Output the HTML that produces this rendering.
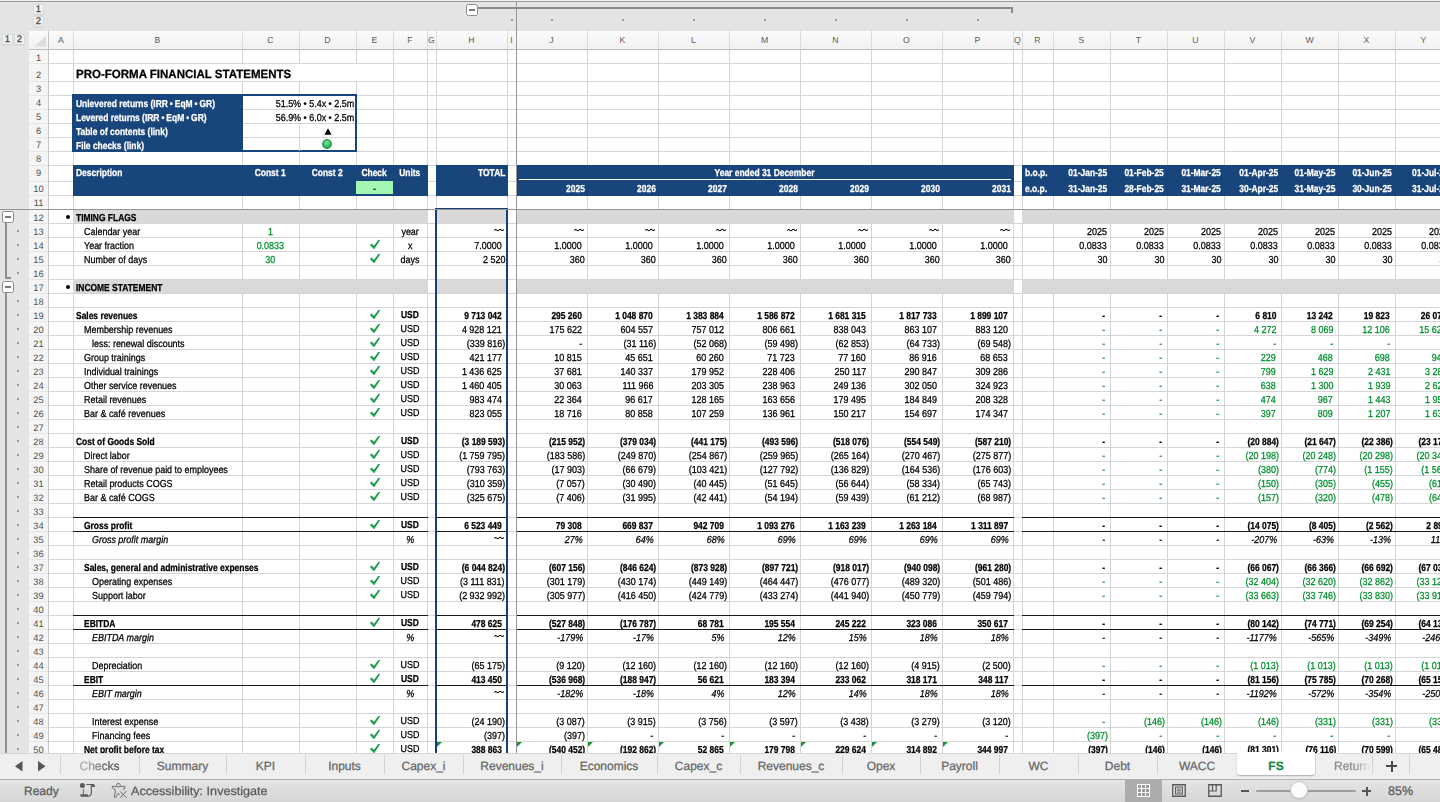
<!DOCTYPE html>
<html><head><meta charset="utf-8"><title>FS</title>
<style>
html,body{margin:0;padding:0;}
body{width:1440px;height:802px;overflow:hidden;position:relative;font-family:"Liberation Sans", sans-serif;font-size:9px;color:#000;background:#e4e4e4;text-rendering:geometricPrecision;}
body>div,body>svg{position:absolute;}
.t{overflow:visible;box-sizing:border-box;-webkit-text-stroke:0.25px currentColor;}
.h{-webkit-text-stroke:0;}
</style></head><body>
<div style="left:0px;top:0px;width:1440px;height:802px;background:#e4e4e4;"></div>
<div style="left:0px;top:0px;width:1440px;height:1px;background:#f0f0f0;"></div>
<div style="left:0px;top:1px;width:1440px;height:1px;background:#9a9a9a;"></div>
<div style="left:49px;top:50px;width:1391px;height:703px;background:#ffffff;"></div>
<div style="left:29px;top:31px;width:1411px;height:18px;background:linear-gradient(#fbfbfb,#f1f1f1)"></div>
<div style="left:29px;top:49px;width:1411px;height:1px;background:#bdbdbd;"></div>
<div style="left:29px;top:50px;width:19px;height:703px;background:#f5f5f5;"></div>
<div style="left:48px;top:31px;width:1px;height:722px;background:#c4c4c4;"></div>
<div style="left:73px;top:50px;width:1px;height:703px;background:#d5d5d5;"></div>
<div style="left:242px;top:50px;width:1px;height:703px;background:#d5d5d5;"></div>
<div style="left:299px;top:50px;width:1px;height:703px;background:#d5d5d5;"></div>
<div style="left:356px;top:50px;width:1px;height:703px;background:#d5d5d5;"></div>
<div style="left:393px;top:50px;width:1px;height:703px;background:#d5d5d5;"></div>
<div style="left:427px;top:50px;width:1px;height:703px;background:#d5d5d5;"></div>
<div style="left:436px;top:50px;width:1px;height:703px;background:#d5d5d5;"></div>
<div style="left:507px;top:50px;width:1px;height:703px;background:#d5d5d5;"></div>
<div style="left:516px;top:50px;width:1px;height:703px;background:#d5d5d5;"></div>
<div style="left:587px;top:50px;width:1px;height:703px;background:#d5d5d5;"></div>
<div style="left:658px;top:50px;width:1px;height:703px;background:#d5d5d5;"></div>
<div style="left:729px;top:50px;width:1px;height:703px;background:#d5d5d5;"></div>
<div style="left:800px;top:50px;width:1px;height:703px;background:#d5d5d5;"></div>
<div style="left:871px;top:50px;width:1px;height:703px;background:#d5d5d5;"></div>
<div style="left:942px;top:50px;width:1px;height:703px;background:#d5d5d5;"></div>
<div style="left:1013px;top:50px;width:1px;height:703px;background:#d5d5d5;"></div>
<div style="left:1022px;top:50px;width:1px;height:703px;background:#d5d5d5;"></div>
<div style="left:1053px;top:50px;width:1px;height:703px;background:#d5d5d5;"></div>
<div style="left:1110px;top:50px;width:1px;height:703px;background:#d5d5d5;"></div>
<div style="left:1167px;top:50px;width:1px;height:703px;background:#d5d5d5;"></div>
<div style="left:1224px;top:50px;width:1px;height:703px;background:#d5d5d5;"></div>
<div style="left:1281px;top:50px;width:1px;height:703px;background:#d5d5d5;"></div>
<div style="left:1338px;top:50px;width:1px;height:703px;background:#d5d5d5;"></div>
<div style="left:1395px;top:50px;width:1px;height:703px;background:#d5d5d5;"></div>
<div style="left:1452px;top:50px;width:1px;height:703px;background:#d5d5d5;"></div>
<div style="left:49px;top:63px;width:1391px;height:1px;background:#d5d5d5;"></div>
<div style="left:49px;top:81px;width:1391px;height:1px;background:#d5d5d5;"></div>
<div style="left:49px;top:95px;width:1391px;height:1px;background:#d5d5d5;"></div>
<div style="left:49px;top:109px;width:1391px;height:1px;background:#d5d5d5;"></div>
<div style="left:49px;top:123px;width:1391px;height:1px;background:#d5d5d5;"></div>
<div style="left:49px;top:137px;width:1391px;height:1px;background:#d5d5d5;"></div>
<div style="left:49px;top:151px;width:1391px;height:1px;background:#d5d5d5;"></div>
<div style="left:49px;top:165px;width:1391px;height:1px;background:#d5d5d5;"></div>
<div style="left:49px;top:181px;width:1391px;height:1px;background:#d5d5d5;"></div>
<div style="left:49px;top:195px;width:1391px;height:1px;background:#d5d5d5;"></div>
<div style="left:49px;top:209px;width:1391px;height:1px;background:#d5d5d5;"></div>
<div style="left:49px;top:223px;width:1391px;height:1px;background:#d5d5d5;"></div>
<div style="left:49px;top:237px;width:1391px;height:1px;background:#d5d5d5;"></div>
<div style="left:49px;top:251px;width:1391px;height:1px;background:#d5d5d5;"></div>
<div style="left:49px;top:265px;width:1391px;height:1px;background:#d5d5d5;"></div>
<div style="left:49px;top:279px;width:1391px;height:1px;background:#d5d5d5;"></div>
<div style="left:49px;top:293px;width:1391px;height:1px;background:#d5d5d5;"></div>
<div style="left:49px;top:307px;width:1391px;height:1px;background:#d5d5d5;"></div>
<div style="left:49px;top:321px;width:1391px;height:1px;background:#d5d5d5;"></div>
<div style="left:49px;top:335px;width:1391px;height:1px;background:#d5d5d5;"></div>
<div style="left:49px;top:349px;width:1391px;height:1px;background:#d5d5d5;"></div>
<div style="left:49px;top:363px;width:1391px;height:1px;background:#d5d5d5;"></div>
<div style="left:49px;top:377px;width:1391px;height:1px;background:#d5d5d5;"></div>
<div style="left:49px;top:391px;width:1391px;height:1px;background:#d5d5d5;"></div>
<div style="left:49px;top:405px;width:1391px;height:1px;background:#d5d5d5;"></div>
<div style="left:49px;top:419px;width:1391px;height:1px;background:#d5d5d5;"></div>
<div style="left:49px;top:433px;width:1391px;height:1px;background:#d5d5d5;"></div>
<div style="left:49px;top:447px;width:1391px;height:1px;background:#d5d5d5;"></div>
<div style="left:49px;top:461px;width:1391px;height:1px;background:#d5d5d5;"></div>
<div style="left:49px;top:475px;width:1391px;height:1px;background:#d5d5d5;"></div>
<div style="left:49px;top:489px;width:1391px;height:1px;background:#d5d5d5;"></div>
<div style="left:49px;top:503px;width:1391px;height:1px;background:#d5d5d5;"></div>
<div style="left:49px;top:517px;width:1391px;height:1px;background:#d5d5d5;"></div>
<div style="left:49px;top:531px;width:1391px;height:1px;background:#d5d5d5;"></div>
<div style="left:49px;top:545px;width:1391px;height:1px;background:#d5d5d5;"></div>
<div style="left:49px;top:559px;width:1391px;height:1px;background:#d5d5d5;"></div>
<div style="left:49px;top:573px;width:1391px;height:1px;background:#d5d5d5;"></div>
<div style="left:49px;top:587px;width:1391px;height:1px;background:#d5d5d5;"></div>
<div style="left:49px;top:601px;width:1391px;height:1px;background:#d5d5d5;"></div>
<div style="left:49px;top:615px;width:1391px;height:1px;background:#d5d5d5;"></div>
<div style="left:49px;top:629px;width:1391px;height:1px;background:#d5d5d5;"></div>
<div style="left:49px;top:643px;width:1391px;height:1px;background:#d5d5d5;"></div>
<div style="left:49px;top:657px;width:1391px;height:1px;background:#d5d5d5;"></div>
<div style="left:49px;top:671px;width:1391px;height:1px;background:#d5d5d5;"></div>
<div style="left:49px;top:685px;width:1391px;height:1px;background:#d5d5d5;"></div>
<div style="left:49px;top:699px;width:1391px;height:1px;background:#d5d5d5;"></div>
<div style="left:49px;top:713px;width:1391px;height:1px;background:#d5d5d5;"></div>
<div style="left:49px;top:727px;width:1391px;height:1px;background:#d5d5d5;"></div>
<div style="left:49px;top:741px;width:1391px;height:1px;background:#d5d5d5;"></div>
<div style="left:73px;top:31px;width:1px;height:18px;background:#dcdcdc;"></div>
<div style="left:242px;top:31px;width:1px;height:18px;background:#dcdcdc;"></div>
<div style="left:299px;top:31px;width:1px;height:18px;background:#dcdcdc;"></div>
<div style="left:356px;top:31px;width:1px;height:18px;background:#dcdcdc;"></div>
<div style="left:393px;top:31px;width:1px;height:18px;background:#dcdcdc;"></div>
<div style="left:427px;top:31px;width:1px;height:18px;background:#dcdcdc;"></div>
<div style="left:436px;top:31px;width:1px;height:18px;background:#dcdcdc;"></div>
<div style="left:507px;top:31px;width:1px;height:18px;background:#dcdcdc;"></div>
<div style="left:516px;top:31px;width:1px;height:18px;background:#dcdcdc;"></div>
<div style="left:587px;top:31px;width:1px;height:18px;background:#dcdcdc;"></div>
<div style="left:658px;top:31px;width:1px;height:18px;background:#dcdcdc;"></div>
<div style="left:729px;top:31px;width:1px;height:18px;background:#dcdcdc;"></div>
<div style="left:800px;top:31px;width:1px;height:18px;background:#dcdcdc;"></div>
<div style="left:871px;top:31px;width:1px;height:18px;background:#dcdcdc;"></div>
<div style="left:942px;top:31px;width:1px;height:18px;background:#dcdcdc;"></div>
<div style="left:1013px;top:31px;width:1px;height:18px;background:#dcdcdc;"></div>
<div style="left:1022px;top:31px;width:1px;height:18px;background:#dcdcdc;"></div>
<div style="left:1053px;top:31px;width:1px;height:18px;background:#dcdcdc;"></div>
<div style="left:1110px;top:31px;width:1px;height:18px;background:#dcdcdc;"></div>
<div style="left:1167px;top:31px;width:1px;height:18px;background:#dcdcdc;"></div>
<div style="left:1224px;top:31px;width:1px;height:18px;background:#dcdcdc;"></div>
<div style="left:1281px;top:31px;width:1px;height:18px;background:#dcdcdc;"></div>
<div style="left:1338px;top:31px;width:1px;height:18px;background:#dcdcdc;"></div>
<div style="left:1395px;top:31px;width:1px;height:18px;background:#dcdcdc;"></div>
<div style="left:1452px;top:31px;width:1px;height:18px;background:#dcdcdc;"></div>
<div style="left:29px;top:63px;width:19px;height:1px;background:#e6e6e6;"></div>
<div style="left:29px;top:81px;width:19px;height:1px;background:#e6e6e6;"></div>
<div style="left:29px;top:95px;width:19px;height:1px;background:#e6e6e6;"></div>
<div style="left:29px;top:109px;width:19px;height:1px;background:#e6e6e6;"></div>
<div style="left:29px;top:123px;width:19px;height:1px;background:#e6e6e6;"></div>
<div style="left:29px;top:137px;width:19px;height:1px;background:#e6e6e6;"></div>
<div style="left:29px;top:151px;width:19px;height:1px;background:#e6e6e6;"></div>
<div style="left:29px;top:165px;width:19px;height:1px;background:#e6e6e6;"></div>
<div style="left:29px;top:181px;width:19px;height:1px;background:#e6e6e6;"></div>
<div style="left:29px;top:195px;width:19px;height:1px;background:#e6e6e6;"></div>
<div style="left:29px;top:209px;width:19px;height:1px;background:#e6e6e6;"></div>
<div style="left:29px;top:223px;width:19px;height:1px;background:#e6e6e6;"></div>
<div style="left:29px;top:237px;width:19px;height:1px;background:#e6e6e6;"></div>
<div style="left:29px;top:251px;width:19px;height:1px;background:#e6e6e6;"></div>
<div style="left:29px;top:265px;width:19px;height:1px;background:#e6e6e6;"></div>
<div style="left:29px;top:279px;width:19px;height:1px;background:#e6e6e6;"></div>
<div style="left:29px;top:293px;width:19px;height:1px;background:#e6e6e6;"></div>
<div style="left:29px;top:307px;width:19px;height:1px;background:#e6e6e6;"></div>
<div style="left:29px;top:321px;width:19px;height:1px;background:#e6e6e6;"></div>
<div style="left:29px;top:335px;width:19px;height:1px;background:#e6e6e6;"></div>
<div style="left:29px;top:349px;width:19px;height:1px;background:#e6e6e6;"></div>
<div style="left:29px;top:363px;width:19px;height:1px;background:#e6e6e6;"></div>
<div style="left:29px;top:377px;width:19px;height:1px;background:#e6e6e6;"></div>
<div style="left:29px;top:391px;width:19px;height:1px;background:#e6e6e6;"></div>
<div style="left:29px;top:405px;width:19px;height:1px;background:#e6e6e6;"></div>
<div style="left:29px;top:419px;width:19px;height:1px;background:#e6e6e6;"></div>
<div style="left:29px;top:433px;width:19px;height:1px;background:#e6e6e6;"></div>
<div style="left:29px;top:447px;width:19px;height:1px;background:#e6e6e6;"></div>
<div style="left:29px;top:461px;width:19px;height:1px;background:#e6e6e6;"></div>
<div style="left:29px;top:475px;width:19px;height:1px;background:#e6e6e6;"></div>
<div style="left:29px;top:489px;width:19px;height:1px;background:#e6e6e6;"></div>
<div style="left:29px;top:503px;width:19px;height:1px;background:#e6e6e6;"></div>
<div style="left:29px;top:517px;width:19px;height:1px;background:#e6e6e6;"></div>
<div style="left:29px;top:531px;width:19px;height:1px;background:#e6e6e6;"></div>
<div style="left:29px;top:545px;width:19px;height:1px;background:#e6e6e6;"></div>
<div style="left:29px;top:559px;width:19px;height:1px;background:#e6e6e6;"></div>
<div style="left:29px;top:573px;width:19px;height:1px;background:#e6e6e6;"></div>
<div style="left:29px;top:587px;width:19px;height:1px;background:#e6e6e6;"></div>
<div style="left:29px;top:601px;width:19px;height:1px;background:#e6e6e6;"></div>
<div style="left:29px;top:615px;width:19px;height:1px;background:#e6e6e6;"></div>
<div style="left:29px;top:629px;width:19px;height:1px;background:#e6e6e6;"></div>
<div style="left:29px;top:643px;width:19px;height:1px;background:#e6e6e6;"></div>
<div style="left:29px;top:657px;width:19px;height:1px;background:#e6e6e6;"></div>
<div style="left:29px;top:671px;width:19px;height:1px;background:#e6e6e6;"></div>
<div style="left:29px;top:685px;width:19px;height:1px;background:#e6e6e6;"></div>
<div style="left:29px;top:699px;width:19px;height:1px;background:#e6e6e6;"></div>
<div style="left:29px;top:713px;width:19px;height:1px;background:#e6e6e6;"></div>
<div style="left:29px;top:727px;width:19px;height:1px;background:#e6e6e6;"></div>
<div style="left:29px;top:741px;width:19px;height:1px;background:#e6e6e6;"></div>
<div class="t h" style="left:49px;width:24px;top:32.99px;height:14px;line-height:14px;font-size:8.7px;color:#5c5c5c;text-align:center;">A</div>
<div class="t h" style="left:73px;width:169px;top:32.99px;height:14px;line-height:14px;font-size:8.7px;color:#5c5c5c;text-align:center;">B</div>
<div class="t h" style="left:242px;width:57px;top:32.99px;height:14px;line-height:14px;font-size:8.7px;color:#5c5c5c;text-align:center;">C</div>
<div class="t h" style="left:299px;width:57px;top:32.99px;height:14px;line-height:14px;font-size:8.7px;color:#5c5c5c;text-align:center;">D</div>
<div class="t h" style="left:356px;width:37px;top:32.99px;height:14px;line-height:14px;font-size:8.7px;color:#5c5c5c;text-align:center;">E</div>
<div class="t h" style="left:393px;width:34px;top:32.99px;height:14px;line-height:14px;font-size:8.7px;color:#5c5c5c;text-align:center;">F</div>
<div class="t h" style="left:427px;width:9px;top:32.99px;height:14px;line-height:14px;font-size:8.7px;color:#5c5c5c;text-align:center;">G</div>
<div class="t h" style="left:436px;width:71px;top:32.99px;height:14px;line-height:14px;font-size:8.7px;color:#5c5c5c;text-align:center;">H</div>
<div class="t h" style="left:507px;width:9px;top:32.99px;height:14px;line-height:14px;font-size:8.7px;color:#5c5c5c;text-align:center;">I</div>
<div class="t h" style="left:516px;width:71px;top:32.99px;height:14px;line-height:14px;font-size:8.7px;color:#5c5c5c;text-align:center;">J</div>
<div class="t h" style="left:587px;width:71px;top:32.99px;height:14px;line-height:14px;font-size:8.7px;color:#5c5c5c;text-align:center;">K</div>
<div class="t h" style="left:658px;width:71px;top:32.99px;height:14px;line-height:14px;font-size:8.7px;color:#5c5c5c;text-align:center;">L</div>
<div class="t h" style="left:729px;width:71px;top:32.99px;height:14px;line-height:14px;font-size:8.7px;color:#5c5c5c;text-align:center;">M</div>
<div class="t h" style="left:800px;width:71px;top:32.99px;height:14px;line-height:14px;font-size:8.7px;color:#5c5c5c;text-align:center;">N</div>
<div class="t h" style="left:871px;width:71px;top:32.99px;height:14px;line-height:14px;font-size:8.7px;color:#5c5c5c;text-align:center;">O</div>
<div class="t h" style="left:942px;width:71px;top:32.99px;height:14px;line-height:14px;font-size:8.7px;color:#5c5c5c;text-align:center;">P</div>
<div class="t h" style="left:1013px;width:9px;top:32.99px;height:14px;line-height:14px;font-size:8.7px;color:#5c5c5c;text-align:center;">Q</div>
<div class="t h" style="left:1022px;width:31px;top:32.99px;height:14px;line-height:14px;font-size:8.7px;color:#5c5c5c;text-align:center;">R</div>
<div class="t h" style="left:1053px;width:57px;top:32.99px;height:14px;line-height:14px;font-size:8.7px;color:#5c5c5c;text-align:center;">S</div>
<div class="t h" style="left:1110px;width:57px;top:32.99px;height:14px;line-height:14px;font-size:8.7px;color:#5c5c5c;text-align:center;">T</div>
<div class="t h" style="left:1167px;width:57px;top:32.99px;height:14px;line-height:14px;font-size:8.7px;color:#5c5c5c;text-align:center;">U</div>
<div class="t h" style="left:1224px;width:57px;top:32.99px;height:14px;line-height:14px;font-size:8.7px;color:#5c5c5c;text-align:center;">V</div>
<div class="t h" style="left:1281px;width:57px;top:32.99px;height:14px;line-height:14px;font-size:8.7px;color:#5c5c5c;text-align:center;">W</div>
<div class="t h" style="left:1338px;width:57px;top:32.99px;height:14px;line-height:14px;font-size:8.7px;color:#5c5c5c;text-align:center;">X</div>
<div class="t h" style="left:1395px;width:57px;top:32.99px;height:14px;line-height:14px;font-size:8.7px;color:#5c5c5c;text-align:center;">Y</div>
<div class="t h" style="left:29px;width:19px;top:50.78px;height:14px;line-height:14px;font-size:9.3px;color:#505050;text-align:center;">1</div>
<div class="t h" style="left:29px;width:19px;top:67.78px;height:14px;line-height:14px;font-size:9.3px;color:#505050;text-align:center;">2</div>
<div class="t h" style="left:29px;width:19px;top:81.78px;height:14px;line-height:14px;font-size:9.3px;color:#505050;text-align:center;">3</div>
<div class="t h" style="left:29px;width:19px;top:95.78px;height:14px;line-height:14px;font-size:9.3px;color:#505050;text-align:center;">4</div>
<div class="t h" style="left:29px;width:19px;top:109.78px;height:14px;line-height:14px;font-size:9.3px;color:#505050;text-align:center;">5</div>
<div class="t h" style="left:29px;width:19px;top:123.78px;height:14px;line-height:14px;font-size:9.3px;color:#505050;text-align:center;">6</div>
<div class="t h" style="left:29px;width:19px;top:137.78px;height:14px;line-height:14px;font-size:9.3px;color:#505050;text-align:center;">7</div>
<div class="t h" style="left:29px;width:19px;top:151.78px;height:14px;line-height:14px;font-size:9.3px;color:#505050;text-align:center;">8</div>
<div class="t h" style="left:29px;width:19px;top:165.78px;height:14px;line-height:14px;font-size:9.3px;color:#505050;text-align:center;">9</div>
<div class="t h" style="left:29px;width:19px;top:181.78px;height:14px;line-height:14px;font-size:9.3px;color:#505050;text-align:center;">10</div>
<div class="t h" style="left:29px;width:19px;top:195.78px;height:14px;line-height:14px;font-size:9.3px;color:#505050;text-align:center;">11</div>
<div class="t h" style="left:29px;width:19px;top:210.78px;height:14px;line-height:14px;font-size:9.3px;color:#505050;text-align:center;">12</div>
<div class="t h" style="left:29px;width:19px;top:224.78px;height:14px;line-height:14px;font-size:9.3px;color:#505050;text-align:center;">13</div>
<div class="t h" style="left:29px;width:19px;top:238.78px;height:14px;line-height:14px;font-size:9.3px;color:#505050;text-align:center;">14</div>
<div class="t h" style="left:29px;width:19px;top:252.78px;height:14px;line-height:14px;font-size:9.3px;color:#505050;text-align:center;">15</div>
<div class="t h" style="left:29px;width:19px;top:266.78px;height:14px;line-height:14px;font-size:9.3px;color:#505050;text-align:center;">16</div>
<div class="t h" style="left:29px;width:19px;top:280.78px;height:14px;line-height:14px;font-size:9.3px;color:#505050;text-align:center;">17</div>
<div class="t h" style="left:29px;width:19px;top:294.78px;height:14px;line-height:14px;font-size:9.3px;color:#505050;text-align:center;">18</div>
<div class="t h" style="left:29px;width:19px;top:308.78px;height:14px;line-height:14px;font-size:9.3px;color:#505050;text-align:center;">19</div>
<div class="t h" style="left:29px;width:19px;top:322.78px;height:14px;line-height:14px;font-size:9.3px;color:#505050;text-align:center;">20</div>
<div class="t h" style="left:29px;width:19px;top:336.78px;height:14px;line-height:14px;font-size:9.3px;color:#505050;text-align:center;">21</div>
<div class="t h" style="left:29px;width:19px;top:350.78px;height:14px;line-height:14px;font-size:9.3px;color:#505050;text-align:center;">22</div>
<div class="t h" style="left:29px;width:19px;top:364.78px;height:14px;line-height:14px;font-size:9.3px;color:#505050;text-align:center;">23</div>
<div class="t h" style="left:29px;width:19px;top:378.78px;height:14px;line-height:14px;font-size:9.3px;color:#505050;text-align:center;">24</div>
<div class="t h" style="left:29px;width:19px;top:392.78px;height:14px;line-height:14px;font-size:9.3px;color:#505050;text-align:center;">25</div>
<div class="t h" style="left:29px;width:19px;top:406.78px;height:14px;line-height:14px;font-size:9.3px;color:#505050;text-align:center;">26</div>
<div class="t h" style="left:29px;width:19px;top:420.78px;height:14px;line-height:14px;font-size:9.3px;color:#505050;text-align:center;">27</div>
<div class="t h" style="left:29px;width:19px;top:434.78px;height:14px;line-height:14px;font-size:9.3px;color:#505050;text-align:center;">28</div>
<div class="t h" style="left:29px;width:19px;top:448.78px;height:14px;line-height:14px;font-size:9.3px;color:#505050;text-align:center;">29</div>
<div class="t h" style="left:29px;width:19px;top:462.78px;height:14px;line-height:14px;font-size:9.3px;color:#505050;text-align:center;">30</div>
<div class="t h" style="left:29px;width:19px;top:476.78px;height:14px;line-height:14px;font-size:9.3px;color:#505050;text-align:center;">31</div>
<div class="t h" style="left:29px;width:19px;top:490.78px;height:14px;line-height:14px;font-size:9.3px;color:#505050;text-align:center;">32</div>
<div class="t h" style="left:29px;width:19px;top:504.78px;height:14px;line-height:14px;font-size:9.3px;color:#505050;text-align:center;">33</div>
<div class="t h" style="left:29px;width:19px;top:518.78px;height:14px;line-height:14px;font-size:9.3px;color:#505050;text-align:center;">34</div>
<div class="t h" style="left:29px;width:19px;top:532.78px;height:14px;line-height:14px;font-size:9.3px;color:#505050;text-align:center;">35</div>
<div class="t h" style="left:29px;width:19px;top:546.78px;height:14px;line-height:14px;font-size:9.3px;color:#505050;text-align:center;">36</div>
<div class="t h" style="left:29px;width:19px;top:560.78px;height:14px;line-height:14px;font-size:9.3px;color:#505050;text-align:center;">37</div>
<div class="t h" style="left:29px;width:19px;top:574.78px;height:14px;line-height:14px;font-size:9.3px;color:#505050;text-align:center;">38</div>
<div class="t h" style="left:29px;width:19px;top:588.78px;height:14px;line-height:14px;font-size:9.3px;color:#505050;text-align:center;">39</div>
<div class="t h" style="left:29px;width:19px;top:602.78px;height:14px;line-height:14px;font-size:9.3px;color:#505050;text-align:center;">40</div>
<div class="t h" style="left:29px;width:19px;top:616.78px;height:14px;line-height:14px;font-size:9.3px;color:#505050;text-align:center;">41</div>
<div class="t h" style="left:29px;width:19px;top:630.78px;height:14px;line-height:14px;font-size:9.3px;color:#505050;text-align:center;">42</div>
<div class="t h" style="left:29px;width:19px;top:644.78px;height:14px;line-height:14px;font-size:9.3px;color:#505050;text-align:center;">43</div>
<div class="t h" style="left:29px;width:19px;top:658.78px;height:14px;line-height:14px;font-size:9.3px;color:#505050;text-align:center;">44</div>
<div class="t h" style="left:29px;width:19px;top:672.78px;height:14px;line-height:14px;font-size:9.3px;color:#505050;text-align:center;">45</div>
<div class="t h" style="left:29px;width:19px;top:686.78px;height:14px;line-height:14px;font-size:9.3px;color:#505050;text-align:center;">46</div>
<div class="t h" style="left:29px;width:19px;top:700.78px;height:14px;line-height:14px;font-size:9.3px;color:#505050;text-align:center;">47</div>
<div class="t h" style="left:29px;width:19px;top:714.78px;height:14px;line-height:14px;font-size:9.3px;color:#505050;text-align:center;">48</div>
<div class="t h" style="left:29px;width:19px;top:728.78px;height:14px;line-height:14px;font-size:9.3px;color:#505050;text-align:center;">49</div>
<div class="t h" style="left:29px;width:19px;top:742.78px;height:14px;line-height:14px;font-size:9.3px;color:#505050;text-align:center;">50</div>
<div style="left:74px;top:64px;width:286px;height:17px;background:#fff;"></div>
<div style="left:72px;top:94px;width:171px;height:58px;background:#19457d;"></div>
<div style="left:242px;top:94px;width:115px;height:58px;background:#19457d;"></div>
<div style="left:243px;top:96px;width:112px;height:54px;background:#fff;"></div>
<div style="left:243px;top:109px;width:112px;height:1px;background:#d5d5d5;"></div>
<div style="left:243px;top:123px;width:112px;height:1px;background:#d5d5d5;"></div>
<div style="left:243px;top:137px;width:112px;height:1px;background:#d5d5d5;"></div>
<div style="left:299px;top:123px;width:1px;height:28px;background:#d5d5d5;"></div>
<div style="left:73px;top:165px;width:355px;height:31px;background:#19457d;"></div>
<div style="left:436px;top:165px;width:72px;height:31px;background:#19457d;"></div>
<div style="left:516px;top:165px;width:498px;height:31px;background:#19457d;"></div>
<div style="left:1022px;top:165px;width:419px;height:31px;background:#19457d;"></div>
<div style="left:356px;top:181px;width:37px;height:13px;background:#a3f7b5;"></div>
<div style="left:519px;top:179px;width:492px;height:1px;background:#ffffff;"></div>
<div style="left:73px;top:210px;width:355px;height:13px;background:#d9d9d9;"></div>
<div style="left:436px;top:210px;width:72px;height:13px;background:#d9d9d9;"></div>
<div style="left:516px;top:210px;width:498px;height:13px;background:#d9d9d9;"></div>
<div style="left:1022px;top:210px;width:419px;height:13px;background:#d9d9d9;"></div>
<div style="left:73px;top:280px;width:355px;height:13px;background:#d9d9d9;"></div>
<div style="left:436px;top:280px;width:72px;height:13px;background:#d9d9d9;"></div>
<div style="left:516px;top:280px;width:498px;height:13px;background:#d9d9d9;"></div>
<div style="left:1022px;top:280px;width:419px;height:13px;background:#d9d9d9;"></div>
<div style="left:74px;top:560px;width:225px;height:13px;background:#fff;"></div>
<div style="left:73px;top:517px;width:355px;height:1px;background:#1a1a1a;"></div>
<div style="left:436px;top:517px;width:72px;height:1px;background:#1a1a1a;"></div>
<div style="left:516px;top:517px;width:498px;height:1px;background:#1a1a1a;"></div>
<div style="left:1022px;top:517px;width:419px;height:1px;background:#1a1a1a;"></div>
<div style="left:73px;top:531px;width:355px;height:1px;background:#1a1a1a;"></div>
<div style="left:436px;top:531px;width:72px;height:1px;background:#1a1a1a;"></div>
<div style="left:516px;top:531px;width:498px;height:1px;background:#1a1a1a;"></div>
<div style="left:1022px;top:531px;width:419px;height:1px;background:#1a1a1a;"></div>
<div style="left:73px;top:615px;width:355px;height:1px;background:#1a1a1a;"></div>
<div style="left:436px;top:615px;width:72px;height:1px;background:#1a1a1a;"></div>
<div style="left:516px;top:615px;width:498px;height:1px;background:#1a1a1a;"></div>
<div style="left:1022px;top:615px;width:419px;height:1px;background:#1a1a1a;"></div>
<div style="left:73px;top:629px;width:355px;height:1px;background:#1a1a1a;"></div>
<div style="left:436px;top:629px;width:72px;height:1px;background:#1a1a1a;"></div>
<div style="left:516px;top:629px;width:498px;height:1px;background:#1a1a1a;"></div>
<div style="left:1022px;top:629px;width:419px;height:1px;background:#1a1a1a;"></div>
<div style="left:73px;top:685px;width:355px;height:1px;background:#1a1a1a;"></div>
<div style="left:436px;top:685px;width:72px;height:1px;background:#1a1a1a;"></div>
<div style="left:516px;top:685px;width:498px;height:1px;background:#1a1a1a;"></div>
<div style="left:1022px;top:685px;width:419px;height:1px;background:#1a1a1a;"></div>
<div class="t" style="left:76px;width:324px;top:66.84px;height:14px;line-height:14px;font-size:12px;font-weight:700;"><span style="display:inline-block;transform:scaleX(0.96);transform-origin:left 11.16px">PRO-FORMA FINANCIAL STATEMENTS</span></div>
<div class="t" style="left:76px;width:164px;top:96.74px;height:14px;line-height:14px;font-size:9.4px;font-weight:700;color:#fff;"><span style="display:inline-block;transform:scale(0.9,1.08);transform-origin:left 10.26px">Unlevered returns (IRR<span style="margin:0 2.2px">•</span>EqM<span style="margin:0 2.2px">•</span>GR)</span></div>
<div class="t" style="left:76px;width:164px;top:110.74px;height:14px;line-height:14px;font-size:9.4px;font-weight:700;color:#fff;"><span style="display:inline-block;transform:scale(0.9,1.08);transform-origin:left 10.26px">Levered returns (IRR<span style="margin:0 2.2px">•</span>EqM<span style="margin:0 2.2px">•</span>GR)</span></div>
<div class="t" style="left:76px;width:164px;top:124.74px;height:14px;line-height:14px;font-size:9.4px;font-weight:700;color:#fff;"><span style="display:inline-block;transform:scale(0.9,1.08);transform-origin:left 10.26px">Table of contents (link)</span></div>
<div class="t" style="left:76px;width:164px;top:138.74px;height:14px;line-height:14px;font-size:9.4px;font-weight:700;color:#fff;"><span style="display:inline-block;transform:scale(0.9,1.08);transform-origin:left 10.26px">File checks (link)</span></div>
<div class="t" style="left:200px;width:154px;top:96.74px;height:14px;line-height:14px;font-size:9.4px;text-align:right;"><span style="display:inline-block;transform:scale(0.955,1.08);transform-origin:right 10.26px">51.5% • 5.4x • 2.5m</span></div>
<div class="t" style="left:200px;width:154px;top:110.74px;height:14px;line-height:14px;font-size:9.4px;text-align:right;"><span style="display:inline-block;transform:scale(0.955,1.08);transform-origin:right 10.26px">56.9% • 6.0x • 2.5m</span></div>
<svg style="left:324px;top:128px" width="8" height="7" viewBox="0 0 8 7"><path d="M4 0.3 L7.6 6.8 L0.4 6.8 Z" fill="#000"/></svg>
<div style="left:322px;top:139px;width:10px;height:10px;border-radius:50%;box-sizing:border-box;border:1px solid #178a3c;background:radial-gradient(circle at 45% 35%,#7fe0a0,#22b455 70%)"></div>
<div class="t" style="left:76px;width:164px;top:165.74px;height:14px;line-height:14px;font-size:9.4px;font-weight:700;color:#ffffff;"><span style="display:inline-block;transform:scale(0.9,1.08);transform-origin:left 10.26px">Description</span></div>
<div class="t" style="left:242px;width:57px;top:165.74px;height:14px;line-height:14px;font-size:9.4px;font-weight:700;color:#ffffff;text-align:center;"><span style="display:inline-block;transform:scale(0.9,1.08);transform-origin:center 10.26px">Const 1</span></div>
<div class="t" style="left:299px;width:57px;top:165.74px;height:14px;line-height:14px;font-size:9.4px;font-weight:700;color:#ffffff;text-align:center;"><span style="display:inline-block;transform:scale(0.9,1.08);transform-origin:center 10.26px">Const 2</span></div>
<div class="t" style="left:356px;width:37px;top:165.74px;height:14px;line-height:14px;font-size:9.4px;font-weight:700;color:#ffffff;text-align:center;"><span style="display:inline-block;transform:scale(0.9,1.08);transform-origin:center 10.26px">Check</span></div>
<div class="t" style="left:393px;width:34px;top:165.74px;height:14px;line-height:14px;font-size:9.4px;font-weight:700;color:#ffffff;text-align:center;"><span style="display:inline-block;transform:scale(0.9,1.08);transform-origin:center 10.26px">Units</span></div>
<div class="t" style="left:440px;width:67px;top:165.74px;height:14px;line-height:14px;font-size:9.4px;font-weight:700;color:#ffffff;text-align:right;padding-right:2px;"><span style="display:inline-block;transform:scale(0.9,1.08);transform-origin:right 10.26px">TOTAL</span></div>
<div class="t" style="left:516px;width:497px;top:165.74px;height:14px;line-height:14px;font-size:9.4px;font-weight:700;color:#ffffff;text-align:center;"><span style="display:inline-block;transform:scale(0.9,1.08);transform-origin:center 10.26px">Year ended 31 December</span></div>
<div class="t" style="left:516px;width:71px;top:181.74px;height:14px;line-height:14px;font-size:9.4px;font-weight:700;color:#ffffff;text-align:right;padding-right:2px;"><span style="display:inline-block;transform:scale(0.9,1.08);transform-origin:right 10.26px">2025</span></div>
<div class="t" style="left:587px;width:71px;top:181.74px;height:14px;line-height:14px;font-size:9.4px;font-weight:700;color:#ffffff;text-align:right;padding-right:2px;"><span style="display:inline-block;transform:scale(0.9,1.08);transform-origin:right 10.26px">2026</span></div>
<div class="t" style="left:658px;width:71px;top:181.74px;height:14px;line-height:14px;font-size:9.4px;font-weight:700;color:#ffffff;text-align:right;padding-right:2px;"><span style="display:inline-block;transform:scale(0.9,1.08);transform-origin:right 10.26px">2027</span></div>
<div class="t" style="left:729px;width:71px;top:181.74px;height:14px;line-height:14px;font-size:9.4px;font-weight:700;color:#ffffff;text-align:right;padding-right:2px;"><span style="display:inline-block;transform:scale(0.9,1.08);transform-origin:right 10.26px">2028</span></div>
<div class="t" style="left:800px;width:71px;top:181.74px;height:14px;line-height:14px;font-size:9.4px;font-weight:700;color:#ffffff;text-align:right;padding-right:2px;"><span style="display:inline-block;transform:scale(0.9,1.08);transform-origin:right 10.26px">2029</span></div>
<div class="t" style="left:871px;width:71px;top:181.74px;height:14px;line-height:14px;font-size:9.4px;font-weight:700;color:#ffffff;text-align:right;padding-right:2px;"><span style="display:inline-block;transform:scale(0.9,1.08);transform-origin:right 10.26px">2030</span></div>
<div class="t" style="left:942px;width:71px;top:181.74px;height:14px;line-height:14px;font-size:9.4px;font-weight:700;color:#ffffff;text-align:right;padding-right:2px;"><span style="display:inline-block;transform:scale(0.9,1.08);transform-origin:right 10.26px">2031</span></div>
<div class="t" style="left:356px;width:37px;top:181.74px;height:14px;line-height:14px;font-size:9.4px;text-align:center;"><span style="display:inline-block;transform:scale(0.955,1.08);transform-origin:center 10.26px">-</span></div>
<div class="t" style="left:1025px;width:75px;top:165.74px;height:14px;line-height:14px;font-size:9.4px;font-weight:700;color:#ffffff;"><span style="display:inline-block;transform:scale(0.9,1.08);transform-origin:left 10.26px">b.o.p.</span></div>
<div class="t" style="left:1025px;width:75px;top:181.74px;height:14px;line-height:14px;font-size:9.4px;font-weight:700;color:#ffffff;"><span style="display:inline-block;transform:scale(0.9,1.08);transform-origin:left 10.26px">e.o.p.</span></div>
<div class="t" style="left:1033px;width:77px;top:165.74px;height:14px;line-height:14px;font-size:9.4px;font-weight:700;color:#ffffff;text-align:right;padding-right:3px;"><span style="display:inline-block;transform:scale(0.9,1.08);transform-origin:right 10.26px">01-Jan-25</span></div>
<div class="t" style="left:1033px;width:77px;top:181.74px;height:14px;line-height:14px;font-size:9.4px;font-weight:700;color:#ffffff;text-align:right;padding-right:3px;"><span style="display:inline-block;transform:scale(0.9,1.08);transform-origin:right 10.26px">31-Jan-25</span></div>
<div class="t" style="left:1090px;width:77px;top:165.74px;height:14px;line-height:14px;font-size:9.4px;font-weight:700;color:#ffffff;text-align:right;padding-right:3px;"><span style="display:inline-block;transform:scale(0.9,1.08);transform-origin:right 10.26px">01-Feb-25</span></div>
<div class="t" style="left:1090px;width:77px;top:181.74px;height:14px;line-height:14px;font-size:9.4px;font-weight:700;color:#ffffff;text-align:right;padding-right:3px;"><span style="display:inline-block;transform:scale(0.9,1.08);transform-origin:right 10.26px">28-Feb-25</span></div>
<div class="t" style="left:1147px;width:77px;top:165.74px;height:14px;line-height:14px;font-size:9.4px;font-weight:700;color:#ffffff;text-align:right;padding-right:3px;"><span style="display:inline-block;transform:scale(0.9,1.08);transform-origin:right 10.26px">01-Mar-25</span></div>
<div class="t" style="left:1147px;width:77px;top:181.74px;height:14px;line-height:14px;font-size:9.4px;font-weight:700;color:#ffffff;text-align:right;padding-right:3px;"><span style="display:inline-block;transform:scale(0.9,1.08);transform-origin:right 10.26px">31-Mar-25</span></div>
<div class="t" style="left:1204px;width:77px;top:165.74px;height:14px;line-height:14px;font-size:9.4px;font-weight:700;color:#ffffff;text-align:right;padding-right:3px;"><span style="display:inline-block;transform:scale(0.9,1.08);transform-origin:right 10.26px">01-Apr-25</span></div>
<div class="t" style="left:1204px;width:77px;top:181.74px;height:14px;line-height:14px;font-size:9.4px;font-weight:700;color:#ffffff;text-align:right;padding-right:3px;"><span style="display:inline-block;transform:scale(0.9,1.08);transform-origin:right 10.26px">30-Apr-25</span></div>
<div class="t" style="left:1261px;width:77px;top:165.74px;height:14px;line-height:14px;font-size:9.4px;font-weight:700;color:#ffffff;text-align:right;padding-right:3px;"><span style="display:inline-block;transform:scale(0.9,1.08);transform-origin:right 10.26px">01-May-25</span></div>
<div class="t" style="left:1261px;width:77px;top:181.74px;height:14px;line-height:14px;font-size:9.4px;font-weight:700;color:#ffffff;text-align:right;padding-right:3px;"><span style="display:inline-block;transform:scale(0.9,1.08);transform-origin:right 10.26px">31-May-25</span></div>
<div class="t" style="left:1318px;width:77px;top:165.74px;height:14px;line-height:14px;font-size:9.4px;font-weight:700;color:#ffffff;text-align:right;padding-right:3px;"><span style="display:inline-block;transform:scale(0.9,1.08);transform-origin:right 10.26px">01-Jun-25</span></div>
<div class="t" style="left:1318px;width:77px;top:181.74px;height:14px;line-height:14px;font-size:9.4px;font-weight:700;color:#ffffff;text-align:right;padding-right:3px;"><span style="display:inline-block;transform:scale(0.9,1.08);transform-origin:right 10.26px">30-Jun-25</span></div>
<div class="t" style="left:1375px;width:77px;top:165.74px;height:14px;line-height:14px;font-size:9.4px;font-weight:700;color:#ffffff;text-align:right;padding-right:3px;"><span style="display:inline-block;transform:scale(0.9,1.08);transform-origin:right 10.26px">01-Jul-25</span></div>
<div class="t" style="left:1375px;width:77px;top:181.74px;height:14px;line-height:14px;font-size:9.4px;font-weight:700;color:#ffffff;text-align:right;padding-right:3px;"><span style="display:inline-block;transform:scale(0.9,1.08);transform-origin:right 10.26px">31-Jul-25</span></div>
<div class="t" style="left:76px;width:344px;top:210.74px;height:14px;line-height:14px;font-size:9.4px;font-weight:700;"><span style="display:inline-block;transform:scale(0.9,1.08);transform-origin:left 10.26px">TIMING FLAGS</span></div>
<div style="left:66px;top:215px;width:4px;height:4px;border-radius:50%;background:#000"></div>
<div class="t" style="left:76px;width:344px;top:280.74px;height:14px;line-height:14px;font-size:9.4px;font-weight:700;"><span style="display:inline-block;transform:scale(0.9,1.08);transform-origin:left 10.26px">INCOME STATEMENT</span></div>
<div style="left:66px;top:285px;width:4px;height:4px;border-radius:50%;background:#000"></div>
<div class="t" style="left:84px;width:336px;top:224.74px;height:14px;line-height:14px;font-size:9.4px;"><span style="display:inline-block;transform:scale(0.955,1.08);transform-origin:left 10.26px">Calendar year</span></div>
<div class="t" style="left:242px;width:57px;top:224.74px;height:14px;line-height:14px;font-size:9.4px;color:#00902e;text-align:center;"><span style="display:inline-block;transform:scale(0.955,1.08);transform-origin:center 10.26px">1</span></div>
<div class="t" style="left:393px;width:34px;top:224.74px;height:14px;line-height:14px;font-size:9.4px;text-align:center;"><span style="display:inline-block;transform:scale(0.955,1.08);transform-origin:center 10.26px">year</span></div>
<svg style="left:494px;top:228px" width="10" height="4" viewBox="0 0 10 4"><path d="M0.3 2.6 Q1.5 0.6 2.6 2 T5 2 T7.4 2 T9.7 1.4" stroke="#000" stroke-width="1.05" fill="none"/></svg>
<svg style="left:574px;top:228px" width="10" height="4" viewBox="0 0 10 4"><path d="M0.3 2.6 Q1.5 0.6 2.6 2 T5 2 T7.4 2 T9.7 1.4" stroke="#000" stroke-width="1.05" fill="none"/></svg>
<svg style="left:645px;top:228px" width="10" height="4" viewBox="0 0 10 4"><path d="M0.3 2.6 Q1.5 0.6 2.6 2 T5 2 T7.4 2 T9.7 1.4" stroke="#000" stroke-width="1.05" fill="none"/></svg>
<svg style="left:716px;top:228px" width="10" height="4" viewBox="0 0 10 4"><path d="M0.3 2.6 Q1.5 0.6 2.6 2 T5 2 T7.4 2 T9.7 1.4" stroke="#000" stroke-width="1.05" fill="none"/></svg>
<svg style="left:787px;top:228px" width="10" height="4" viewBox="0 0 10 4"><path d="M0.3 2.6 Q1.5 0.6 2.6 2 T5 2 T7.4 2 T9.7 1.4" stroke="#000" stroke-width="1.05" fill="none"/></svg>
<svg style="left:858px;top:228px" width="10" height="4" viewBox="0 0 10 4"><path d="M0.3 2.6 Q1.5 0.6 2.6 2 T5 2 T7.4 2 T9.7 1.4" stroke="#000" stroke-width="1.05" fill="none"/></svg>
<svg style="left:929px;top:228px" width="10" height="4" viewBox="0 0 10 4"><path d="M0.3 2.6 Q1.5 0.6 2.6 2 T5 2 T7.4 2 T9.7 1.4" stroke="#000" stroke-width="1.05" fill="none"/></svg>
<svg style="left:1000px;top:228px" width="10" height="4" viewBox="0 0 10 4"><path d="M0.3 2.6 Q1.5 0.6 2.6 2 T5 2 T7.4 2 T9.7 1.4" stroke="#000" stroke-width="1.05" fill="none"/></svg>
<div class="t" style="left:993px;width:117px;top:224.74px;height:14px;line-height:14px;font-size:9.4px;text-align:right;padding-right:3px;"><span style="display:inline-block;transform:scale(0.955,1.08);transform-origin:right 10.26px">2025</span></div>
<div class="t" style="left:1050px;width:117px;top:224.74px;height:14px;line-height:14px;font-size:9.4px;text-align:right;padding-right:3px;"><span style="display:inline-block;transform:scale(0.955,1.08);transform-origin:right 10.26px">2025</span></div>
<div class="t" style="left:1107px;width:117px;top:224.74px;height:14px;line-height:14px;font-size:9.4px;text-align:right;padding-right:3px;"><span style="display:inline-block;transform:scale(0.955,1.08);transform-origin:right 10.26px">2025</span></div>
<div class="t" style="left:1164px;width:117px;top:224.74px;height:14px;line-height:14px;font-size:9.4px;text-align:right;padding-right:3px;"><span style="display:inline-block;transform:scale(0.955,1.08);transform-origin:right 10.26px">2025</span></div>
<div class="t" style="left:1221px;width:117px;top:224.74px;height:14px;line-height:14px;font-size:9.4px;text-align:right;padding-right:3px;"><span style="display:inline-block;transform:scale(0.955,1.08);transform-origin:right 10.26px">2025</span></div>
<div class="t" style="left:1278px;width:117px;top:224.74px;height:14px;line-height:14px;font-size:9.4px;text-align:right;padding-right:3px;"><span style="display:inline-block;transform:scale(0.955,1.08);transform-origin:right 10.26px">2025</span></div>
<div class="t" style="left:1335px;width:117px;top:224.74px;height:14px;line-height:14px;font-size:9.4px;text-align:right;padding-right:3px;"><span style="display:inline-block;transform:scale(0.955,1.08);transform-origin:right 10.26px">2025</span></div>
<div class="t" style="left:84px;width:336px;top:238.74px;height:14px;line-height:14px;font-size:9.4px;"><span style="display:inline-block;transform:scale(0.955,1.08);transform-origin:left 10.26px">Year fraction</span></div>
<div class="t" style="left:242px;width:57px;top:238.74px;height:14px;line-height:14px;font-size:9.4px;color:#00902e;text-align:center;"><span style="display:inline-block;transform:scale(0.955,1.08);transform-origin:center 10.26px">0.0833</span></div>
<svg style="left:369px;top:239px" width="12" height="11" viewBox="0 0 12 11"><path d="M0.9 6.1 L2.3 4.6 L5.0 6.8 L9.3 1.0 Q10.2 0.3 11.0 1.5 L5.5 9.7 Q5.0 10.2 4.5 9.7 Z" fill="#1f9d4e"/></svg>
<div class="t" style="left:393px;width:34px;top:238.74px;height:14px;line-height:14px;font-size:9.4px;text-align:center;"><span style="display:inline-block;transform:scale(0.955,1.08);transform-origin:center 10.26px">x</span></div>
<div class="t" style="left:376px;width:131px;top:238.74px;height:14px;line-height:14px;font-size:9.4px;text-align:right;padding-right:5px;"><span style="display:inline-block;transform:scale(0.955,1.08);transform-origin:right 10.26px">7.0000</span></div>
<div class="t" style="left:456px;width:131px;top:238.74px;height:14px;line-height:14px;font-size:9.4px;text-align:right;padding-right:5px;"><span style="display:inline-block;transform:scale(0.955,1.08);transform-origin:right 10.26px">1.0000</span></div>
<div class="t" style="left:527px;width:131px;top:238.74px;height:14px;line-height:14px;font-size:9.4px;text-align:right;padding-right:5px;"><span style="display:inline-block;transform:scale(0.955,1.08);transform-origin:right 10.26px">1.0000</span></div>
<div class="t" style="left:598px;width:131px;top:238.74px;height:14px;line-height:14px;font-size:9.4px;text-align:right;padding-right:5px;"><span style="display:inline-block;transform:scale(0.955,1.08);transform-origin:right 10.26px">1.0000</span></div>
<div class="t" style="left:669px;width:131px;top:238.74px;height:14px;line-height:14px;font-size:9.4px;text-align:right;padding-right:5px;"><span style="display:inline-block;transform:scale(0.955,1.08);transform-origin:right 10.26px">1.0000</span></div>
<div class="t" style="left:740px;width:131px;top:238.74px;height:14px;line-height:14px;font-size:9.4px;text-align:right;padding-right:5px;"><span style="display:inline-block;transform:scale(0.955,1.08);transform-origin:right 10.26px">1.0000</span></div>
<div class="t" style="left:811px;width:131px;top:238.74px;height:14px;line-height:14px;font-size:9.4px;text-align:right;padding-right:5px;"><span style="display:inline-block;transform:scale(0.955,1.08);transform-origin:right 10.26px">1.0000</span></div>
<div class="t" style="left:882px;width:131px;top:238.74px;height:14px;line-height:14px;font-size:9.4px;text-align:right;padding-right:5px;"><span style="display:inline-block;transform:scale(0.955,1.08);transform-origin:right 10.26px">1.0000</span></div>
<div class="t" style="left:993px;width:117px;top:238.74px;height:14px;line-height:14px;font-size:9.4px;text-align:right;padding-right:3px;"><span style="display:inline-block;transform:scale(0.955,1.08);transform-origin:right 10.26px">0.0833</span></div>
<div class="t" style="left:1050px;width:117px;top:238.74px;height:14px;line-height:14px;font-size:9.4px;text-align:right;padding-right:3px;"><span style="display:inline-block;transform:scale(0.955,1.08);transform-origin:right 10.26px">0.0833</span></div>
<div class="t" style="left:1107px;width:117px;top:238.74px;height:14px;line-height:14px;font-size:9.4px;text-align:right;padding-right:3px;"><span style="display:inline-block;transform:scale(0.955,1.08);transform-origin:right 10.26px">0.0833</span></div>
<div class="t" style="left:1164px;width:117px;top:238.74px;height:14px;line-height:14px;font-size:9.4px;text-align:right;padding-right:3px;"><span style="display:inline-block;transform:scale(0.955,1.08);transform-origin:right 10.26px">0.0833</span></div>
<div class="t" style="left:1221px;width:117px;top:238.74px;height:14px;line-height:14px;font-size:9.4px;text-align:right;padding-right:3px;"><span style="display:inline-block;transform:scale(0.955,1.08);transform-origin:right 10.26px">0.0833</span></div>
<div class="t" style="left:1278px;width:117px;top:238.74px;height:14px;line-height:14px;font-size:9.4px;text-align:right;padding-right:3px;"><span style="display:inline-block;transform:scale(0.955,1.08);transform-origin:right 10.26px">0.0833</span></div>
<div class="t" style="left:1335px;width:117px;top:238.74px;height:14px;line-height:14px;font-size:9.4px;text-align:right;padding-right:3px;"><span style="display:inline-block;transform:scale(0.955,1.08);transform-origin:right 10.26px">0.0833</span></div>
<div class="t" style="left:84px;width:336px;top:252.74px;height:14px;line-height:14px;font-size:9.4px;"><span style="display:inline-block;transform:scale(0.955,1.08);transform-origin:left 10.26px">Number of days</span></div>
<div class="t" style="left:242px;width:57px;top:252.74px;height:14px;line-height:14px;font-size:9.4px;color:#00902e;text-align:center;"><span style="display:inline-block;transform:scale(0.955,1.08);transform-origin:center 10.26px">30</span></div>
<svg style="left:369px;top:253px" width="12" height="11" viewBox="0 0 12 11"><path d="M0.9 6.1 L2.3 4.6 L5.0 6.8 L9.3 1.0 Q10.2 0.3 11.0 1.5 L5.5 9.7 Q5.0 10.2 4.5 9.7 Z" fill="#1f9d4e"/></svg>
<div class="t" style="left:393px;width:34px;top:252.74px;height:14px;line-height:14px;font-size:9.4px;text-align:center;"><span style="display:inline-block;transform:scale(0.955,1.08);transform-origin:center 10.26px">days</span></div>
<div class="t" style="left:376px;width:131px;top:252.74px;height:14px;line-height:14px;font-size:9.4px;text-align:right;padding-right:2px;"><span style="display:inline-block;transform:scale(0.955,1.08);transform-origin:right 10.26px">2 520</span></div>
<div class="t" style="left:456px;width:131px;top:252.74px;height:14px;line-height:14px;font-size:9.4px;text-align:right;padding-right:2px;"><span style="display:inline-block;transform:scale(0.955,1.08);transform-origin:right 10.26px">360</span></div>
<div class="t" style="left:527px;width:131px;top:252.74px;height:14px;line-height:14px;font-size:9.4px;text-align:right;padding-right:2px;"><span style="display:inline-block;transform:scale(0.955,1.08);transform-origin:right 10.26px">360</span></div>
<div class="t" style="left:598px;width:131px;top:252.74px;height:14px;line-height:14px;font-size:9.4px;text-align:right;padding-right:2px;"><span style="display:inline-block;transform:scale(0.955,1.08);transform-origin:right 10.26px">360</span></div>
<div class="t" style="left:669px;width:131px;top:252.74px;height:14px;line-height:14px;font-size:9.4px;text-align:right;padding-right:2px;"><span style="display:inline-block;transform:scale(0.955,1.08);transform-origin:right 10.26px">360</span></div>
<div class="t" style="left:740px;width:131px;top:252.74px;height:14px;line-height:14px;font-size:9.4px;text-align:right;padding-right:2px;"><span style="display:inline-block;transform:scale(0.955,1.08);transform-origin:right 10.26px">360</span></div>
<div class="t" style="left:811px;width:131px;top:252.74px;height:14px;line-height:14px;font-size:9.4px;text-align:right;padding-right:2px;"><span style="display:inline-block;transform:scale(0.955,1.08);transform-origin:right 10.26px">360</span></div>
<div class="t" style="left:882px;width:131px;top:252.74px;height:14px;line-height:14px;font-size:9.4px;text-align:right;padding-right:2px;"><span style="display:inline-block;transform:scale(0.955,1.08);transform-origin:right 10.26px">360</span></div>
<div class="t" style="left:993px;width:117px;top:252.74px;height:14px;line-height:14px;font-size:9.4px;text-align:right;padding-right:3px;"><span style="display:inline-block;transform:scale(0.955,1.08);transform-origin:right 10.26px">30</span></div>
<div class="t" style="left:1050px;width:117px;top:252.74px;height:14px;line-height:14px;font-size:9.4px;text-align:right;padding-right:3px;"><span style="display:inline-block;transform:scale(0.955,1.08);transform-origin:right 10.26px">30</span></div>
<div class="t" style="left:1107px;width:117px;top:252.74px;height:14px;line-height:14px;font-size:9.4px;text-align:right;padding-right:3px;"><span style="display:inline-block;transform:scale(0.955,1.08);transform-origin:right 10.26px">30</span></div>
<div class="t" style="left:1164px;width:117px;top:252.74px;height:14px;line-height:14px;font-size:9.4px;text-align:right;padding-right:3px;"><span style="display:inline-block;transform:scale(0.955,1.08);transform-origin:right 10.26px">30</span></div>
<div class="t" style="left:1221px;width:117px;top:252.74px;height:14px;line-height:14px;font-size:9.4px;text-align:right;padding-right:3px;"><span style="display:inline-block;transform:scale(0.955,1.08);transform-origin:right 10.26px">30</span></div>
<div class="t" style="left:1278px;width:117px;top:252.74px;height:14px;line-height:14px;font-size:9.4px;text-align:right;padding-right:3px;"><span style="display:inline-block;transform:scale(0.955,1.08);transform-origin:right 10.26px">30</span></div>
<div class="t" style="left:1335px;width:117px;top:252.74px;height:14px;line-height:14px;font-size:9.4px;text-align:right;padding-right:3px;"><span style="display:inline-block;transform:scale(0.955,1.08);transform-origin:right 10.26px">30</span></div>
<div class="t" style="left:76px;width:344px;top:308.74px;height:14px;line-height:14px;font-size:9.4px;font-weight:700;"><span style="display:inline-block;transform:scale(0.9,1.08);transform-origin:left 10.26px">Sales revenues</span></div>
<svg style="left:369px;top:309px" width="12" height="11" viewBox="0 0 12 11"><path d="M0.9 6.1 L2.3 4.6 L5.0 6.8 L9.3 1.0 Q10.2 0.3 11.0 1.5 L5.5 9.7 Q5.0 10.2 4.5 9.7 Z" fill="#1f9d4e"/></svg>
<div class="t" style="left:393px;width:34px;top:307.94px;height:14px;line-height:14px;font-size:9.4px;font-weight:700;text-align:center;"><span style="display:inline-block;transform:scale(0.9,1.08);transform-origin:center 10.26px">USD</span></div>
<div class="t" style="left:376px;width:131px;top:308.74px;height:14px;line-height:14px;font-size:9.4px;font-weight:700;text-align:right;padding-right:5px;"><span style="display:inline-block;transform:scale(0.9,1.08);transform-origin:right 10.26px">9 713 042</span></div>
<div class="t" style="left:456px;width:131px;top:308.74px;height:14px;line-height:14px;font-size:9.4px;font-weight:700;text-align:right;padding-right:5px;"><span style="display:inline-block;transform:scale(0.9,1.08);transform-origin:right 10.26px">295 260</span></div>
<div class="t" style="left:527px;width:131px;top:308.74px;height:14px;line-height:14px;font-size:9.4px;font-weight:700;text-align:right;padding-right:5px;"><span style="display:inline-block;transform:scale(0.9,1.08);transform-origin:right 10.26px">1 048 870</span></div>
<div class="t" style="left:598px;width:131px;top:308.74px;height:14px;line-height:14px;font-size:9.4px;font-weight:700;text-align:right;padding-right:5px;"><span style="display:inline-block;transform:scale(0.9,1.08);transform-origin:right 10.26px">1 383 884</span></div>
<div class="t" style="left:669px;width:131px;top:308.74px;height:14px;line-height:14px;font-size:9.4px;font-weight:700;text-align:right;padding-right:5px;"><span style="display:inline-block;transform:scale(0.9,1.08);transform-origin:right 10.26px">1 586 872</span></div>
<div class="t" style="left:740px;width:131px;top:308.74px;height:14px;line-height:14px;font-size:9.4px;font-weight:700;text-align:right;padding-right:5px;"><span style="display:inline-block;transform:scale(0.9,1.08);transform-origin:right 10.26px">1 681 315</span></div>
<div class="t" style="left:811px;width:131px;top:308.74px;height:14px;line-height:14px;font-size:9.4px;font-weight:700;text-align:right;padding-right:5px;"><span style="display:inline-block;transform:scale(0.9,1.08);transform-origin:right 10.26px">1 817 733</span></div>
<div class="t" style="left:882px;width:131px;top:308.74px;height:14px;line-height:14px;font-size:9.4px;font-weight:700;text-align:right;padding-right:5px;"><span style="display:inline-block;transform:scale(0.9,1.08);transform-origin:right 10.26px">1 899 107</span></div>
<div class="t" style="left:993px;width:117px;top:308.74px;height:14px;line-height:14px;font-size:9.4px;font-weight:700;text-align:right;padding-right:5px;"><span style="display:inline-block;transform:scale(0.9,1.08);transform-origin:right 10.26px">-</span></div>
<div class="t" style="left:1050px;width:117px;top:308.74px;height:14px;line-height:14px;font-size:9.4px;font-weight:700;text-align:right;padding-right:5px;"><span style="display:inline-block;transform:scale(0.9,1.08);transform-origin:right 10.26px">-</span></div>
<div class="t" style="left:1107px;width:117px;top:308.74px;height:14px;line-height:14px;font-size:9.4px;font-weight:700;text-align:right;padding-right:5px;"><span style="display:inline-block;transform:scale(0.9,1.08);transform-origin:right 10.26px">-</span></div>
<div class="t" style="left:1164px;width:117px;top:308.74px;height:14px;line-height:14px;font-size:9.4px;font-weight:700;text-align:right;padding-right:5px;"><span style="display:inline-block;transform:scale(0.9,1.08);transform-origin:right 10.26px">6 810</span></div>
<div class="t" style="left:1221px;width:117px;top:308.74px;height:14px;line-height:14px;font-size:9.4px;font-weight:700;text-align:right;padding-right:5px;"><span style="display:inline-block;transform:scale(0.9,1.08);transform-origin:right 10.26px">13 242</span></div>
<div class="t" style="left:1278px;width:117px;top:308.74px;height:14px;line-height:14px;font-size:9.4px;font-weight:700;text-align:right;padding-right:5px;"><span style="display:inline-block;transform:scale(0.9,1.08);transform-origin:right 10.26px">19 823</span></div>
<div class="t" style="left:1335px;width:117px;top:308.74px;height:14px;line-height:14px;font-size:9.4px;font-weight:700;text-align:right;padding-right:5px;"><span style="display:inline-block;transform:scale(0.9,1.08);transform-origin:right 10.26px">26 073</span></div>
<div class="t" style="left:84px;width:336px;top:322.74px;height:14px;line-height:14px;font-size:9.4px;"><span style="display:inline-block;transform:scale(0.955,1.08);transform-origin:left 10.26px">Membership revenues</span></div>
<svg style="left:369px;top:323px" width="12" height="11" viewBox="0 0 12 11"><path d="M0.9 6.1 L2.3 4.6 L5.0 6.8 L9.3 1.0 Q10.2 0.3 11.0 1.5 L5.5 9.7 Q5.0 10.2 4.5 9.7 Z" fill="#1f9d4e"/></svg>
<div class="t" style="left:393px;width:34px;top:321.94px;height:14px;line-height:14px;font-size:9.4px;text-align:center;"><span style="display:inline-block;transform:scale(0.955,1.08);transform-origin:center 10.26px">USD</span></div>
<div class="t" style="left:376px;width:131px;top:322.74px;height:14px;line-height:14px;font-size:9.4px;text-align:right;padding-right:5px;"><span style="display:inline-block;transform:scale(0.955,1.08);transform-origin:right 10.26px">4 928 121</span></div>
<div class="t" style="left:456px;width:131px;top:322.74px;height:14px;line-height:14px;font-size:9.4px;text-align:right;padding-right:5px;"><span style="display:inline-block;transform:scale(0.955,1.08);transform-origin:right 10.26px">175 622</span></div>
<div class="t" style="left:527px;width:131px;top:322.74px;height:14px;line-height:14px;font-size:9.4px;text-align:right;padding-right:5px;"><span style="display:inline-block;transform:scale(0.955,1.08);transform-origin:right 10.26px">604 557</span></div>
<div class="t" style="left:598px;width:131px;top:322.74px;height:14px;line-height:14px;font-size:9.4px;text-align:right;padding-right:5px;"><span style="display:inline-block;transform:scale(0.955,1.08);transform-origin:right 10.26px">757 012</span></div>
<div class="t" style="left:669px;width:131px;top:322.74px;height:14px;line-height:14px;font-size:9.4px;text-align:right;padding-right:5px;"><span style="display:inline-block;transform:scale(0.955,1.08);transform-origin:right 10.26px">806 661</span></div>
<div class="t" style="left:740px;width:131px;top:322.74px;height:14px;line-height:14px;font-size:9.4px;text-align:right;padding-right:5px;"><span style="display:inline-block;transform:scale(0.955,1.08);transform-origin:right 10.26px">838 043</span></div>
<div class="t" style="left:811px;width:131px;top:322.74px;height:14px;line-height:14px;font-size:9.4px;text-align:right;padding-right:5px;"><span style="display:inline-block;transform:scale(0.955,1.08);transform-origin:right 10.26px">863 107</span></div>
<div class="t" style="left:882px;width:131px;top:322.74px;height:14px;line-height:14px;font-size:9.4px;text-align:right;padding-right:5px;"><span style="display:inline-block;transform:scale(0.955,1.08);transform-origin:right 10.26px">883 120</span></div>
<div class="t" style="left:993px;width:117px;top:322.74px;height:14px;line-height:14px;font-size:9.4px;color:#00902e;text-align:right;padding-right:5px;"><span style="display:inline-block;transform:scale(0.955,1.08);transform-origin:right 10.26px">-</span></div>
<div class="t" style="left:1050px;width:117px;top:322.74px;height:14px;line-height:14px;font-size:9.4px;color:#00902e;text-align:right;padding-right:5px;"><span style="display:inline-block;transform:scale(0.955,1.08);transform-origin:right 10.26px">-</span></div>
<div class="t" style="left:1107px;width:117px;top:322.74px;height:14px;line-height:14px;font-size:9.4px;color:#00902e;text-align:right;padding-right:5px;"><span style="display:inline-block;transform:scale(0.955,1.08);transform-origin:right 10.26px">-</span></div>
<div class="t" style="left:1164px;width:117px;top:322.74px;height:14px;line-height:14px;font-size:9.4px;color:#00902e;text-align:right;padding-right:5px;"><span style="display:inline-block;transform:scale(0.955,1.08);transform-origin:right 10.26px">4 272</span></div>
<div class="t" style="left:1221px;width:117px;top:322.74px;height:14px;line-height:14px;font-size:9.4px;color:#00902e;text-align:right;padding-right:5px;"><span style="display:inline-block;transform:scale(0.955,1.08);transform-origin:right 10.26px">8 069</span></div>
<div class="t" style="left:1278px;width:117px;top:322.74px;height:14px;line-height:14px;font-size:9.4px;color:#00902e;text-align:right;padding-right:5px;"><span style="display:inline-block;transform:scale(0.955,1.08);transform-origin:right 10.26px">12 106</span></div>
<div class="t" style="left:1335px;width:117px;top:322.74px;height:14px;line-height:14px;font-size:9.4px;color:#00902e;text-align:right;padding-right:5px;"><span style="display:inline-block;transform:scale(0.955,1.08);transform-origin:right 10.26px">15 620</span></div>
<div class="t" style="left:92px;width:328px;top:336.74px;height:14px;line-height:14px;font-size:9.4px;"><span style="display:inline-block;transform:scale(0.955,1.08);transform-origin:left 10.26px">less: renewal discounts</span></div>
<svg style="left:369px;top:337px" width="12" height="11" viewBox="0 0 12 11"><path d="M0.9 6.1 L2.3 4.6 L5.0 6.8 L9.3 1.0 Q10.2 0.3 11.0 1.5 L5.5 9.7 Q5.0 10.2 4.5 9.7 Z" fill="#1f9d4e"/></svg>
<div class="t" style="left:393px;width:34px;top:335.94px;height:14px;line-height:14px;font-size:9.4px;text-align:center;"><span style="display:inline-block;transform:scale(0.955,1.08);transform-origin:center 10.26px">USD</span></div>
<div class="t" style="left:376px;width:131px;top:336.74px;height:14px;line-height:14px;font-size:9.4px;text-align:right;padding-right:2px;"><span style="display:inline-block;transform:scale(0.955,1.08);transform-origin:right 10.26px">(339 816)</span></div>
<div class="t" style="left:456px;width:131px;top:336.74px;height:14px;line-height:14px;font-size:9.4px;text-align:right;padding-right:5px;"><span style="display:inline-block;transform:scale(0.955,1.08);transform-origin:right 10.26px">-</span></div>
<div class="t" style="left:527px;width:131px;top:336.74px;height:14px;line-height:14px;font-size:9.4px;text-align:right;padding-right:2px;"><span style="display:inline-block;transform:scale(0.955,1.08);transform-origin:right 10.26px">(31 116)</span></div>
<div class="t" style="left:598px;width:131px;top:336.74px;height:14px;line-height:14px;font-size:9.4px;text-align:right;padding-right:2px;"><span style="display:inline-block;transform:scale(0.955,1.08);transform-origin:right 10.26px">(52 068)</span></div>
<div class="t" style="left:669px;width:131px;top:336.74px;height:14px;line-height:14px;font-size:9.4px;text-align:right;padding-right:2px;"><span style="display:inline-block;transform:scale(0.955,1.08);transform-origin:right 10.26px">(59 498)</span></div>
<div class="t" style="left:740px;width:131px;top:336.74px;height:14px;line-height:14px;font-size:9.4px;text-align:right;padding-right:2px;"><span style="display:inline-block;transform:scale(0.955,1.08);transform-origin:right 10.26px">(62 853)</span></div>
<div class="t" style="left:811px;width:131px;top:336.74px;height:14px;line-height:14px;font-size:9.4px;text-align:right;padding-right:2px;"><span style="display:inline-block;transform:scale(0.955,1.08);transform-origin:right 10.26px">(64 733)</span></div>
<div class="t" style="left:882px;width:131px;top:336.74px;height:14px;line-height:14px;font-size:9.4px;text-align:right;padding-right:2px;"><span style="display:inline-block;transform:scale(0.955,1.08);transform-origin:right 10.26px">(69 548)</span></div>
<div class="t" style="left:993px;width:117px;top:336.74px;height:14px;line-height:14px;font-size:9.4px;color:#00902e;text-align:right;padding-right:5px;"><span style="display:inline-block;transform:scale(0.955,1.08);transform-origin:right 10.26px">-</span></div>
<div class="t" style="left:1050px;width:117px;top:336.74px;height:14px;line-height:14px;font-size:9.4px;color:#00902e;text-align:right;padding-right:5px;"><span style="display:inline-block;transform:scale(0.955,1.08);transform-origin:right 10.26px">-</span></div>
<div class="t" style="left:1107px;width:117px;top:336.74px;height:14px;line-height:14px;font-size:9.4px;color:#00902e;text-align:right;padding-right:5px;"><span style="display:inline-block;transform:scale(0.955,1.08);transform-origin:right 10.26px">-</span></div>
<div class="t" style="left:1164px;width:117px;top:336.74px;height:14px;line-height:14px;font-size:9.4px;color:#00902e;text-align:right;padding-right:5px;"><span style="display:inline-block;transform:scale(0.955,1.08);transform-origin:right 10.26px">-</span></div>
<div class="t" style="left:1221px;width:117px;top:336.74px;height:14px;line-height:14px;font-size:9.4px;color:#00902e;text-align:right;padding-right:5px;"><span style="display:inline-block;transform:scale(0.955,1.08);transform-origin:right 10.26px">-</span></div>
<div class="t" style="left:1278px;width:117px;top:336.74px;height:14px;line-height:14px;font-size:9.4px;color:#00902e;text-align:right;padding-right:5px;"><span style="display:inline-block;transform:scale(0.955,1.08);transform-origin:right 10.26px">-</span></div>
<div class="t" style="left:1335px;width:117px;top:336.74px;height:14px;line-height:14px;font-size:9.4px;color:#00902e;text-align:right;padding-right:5px;"><span style="display:inline-block;transform:scale(0.955,1.08);transform-origin:right 10.26px">-</span></div>
<div class="t" style="left:84px;width:336px;top:350.74px;height:14px;line-height:14px;font-size:9.4px;"><span style="display:inline-block;transform:scale(0.955,1.08);transform-origin:left 10.26px">Group trainings</span></div>
<svg style="left:369px;top:351px" width="12" height="11" viewBox="0 0 12 11"><path d="M0.9 6.1 L2.3 4.6 L5.0 6.8 L9.3 1.0 Q10.2 0.3 11.0 1.5 L5.5 9.7 Q5.0 10.2 4.5 9.7 Z" fill="#1f9d4e"/></svg>
<div class="t" style="left:393px;width:34px;top:349.94px;height:14px;line-height:14px;font-size:9.4px;text-align:center;"><span style="display:inline-block;transform:scale(0.955,1.08);transform-origin:center 10.26px">USD</span></div>
<div class="t" style="left:376px;width:131px;top:350.74px;height:14px;line-height:14px;font-size:9.4px;text-align:right;padding-right:5px;"><span style="display:inline-block;transform:scale(0.955,1.08);transform-origin:right 10.26px">421 177</span></div>
<div class="t" style="left:456px;width:131px;top:350.74px;height:14px;line-height:14px;font-size:9.4px;text-align:right;padding-right:5px;"><span style="display:inline-block;transform:scale(0.955,1.08);transform-origin:right 10.26px">10 815</span></div>
<div class="t" style="left:527px;width:131px;top:350.74px;height:14px;line-height:14px;font-size:9.4px;text-align:right;padding-right:5px;"><span style="display:inline-block;transform:scale(0.955,1.08);transform-origin:right 10.26px">45 651</span></div>
<div class="t" style="left:598px;width:131px;top:350.74px;height:14px;line-height:14px;font-size:9.4px;text-align:right;padding-right:5px;"><span style="display:inline-block;transform:scale(0.955,1.08);transform-origin:right 10.26px">60 260</span></div>
<div class="t" style="left:669px;width:131px;top:350.74px;height:14px;line-height:14px;font-size:9.4px;text-align:right;padding-right:5px;"><span style="display:inline-block;transform:scale(0.955,1.08);transform-origin:right 10.26px">71 723</span></div>
<div class="t" style="left:740px;width:131px;top:350.74px;height:14px;line-height:14px;font-size:9.4px;text-align:right;padding-right:5px;"><span style="display:inline-block;transform:scale(0.955,1.08);transform-origin:right 10.26px">77 160</span></div>
<div class="t" style="left:811px;width:131px;top:350.74px;height:14px;line-height:14px;font-size:9.4px;text-align:right;padding-right:5px;"><span style="display:inline-block;transform:scale(0.955,1.08);transform-origin:right 10.26px">86 916</span></div>
<div class="t" style="left:882px;width:131px;top:350.74px;height:14px;line-height:14px;font-size:9.4px;text-align:right;padding-right:5px;"><span style="display:inline-block;transform:scale(0.955,1.08);transform-origin:right 10.26px">68 653</span></div>
<div class="t" style="left:993px;width:117px;top:350.74px;height:14px;line-height:14px;font-size:9.4px;color:#00902e;text-align:right;padding-right:5px;"><span style="display:inline-block;transform:scale(0.955,1.08);transform-origin:right 10.26px">-</span></div>
<div class="t" style="left:1050px;width:117px;top:350.74px;height:14px;line-height:14px;font-size:9.4px;color:#00902e;text-align:right;padding-right:5px;"><span style="display:inline-block;transform:scale(0.955,1.08);transform-origin:right 10.26px">-</span></div>
<div class="t" style="left:1107px;width:117px;top:350.74px;height:14px;line-height:14px;font-size:9.4px;color:#00902e;text-align:right;padding-right:5px;"><span style="display:inline-block;transform:scale(0.955,1.08);transform-origin:right 10.26px">-</span></div>
<div class="t" style="left:1164px;width:117px;top:350.74px;height:14px;line-height:14px;font-size:9.4px;color:#00902e;text-align:right;padding-right:5px;"><span style="display:inline-block;transform:scale(0.955,1.08);transform-origin:right 10.26px">229</span></div>
<div class="t" style="left:1221px;width:117px;top:350.74px;height:14px;line-height:14px;font-size:9.4px;color:#00902e;text-align:right;padding-right:5px;"><span style="display:inline-block;transform:scale(0.955,1.08);transform-origin:right 10.26px">468</span></div>
<div class="t" style="left:1278px;width:117px;top:350.74px;height:14px;line-height:14px;font-size:9.4px;color:#00902e;text-align:right;padding-right:5px;"><span style="display:inline-block;transform:scale(0.955,1.08);transform-origin:right 10.26px">698</span></div>
<div class="t" style="left:1335px;width:117px;top:350.74px;height:14px;line-height:14px;font-size:9.4px;color:#00902e;text-align:right;padding-right:5px;"><span style="display:inline-block;transform:scale(0.955,1.08);transform-origin:right 10.26px">940</span></div>
<div class="t" style="left:84px;width:336px;top:364.74px;height:14px;line-height:14px;font-size:9.4px;"><span style="display:inline-block;transform:scale(0.955,1.08);transform-origin:left 10.26px">Individual trainings</span></div>
<svg style="left:369px;top:365px" width="12" height="11" viewBox="0 0 12 11"><path d="M0.9 6.1 L2.3 4.6 L5.0 6.8 L9.3 1.0 Q10.2 0.3 11.0 1.5 L5.5 9.7 Q5.0 10.2 4.5 9.7 Z" fill="#1f9d4e"/></svg>
<div class="t" style="left:393px;width:34px;top:363.94px;height:14px;line-height:14px;font-size:9.4px;text-align:center;"><span style="display:inline-block;transform:scale(0.955,1.08);transform-origin:center 10.26px">USD</span></div>
<div class="t" style="left:376px;width:131px;top:364.74px;height:14px;line-height:14px;font-size:9.4px;text-align:right;padding-right:5px;"><span style="display:inline-block;transform:scale(0.955,1.08);transform-origin:right 10.26px">1 436 625</span></div>
<div class="t" style="left:456px;width:131px;top:364.74px;height:14px;line-height:14px;font-size:9.4px;text-align:right;padding-right:5px;"><span style="display:inline-block;transform:scale(0.955,1.08);transform-origin:right 10.26px">37 681</span></div>
<div class="t" style="left:527px;width:131px;top:364.74px;height:14px;line-height:14px;font-size:9.4px;text-align:right;padding-right:5px;"><span style="display:inline-block;transform:scale(0.955,1.08);transform-origin:right 10.26px">140 337</span></div>
<div class="t" style="left:598px;width:131px;top:364.74px;height:14px;line-height:14px;font-size:9.4px;text-align:right;padding-right:5px;"><span style="display:inline-block;transform:scale(0.955,1.08);transform-origin:right 10.26px">179 952</span></div>
<div class="t" style="left:669px;width:131px;top:364.74px;height:14px;line-height:14px;font-size:9.4px;text-align:right;padding-right:5px;"><span style="display:inline-block;transform:scale(0.955,1.08);transform-origin:right 10.26px">228 406</span></div>
<div class="t" style="left:740px;width:131px;top:364.74px;height:14px;line-height:14px;font-size:9.4px;text-align:right;padding-right:5px;"><span style="display:inline-block;transform:scale(0.955,1.08);transform-origin:right 10.26px">250 117</span></div>
<div class="t" style="left:811px;width:131px;top:364.74px;height:14px;line-height:14px;font-size:9.4px;text-align:right;padding-right:5px;"><span style="display:inline-block;transform:scale(0.955,1.08);transform-origin:right 10.26px">290 847</span></div>
<div class="t" style="left:882px;width:131px;top:364.74px;height:14px;line-height:14px;font-size:9.4px;text-align:right;padding-right:5px;"><span style="display:inline-block;transform:scale(0.955,1.08);transform-origin:right 10.26px">309 286</span></div>
<div class="t" style="left:993px;width:117px;top:364.74px;height:14px;line-height:14px;font-size:9.4px;color:#00902e;text-align:right;padding-right:5px;"><span style="display:inline-block;transform:scale(0.955,1.08);transform-origin:right 10.26px">-</span></div>
<div class="t" style="left:1050px;width:117px;top:364.74px;height:14px;line-height:14px;font-size:9.4px;color:#00902e;text-align:right;padding-right:5px;"><span style="display:inline-block;transform:scale(0.955,1.08);transform-origin:right 10.26px">-</span></div>
<div class="t" style="left:1107px;width:117px;top:364.74px;height:14px;line-height:14px;font-size:9.4px;color:#00902e;text-align:right;padding-right:5px;"><span style="display:inline-block;transform:scale(0.955,1.08);transform-origin:right 10.26px">-</span></div>
<div class="t" style="left:1164px;width:117px;top:364.74px;height:14px;line-height:14px;font-size:9.4px;color:#00902e;text-align:right;padding-right:5px;"><span style="display:inline-block;transform:scale(0.955,1.08);transform-origin:right 10.26px">799</span></div>
<div class="t" style="left:1221px;width:117px;top:364.74px;height:14px;line-height:14px;font-size:9.4px;color:#00902e;text-align:right;padding-right:5px;"><span style="display:inline-block;transform:scale(0.955,1.08);transform-origin:right 10.26px">1 629</span></div>
<div class="t" style="left:1278px;width:117px;top:364.74px;height:14px;line-height:14px;font-size:9.4px;color:#00902e;text-align:right;padding-right:5px;"><span style="display:inline-block;transform:scale(0.955,1.08);transform-origin:right 10.26px">2 431</span></div>
<div class="t" style="left:1335px;width:117px;top:364.74px;height:14px;line-height:14px;font-size:9.4px;color:#00902e;text-align:right;padding-right:5px;"><span style="display:inline-block;transform:scale(0.955,1.08);transform-origin:right 10.26px">3 280</span></div>
<div class="t" style="left:84px;width:336px;top:378.74px;height:14px;line-height:14px;font-size:9.4px;"><span style="display:inline-block;transform:scale(0.955,1.08);transform-origin:left 10.26px">Other service revenues</span></div>
<svg style="left:369px;top:379px" width="12" height="11" viewBox="0 0 12 11"><path d="M0.9 6.1 L2.3 4.6 L5.0 6.8 L9.3 1.0 Q10.2 0.3 11.0 1.5 L5.5 9.7 Q5.0 10.2 4.5 9.7 Z" fill="#1f9d4e"/></svg>
<div class="t" style="left:393px;width:34px;top:377.94px;height:14px;line-height:14px;font-size:9.4px;text-align:center;"><span style="display:inline-block;transform:scale(0.955,1.08);transform-origin:center 10.26px">USD</span></div>
<div class="t" style="left:376px;width:131px;top:378.74px;height:14px;line-height:14px;font-size:9.4px;text-align:right;padding-right:5px;"><span style="display:inline-block;transform:scale(0.955,1.08);transform-origin:right 10.26px">1 460 405</span></div>
<div class="t" style="left:456px;width:131px;top:378.74px;height:14px;line-height:14px;font-size:9.4px;text-align:right;padding-right:5px;"><span style="display:inline-block;transform:scale(0.955,1.08);transform-origin:right 10.26px">30 063</span></div>
<div class="t" style="left:527px;width:131px;top:378.74px;height:14px;line-height:14px;font-size:9.4px;text-align:right;padding-right:5px;"><span style="display:inline-block;transform:scale(0.955,1.08);transform-origin:right 10.26px">111 966</span></div>
<div class="t" style="left:598px;width:131px;top:378.74px;height:14px;line-height:14px;font-size:9.4px;text-align:right;padding-right:5px;"><span style="display:inline-block;transform:scale(0.955,1.08);transform-origin:right 10.26px">203 305</span></div>
<div class="t" style="left:669px;width:131px;top:378.74px;height:14px;line-height:14px;font-size:9.4px;text-align:right;padding-right:5px;"><span style="display:inline-block;transform:scale(0.955,1.08);transform-origin:right 10.26px">238 963</span></div>
<div class="t" style="left:740px;width:131px;top:378.74px;height:14px;line-height:14px;font-size:9.4px;text-align:right;padding-right:5px;"><span style="display:inline-block;transform:scale(0.955,1.08);transform-origin:right 10.26px">249 136</span></div>
<div class="t" style="left:811px;width:131px;top:378.74px;height:14px;line-height:14px;font-size:9.4px;text-align:right;padding-right:5px;"><span style="display:inline-block;transform:scale(0.955,1.08);transform-origin:right 10.26px">302 050</span></div>
<div class="t" style="left:882px;width:131px;top:378.74px;height:14px;line-height:14px;font-size:9.4px;text-align:right;padding-right:5px;"><span style="display:inline-block;transform:scale(0.955,1.08);transform-origin:right 10.26px">324 923</span></div>
<div class="t" style="left:993px;width:117px;top:378.74px;height:14px;line-height:14px;font-size:9.4px;color:#00902e;text-align:right;padding-right:5px;"><span style="display:inline-block;transform:scale(0.955,1.08);transform-origin:right 10.26px">-</span></div>
<div class="t" style="left:1050px;width:117px;top:378.74px;height:14px;line-height:14px;font-size:9.4px;color:#00902e;text-align:right;padding-right:5px;"><span style="display:inline-block;transform:scale(0.955,1.08);transform-origin:right 10.26px">-</span></div>
<div class="t" style="left:1107px;width:117px;top:378.74px;height:14px;line-height:14px;font-size:9.4px;color:#00902e;text-align:right;padding-right:5px;"><span style="display:inline-block;transform:scale(0.955,1.08);transform-origin:right 10.26px">-</span></div>
<div class="t" style="left:1164px;width:117px;top:378.74px;height:14px;line-height:14px;font-size:9.4px;color:#00902e;text-align:right;padding-right:5px;"><span style="display:inline-block;transform:scale(0.955,1.08);transform-origin:right 10.26px">638</span></div>
<div class="t" style="left:1221px;width:117px;top:378.74px;height:14px;line-height:14px;font-size:9.4px;color:#00902e;text-align:right;padding-right:5px;"><span style="display:inline-block;transform:scale(0.955,1.08);transform-origin:right 10.26px">1 300</span></div>
<div class="t" style="left:1278px;width:117px;top:378.74px;height:14px;line-height:14px;font-size:9.4px;color:#00902e;text-align:right;padding-right:5px;"><span style="display:inline-block;transform:scale(0.955,1.08);transform-origin:right 10.26px">1 939</span></div>
<div class="t" style="left:1335px;width:117px;top:378.74px;height:14px;line-height:14px;font-size:9.4px;color:#00902e;text-align:right;padding-right:5px;"><span style="display:inline-block;transform:scale(0.955,1.08);transform-origin:right 10.26px">2 620</span></div>
<div class="t" style="left:84px;width:336px;top:392.74px;height:14px;line-height:14px;font-size:9.4px;"><span style="display:inline-block;transform:scale(0.955,1.08);transform-origin:left 10.26px">Retail revenues</span></div>
<svg style="left:369px;top:393px" width="12" height="11" viewBox="0 0 12 11"><path d="M0.9 6.1 L2.3 4.6 L5.0 6.8 L9.3 1.0 Q10.2 0.3 11.0 1.5 L5.5 9.7 Q5.0 10.2 4.5 9.7 Z" fill="#1f9d4e"/></svg>
<div class="t" style="left:393px;width:34px;top:391.94px;height:14px;line-height:14px;font-size:9.4px;text-align:center;"><span style="display:inline-block;transform:scale(0.955,1.08);transform-origin:center 10.26px">USD</span></div>
<div class="t" style="left:376px;width:131px;top:392.74px;height:14px;line-height:14px;font-size:9.4px;text-align:right;padding-right:5px;"><span style="display:inline-block;transform:scale(0.955,1.08);transform-origin:right 10.26px">983 474</span></div>
<div class="t" style="left:456px;width:131px;top:392.74px;height:14px;line-height:14px;font-size:9.4px;text-align:right;padding-right:5px;"><span style="display:inline-block;transform:scale(0.955,1.08);transform-origin:right 10.26px">22 364</span></div>
<div class="t" style="left:527px;width:131px;top:392.74px;height:14px;line-height:14px;font-size:9.4px;text-align:right;padding-right:5px;"><span style="display:inline-block;transform:scale(0.955,1.08);transform-origin:right 10.26px">96 617</span></div>
<div class="t" style="left:598px;width:131px;top:392.74px;height:14px;line-height:14px;font-size:9.4px;text-align:right;padding-right:5px;"><span style="display:inline-block;transform:scale(0.955,1.08);transform-origin:right 10.26px">128 165</span></div>
<div class="t" style="left:669px;width:131px;top:392.74px;height:14px;line-height:14px;font-size:9.4px;text-align:right;padding-right:5px;"><span style="display:inline-block;transform:scale(0.955,1.08);transform-origin:right 10.26px">163 656</span></div>
<div class="t" style="left:740px;width:131px;top:392.74px;height:14px;line-height:14px;font-size:9.4px;text-align:right;padding-right:5px;"><span style="display:inline-block;transform:scale(0.955,1.08);transform-origin:right 10.26px">179 495</span></div>
<div class="t" style="left:811px;width:131px;top:392.74px;height:14px;line-height:14px;font-size:9.4px;text-align:right;padding-right:5px;"><span style="display:inline-block;transform:scale(0.955,1.08);transform-origin:right 10.26px">184 849</span></div>
<div class="t" style="left:882px;width:131px;top:392.74px;height:14px;line-height:14px;font-size:9.4px;text-align:right;padding-right:5px;"><span style="display:inline-block;transform:scale(0.955,1.08);transform-origin:right 10.26px">208 328</span></div>
<div class="t" style="left:993px;width:117px;top:392.74px;height:14px;line-height:14px;font-size:9.4px;color:#00902e;text-align:right;padding-right:5px;"><span style="display:inline-block;transform:scale(0.955,1.08);transform-origin:right 10.26px">-</span></div>
<div class="t" style="left:1050px;width:117px;top:392.74px;height:14px;line-height:14px;font-size:9.4px;color:#00902e;text-align:right;padding-right:5px;"><span style="display:inline-block;transform:scale(0.955,1.08);transform-origin:right 10.26px">-</span></div>
<div class="t" style="left:1107px;width:117px;top:392.74px;height:14px;line-height:14px;font-size:9.4px;color:#00902e;text-align:right;padding-right:5px;"><span style="display:inline-block;transform:scale(0.955,1.08);transform-origin:right 10.26px">-</span></div>
<div class="t" style="left:1164px;width:117px;top:392.74px;height:14px;line-height:14px;font-size:9.4px;color:#00902e;text-align:right;padding-right:5px;"><span style="display:inline-block;transform:scale(0.955,1.08);transform-origin:right 10.26px">474</span></div>
<div class="t" style="left:1221px;width:117px;top:392.74px;height:14px;line-height:14px;font-size:9.4px;color:#00902e;text-align:right;padding-right:5px;"><span style="display:inline-block;transform:scale(0.955,1.08);transform-origin:right 10.26px">967</span></div>
<div class="t" style="left:1278px;width:117px;top:392.74px;height:14px;line-height:14px;font-size:9.4px;color:#00902e;text-align:right;padding-right:5px;"><span style="display:inline-block;transform:scale(0.955,1.08);transform-origin:right 10.26px">1 443</span></div>
<div class="t" style="left:1335px;width:117px;top:392.74px;height:14px;line-height:14px;font-size:9.4px;color:#00902e;text-align:right;padding-right:5px;"><span style="display:inline-block;transform:scale(0.955,1.08);transform-origin:right 10.26px">1 950</span></div>
<div class="t" style="left:84px;width:336px;top:406.74px;height:14px;line-height:14px;font-size:9.4px;"><span style="display:inline-block;transform:scale(0.955,1.08);transform-origin:left 10.26px">Bar &amp; café revenues</span></div>
<svg style="left:369px;top:407px" width="12" height="11" viewBox="0 0 12 11"><path d="M0.9 6.1 L2.3 4.6 L5.0 6.8 L9.3 1.0 Q10.2 0.3 11.0 1.5 L5.5 9.7 Q5.0 10.2 4.5 9.7 Z" fill="#1f9d4e"/></svg>
<div class="t" style="left:393px;width:34px;top:405.94px;height:14px;line-height:14px;font-size:9.4px;text-align:center;"><span style="display:inline-block;transform:scale(0.955,1.08);transform-origin:center 10.26px">USD</span></div>
<div class="t" style="left:376px;width:131px;top:406.74px;height:14px;line-height:14px;font-size:9.4px;text-align:right;padding-right:5px;"><span style="display:inline-block;transform:scale(0.955,1.08);transform-origin:right 10.26px">823 055</span></div>
<div class="t" style="left:456px;width:131px;top:406.74px;height:14px;line-height:14px;font-size:9.4px;text-align:right;padding-right:5px;"><span style="display:inline-block;transform:scale(0.955,1.08);transform-origin:right 10.26px">18 716</span></div>
<div class="t" style="left:527px;width:131px;top:406.74px;height:14px;line-height:14px;font-size:9.4px;text-align:right;padding-right:5px;"><span style="display:inline-block;transform:scale(0.955,1.08);transform-origin:right 10.26px">80 858</span></div>
<div class="t" style="left:598px;width:131px;top:406.74px;height:14px;line-height:14px;font-size:9.4px;text-align:right;padding-right:5px;"><span style="display:inline-block;transform:scale(0.955,1.08);transform-origin:right 10.26px">107 259</span></div>
<div class="t" style="left:669px;width:131px;top:406.74px;height:14px;line-height:14px;font-size:9.4px;text-align:right;padding-right:5px;"><span style="display:inline-block;transform:scale(0.955,1.08);transform-origin:right 10.26px">136 961</span></div>
<div class="t" style="left:740px;width:131px;top:406.74px;height:14px;line-height:14px;font-size:9.4px;text-align:right;padding-right:5px;"><span style="display:inline-block;transform:scale(0.955,1.08);transform-origin:right 10.26px">150 217</span></div>
<div class="t" style="left:811px;width:131px;top:406.74px;height:14px;line-height:14px;font-size:9.4px;text-align:right;padding-right:5px;"><span style="display:inline-block;transform:scale(0.955,1.08);transform-origin:right 10.26px">154 697</span></div>
<div class="t" style="left:882px;width:131px;top:406.74px;height:14px;line-height:14px;font-size:9.4px;text-align:right;padding-right:5px;"><span style="display:inline-block;transform:scale(0.955,1.08);transform-origin:right 10.26px">174 347</span></div>
<div class="t" style="left:993px;width:117px;top:406.74px;height:14px;line-height:14px;font-size:9.4px;color:#00902e;text-align:right;padding-right:5px;"><span style="display:inline-block;transform:scale(0.955,1.08);transform-origin:right 10.26px">-</span></div>
<div class="t" style="left:1050px;width:117px;top:406.74px;height:14px;line-height:14px;font-size:9.4px;color:#00902e;text-align:right;padding-right:5px;"><span style="display:inline-block;transform:scale(0.955,1.08);transform-origin:right 10.26px">-</span></div>
<div class="t" style="left:1107px;width:117px;top:406.74px;height:14px;line-height:14px;font-size:9.4px;color:#00902e;text-align:right;padding-right:5px;"><span style="display:inline-block;transform:scale(0.955,1.08);transform-origin:right 10.26px">-</span></div>
<div class="t" style="left:1164px;width:117px;top:406.74px;height:14px;line-height:14px;font-size:9.4px;color:#00902e;text-align:right;padding-right:5px;"><span style="display:inline-block;transform:scale(0.955,1.08);transform-origin:right 10.26px">397</span></div>
<div class="t" style="left:1221px;width:117px;top:406.74px;height:14px;line-height:14px;font-size:9.4px;color:#00902e;text-align:right;padding-right:5px;"><span style="display:inline-block;transform:scale(0.955,1.08);transform-origin:right 10.26px">809</span></div>
<div class="t" style="left:1278px;width:117px;top:406.74px;height:14px;line-height:14px;font-size:9.4px;color:#00902e;text-align:right;padding-right:5px;"><span style="display:inline-block;transform:scale(0.955,1.08);transform-origin:right 10.26px">1 207</span></div>
<div class="t" style="left:1335px;width:117px;top:406.74px;height:14px;line-height:14px;font-size:9.4px;color:#00902e;text-align:right;padding-right:5px;"><span style="display:inline-block;transform:scale(0.955,1.08);transform-origin:right 10.26px">1 630</span></div>
<div class="t" style="left:76px;width:344px;top:434.74px;height:14px;line-height:14px;font-size:9.4px;font-weight:700;"><span style="display:inline-block;transform:scale(0.9,1.08);transform-origin:left 10.26px">Cost of Goods Sold</span></div>
<svg style="left:369px;top:435px" width="12" height="11" viewBox="0 0 12 11"><path d="M0.9 6.1 L2.3 4.6 L5.0 6.8 L9.3 1.0 Q10.2 0.3 11.0 1.5 L5.5 9.7 Q5.0 10.2 4.5 9.7 Z" fill="#1f9d4e"/></svg>
<div class="t" style="left:393px;width:34px;top:433.94px;height:14px;line-height:14px;font-size:9.4px;font-weight:700;text-align:center;"><span style="display:inline-block;transform:scale(0.9,1.08);transform-origin:center 10.26px">USD</span></div>
<div class="t" style="left:376px;width:131px;top:434.74px;height:14px;line-height:14px;font-size:9.4px;font-weight:700;text-align:right;padding-right:2px;"><span style="display:inline-block;transform:scale(0.9,1.08);transform-origin:right 10.26px">(3 189 593)</span></div>
<div class="t" style="left:456px;width:131px;top:434.74px;height:14px;line-height:14px;font-size:9.4px;font-weight:700;text-align:right;padding-right:2px;"><span style="display:inline-block;transform:scale(0.9,1.08);transform-origin:right 10.26px">(215 952)</span></div>
<div class="t" style="left:527px;width:131px;top:434.74px;height:14px;line-height:14px;font-size:9.4px;font-weight:700;text-align:right;padding-right:2px;"><span style="display:inline-block;transform:scale(0.9,1.08);transform-origin:right 10.26px">(379 034)</span></div>
<div class="t" style="left:598px;width:131px;top:434.74px;height:14px;line-height:14px;font-size:9.4px;font-weight:700;text-align:right;padding-right:2px;"><span style="display:inline-block;transform:scale(0.9,1.08);transform-origin:right 10.26px">(441 175)</span></div>
<div class="t" style="left:669px;width:131px;top:434.74px;height:14px;line-height:14px;font-size:9.4px;font-weight:700;text-align:right;padding-right:2px;"><span style="display:inline-block;transform:scale(0.9,1.08);transform-origin:right 10.26px">(493 596)</span></div>
<div class="t" style="left:740px;width:131px;top:434.74px;height:14px;line-height:14px;font-size:9.4px;font-weight:700;text-align:right;padding-right:2px;"><span style="display:inline-block;transform:scale(0.9,1.08);transform-origin:right 10.26px">(518 076)</span></div>
<div class="t" style="left:811px;width:131px;top:434.74px;height:14px;line-height:14px;font-size:9.4px;font-weight:700;text-align:right;padding-right:2px;"><span style="display:inline-block;transform:scale(0.9,1.08);transform-origin:right 10.26px">(554 549)</span></div>
<div class="t" style="left:882px;width:131px;top:434.74px;height:14px;line-height:14px;font-size:9.4px;font-weight:700;text-align:right;padding-right:2px;"><span style="display:inline-block;transform:scale(0.9,1.08);transform-origin:right 10.26px">(587 210)</span></div>
<div class="t" style="left:993px;width:117px;top:434.74px;height:14px;line-height:14px;font-size:9.4px;font-weight:700;text-align:right;padding-right:5px;"><span style="display:inline-block;transform:scale(0.9,1.08);transform-origin:right 10.26px">-</span></div>
<div class="t" style="left:1050px;width:117px;top:434.74px;height:14px;line-height:14px;font-size:9.4px;font-weight:700;text-align:right;padding-right:5px;"><span style="display:inline-block;transform:scale(0.9,1.08);transform-origin:right 10.26px">-</span></div>
<div class="t" style="left:1107px;width:117px;top:434.74px;height:14px;line-height:14px;font-size:9.4px;font-weight:700;text-align:right;padding-right:5px;"><span style="display:inline-block;transform:scale(0.9,1.08);transform-origin:right 10.26px">-</span></div>
<div class="t" style="left:1164px;width:117px;top:434.74px;height:14px;line-height:14px;font-size:9.4px;font-weight:700;text-align:right;padding-right:2px;"><span style="display:inline-block;transform:scale(0.9,1.08);transform-origin:right 10.26px">(20 884)</span></div>
<div class="t" style="left:1221px;width:117px;top:434.74px;height:14px;line-height:14px;font-size:9.4px;font-weight:700;text-align:right;padding-right:2px;"><span style="display:inline-block;transform:scale(0.9,1.08);transform-origin:right 10.26px">(21 647)</span></div>
<div class="t" style="left:1278px;width:117px;top:434.74px;height:14px;line-height:14px;font-size:9.4px;font-weight:700;text-align:right;padding-right:2px;"><span style="display:inline-block;transform:scale(0.9,1.08);transform-origin:right 10.26px">(22 386)</span></div>
<div class="t" style="left:1335px;width:117px;top:434.74px;height:14px;line-height:14px;font-size:9.4px;font-weight:700;text-align:right;padding-right:2px;"><span style="display:inline-block;transform:scale(0.9,1.08);transform-origin:right 10.26px">(23 170)</span></div>
<div class="t" style="left:84px;width:336px;top:448.74px;height:14px;line-height:14px;font-size:9.4px;"><span style="display:inline-block;transform:scale(0.955,1.08);transform-origin:left 10.26px">Direct labor</span></div>
<svg style="left:369px;top:449px" width="12" height="11" viewBox="0 0 12 11"><path d="M0.9 6.1 L2.3 4.6 L5.0 6.8 L9.3 1.0 Q10.2 0.3 11.0 1.5 L5.5 9.7 Q5.0 10.2 4.5 9.7 Z" fill="#1f9d4e"/></svg>
<div class="t" style="left:393px;width:34px;top:447.94px;height:14px;line-height:14px;font-size:9.4px;text-align:center;"><span style="display:inline-block;transform:scale(0.955,1.08);transform-origin:center 10.26px">USD</span></div>
<div class="t" style="left:376px;width:131px;top:448.74px;height:14px;line-height:14px;font-size:9.4px;text-align:right;padding-right:2px;"><span style="display:inline-block;transform:scale(0.955,1.08);transform-origin:right 10.26px">(1 759 795)</span></div>
<div class="t" style="left:456px;width:131px;top:448.74px;height:14px;line-height:14px;font-size:9.4px;text-align:right;padding-right:2px;"><span style="display:inline-block;transform:scale(0.955,1.08);transform-origin:right 10.26px">(183 586)</span></div>
<div class="t" style="left:527px;width:131px;top:448.74px;height:14px;line-height:14px;font-size:9.4px;text-align:right;padding-right:2px;"><span style="display:inline-block;transform:scale(0.955,1.08);transform-origin:right 10.26px">(249 870)</span></div>
<div class="t" style="left:598px;width:131px;top:448.74px;height:14px;line-height:14px;font-size:9.4px;text-align:right;padding-right:2px;"><span style="display:inline-block;transform:scale(0.955,1.08);transform-origin:right 10.26px">(254 867)</span></div>
<div class="t" style="left:669px;width:131px;top:448.74px;height:14px;line-height:14px;font-size:9.4px;text-align:right;padding-right:2px;"><span style="display:inline-block;transform:scale(0.955,1.08);transform-origin:right 10.26px">(259 965)</span></div>
<div class="t" style="left:740px;width:131px;top:448.74px;height:14px;line-height:14px;font-size:9.4px;text-align:right;padding-right:2px;"><span style="display:inline-block;transform:scale(0.955,1.08);transform-origin:right 10.26px">(265 164)</span></div>
<div class="t" style="left:811px;width:131px;top:448.74px;height:14px;line-height:14px;font-size:9.4px;text-align:right;padding-right:2px;"><span style="display:inline-block;transform:scale(0.955,1.08);transform-origin:right 10.26px">(270 467)</span></div>
<div class="t" style="left:882px;width:131px;top:448.74px;height:14px;line-height:14px;font-size:9.4px;text-align:right;padding-right:2px;"><span style="display:inline-block;transform:scale(0.955,1.08);transform-origin:right 10.26px">(275 877)</span></div>
<div class="t" style="left:993px;width:117px;top:448.74px;height:14px;line-height:14px;font-size:9.4px;color:#00902e;text-align:right;padding-right:5px;"><span style="display:inline-block;transform:scale(0.955,1.08);transform-origin:right 10.26px">-</span></div>
<div class="t" style="left:1050px;width:117px;top:448.74px;height:14px;line-height:14px;font-size:9.4px;color:#00902e;text-align:right;padding-right:5px;"><span style="display:inline-block;transform:scale(0.955,1.08);transform-origin:right 10.26px">-</span></div>
<div class="t" style="left:1107px;width:117px;top:448.74px;height:14px;line-height:14px;font-size:9.4px;color:#00902e;text-align:right;padding-right:5px;"><span style="display:inline-block;transform:scale(0.955,1.08);transform-origin:right 10.26px">-</span></div>
<div class="t" style="left:1164px;width:117px;top:448.74px;height:14px;line-height:14px;font-size:9.4px;color:#00902e;text-align:right;padding-right:2px;"><span style="display:inline-block;transform:scale(0.955,1.08);transform-origin:right 10.26px">(20 198)</span></div>
<div class="t" style="left:1221px;width:117px;top:448.74px;height:14px;line-height:14px;font-size:9.4px;color:#00902e;text-align:right;padding-right:2px;"><span style="display:inline-block;transform:scale(0.955,1.08);transform-origin:right 10.26px">(20 248)</span></div>
<div class="t" style="left:1278px;width:117px;top:448.74px;height:14px;line-height:14px;font-size:9.4px;color:#00902e;text-align:right;padding-right:2px;"><span style="display:inline-block;transform:scale(0.955,1.08);transform-origin:right 10.26px">(20 298)</span></div>
<div class="t" style="left:1335px;width:117px;top:448.74px;height:14px;line-height:14px;font-size:9.4px;color:#00902e;text-align:right;padding-right:2px;"><span style="display:inline-block;transform:scale(0.955,1.08);transform-origin:right 10.26px">(20 348)</span></div>
<div class="t" style="left:84px;width:336px;top:462.74px;height:14px;line-height:14px;font-size:9.4px;"><span style="display:inline-block;transform:scale(0.955,1.08);transform-origin:left 10.26px">Share of revenue paid to employees</span></div>
<svg style="left:369px;top:463px" width="12" height="11" viewBox="0 0 12 11"><path d="M0.9 6.1 L2.3 4.6 L5.0 6.8 L9.3 1.0 Q10.2 0.3 11.0 1.5 L5.5 9.7 Q5.0 10.2 4.5 9.7 Z" fill="#1f9d4e"/></svg>
<div class="t" style="left:393px;width:34px;top:461.94px;height:14px;line-height:14px;font-size:9.4px;text-align:center;"><span style="display:inline-block;transform:scale(0.955,1.08);transform-origin:center 10.26px">USD</span></div>
<div class="t" style="left:376px;width:131px;top:462.74px;height:14px;line-height:14px;font-size:9.4px;text-align:right;padding-right:2px;"><span style="display:inline-block;transform:scale(0.955,1.08);transform-origin:right 10.26px">(793 763)</span></div>
<div class="t" style="left:456px;width:131px;top:462.74px;height:14px;line-height:14px;font-size:9.4px;text-align:right;padding-right:2px;"><span style="display:inline-block;transform:scale(0.955,1.08);transform-origin:right 10.26px">(17 903)</span></div>
<div class="t" style="left:527px;width:131px;top:462.74px;height:14px;line-height:14px;font-size:9.4px;text-align:right;padding-right:2px;"><span style="display:inline-block;transform:scale(0.955,1.08);transform-origin:right 10.26px">(66 679)</span></div>
<div class="t" style="left:598px;width:131px;top:462.74px;height:14px;line-height:14px;font-size:9.4px;text-align:right;padding-right:2px;"><span style="display:inline-block;transform:scale(0.955,1.08);transform-origin:right 10.26px">(103 421)</span></div>
<div class="t" style="left:669px;width:131px;top:462.74px;height:14px;line-height:14px;font-size:9.4px;text-align:right;padding-right:2px;"><span style="display:inline-block;transform:scale(0.955,1.08);transform-origin:right 10.26px">(127 792)</span></div>
<div class="t" style="left:740px;width:131px;top:462.74px;height:14px;line-height:14px;font-size:9.4px;text-align:right;padding-right:2px;"><span style="display:inline-block;transform:scale(0.955,1.08);transform-origin:right 10.26px">(136 829)</span></div>
<div class="t" style="left:811px;width:131px;top:462.74px;height:14px;line-height:14px;font-size:9.4px;text-align:right;padding-right:2px;"><span style="display:inline-block;transform:scale(0.955,1.08);transform-origin:right 10.26px">(164 536)</span></div>
<div class="t" style="left:882px;width:131px;top:462.74px;height:14px;line-height:14px;font-size:9.4px;text-align:right;padding-right:2px;"><span style="display:inline-block;transform:scale(0.955,1.08);transform-origin:right 10.26px">(176 603)</span></div>
<div class="t" style="left:993px;width:117px;top:462.74px;height:14px;line-height:14px;font-size:9.4px;color:#00902e;text-align:right;padding-right:5px;"><span style="display:inline-block;transform:scale(0.955,1.08);transform-origin:right 10.26px">-</span></div>
<div class="t" style="left:1050px;width:117px;top:462.74px;height:14px;line-height:14px;font-size:9.4px;color:#00902e;text-align:right;padding-right:5px;"><span style="display:inline-block;transform:scale(0.955,1.08);transform-origin:right 10.26px">-</span></div>
<div class="t" style="left:1107px;width:117px;top:462.74px;height:14px;line-height:14px;font-size:9.4px;color:#00902e;text-align:right;padding-right:5px;"><span style="display:inline-block;transform:scale(0.955,1.08);transform-origin:right 10.26px">-</span></div>
<div class="t" style="left:1164px;width:117px;top:462.74px;height:14px;line-height:14px;font-size:9.4px;color:#00902e;text-align:right;padding-right:2px;"><span style="display:inline-block;transform:scale(0.955,1.08);transform-origin:right 10.26px">(380)</span></div>
<div class="t" style="left:1221px;width:117px;top:462.74px;height:14px;line-height:14px;font-size:9.4px;color:#00902e;text-align:right;padding-right:2px;"><span style="display:inline-block;transform:scale(0.955,1.08);transform-origin:right 10.26px">(774)</span></div>
<div class="t" style="left:1278px;width:117px;top:462.74px;height:14px;line-height:14px;font-size:9.4px;color:#00902e;text-align:right;padding-right:2px;"><span style="display:inline-block;transform:scale(0.955,1.08);transform-origin:right 10.26px">(1 155)</span></div>
<div class="t" style="left:1335px;width:117px;top:462.74px;height:14px;line-height:14px;font-size:9.4px;color:#00902e;text-align:right;padding-right:2px;"><span style="display:inline-block;transform:scale(0.955,1.08);transform-origin:right 10.26px">(1 560)</span></div>
<div class="t" style="left:84px;width:336px;top:476.74px;height:14px;line-height:14px;font-size:9.4px;"><span style="display:inline-block;transform:scale(0.955,1.08);transform-origin:left 10.26px">Retail products COGS</span></div>
<svg style="left:369px;top:477px" width="12" height="11" viewBox="0 0 12 11"><path d="M0.9 6.1 L2.3 4.6 L5.0 6.8 L9.3 1.0 Q10.2 0.3 11.0 1.5 L5.5 9.7 Q5.0 10.2 4.5 9.7 Z" fill="#1f9d4e"/></svg>
<div class="t" style="left:393px;width:34px;top:475.94px;height:14px;line-height:14px;font-size:9.4px;text-align:center;"><span style="display:inline-block;transform:scale(0.955,1.08);transform-origin:center 10.26px">USD</span></div>
<div class="t" style="left:376px;width:131px;top:476.74px;height:14px;line-height:14px;font-size:9.4px;text-align:right;padding-right:2px;"><span style="display:inline-block;transform:scale(0.955,1.08);transform-origin:right 10.26px">(310 359)</span></div>
<div class="t" style="left:456px;width:131px;top:476.74px;height:14px;line-height:14px;font-size:9.4px;text-align:right;padding-right:2px;"><span style="display:inline-block;transform:scale(0.955,1.08);transform-origin:right 10.26px">(7 057)</span></div>
<div class="t" style="left:527px;width:131px;top:476.74px;height:14px;line-height:14px;font-size:9.4px;text-align:right;padding-right:2px;"><span style="display:inline-block;transform:scale(0.955,1.08);transform-origin:right 10.26px">(30 490)</span></div>
<div class="t" style="left:598px;width:131px;top:476.74px;height:14px;line-height:14px;font-size:9.4px;text-align:right;padding-right:2px;"><span style="display:inline-block;transform:scale(0.955,1.08);transform-origin:right 10.26px">(40 445)</span></div>
<div class="t" style="left:669px;width:131px;top:476.74px;height:14px;line-height:14px;font-size:9.4px;text-align:right;padding-right:2px;"><span style="display:inline-block;transform:scale(0.955,1.08);transform-origin:right 10.26px">(51 645)</span></div>
<div class="t" style="left:740px;width:131px;top:476.74px;height:14px;line-height:14px;font-size:9.4px;text-align:right;padding-right:2px;"><span style="display:inline-block;transform:scale(0.955,1.08);transform-origin:right 10.26px">(56 644)</span></div>
<div class="t" style="left:811px;width:131px;top:476.74px;height:14px;line-height:14px;font-size:9.4px;text-align:right;padding-right:2px;"><span style="display:inline-block;transform:scale(0.955,1.08);transform-origin:right 10.26px">(58 334)</span></div>
<div class="t" style="left:882px;width:131px;top:476.74px;height:14px;line-height:14px;font-size:9.4px;text-align:right;padding-right:2px;"><span style="display:inline-block;transform:scale(0.955,1.08);transform-origin:right 10.26px">(65 743)</span></div>
<div class="t" style="left:993px;width:117px;top:476.74px;height:14px;line-height:14px;font-size:9.4px;color:#00902e;text-align:right;padding-right:5px;"><span style="display:inline-block;transform:scale(0.955,1.08);transform-origin:right 10.26px">-</span></div>
<div class="t" style="left:1050px;width:117px;top:476.74px;height:14px;line-height:14px;font-size:9.4px;color:#00902e;text-align:right;padding-right:5px;"><span style="display:inline-block;transform:scale(0.955,1.08);transform-origin:right 10.26px">-</span></div>
<div class="t" style="left:1107px;width:117px;top:476.74px;height:14px;line-height:14px;font-size:9.4px;color:#00902e;text-align:right;padding-right:5px;"><span style="display:inline-block;transform:scale(0.955,1.08);transform-origin:right 10.26px">-</span></div>
<div class="t" style="left:1164px;width:117px;top:476.74px;height:14px;line-height:14px;font-size:9.4px;color:#00902e;text-align:right;padding-right:2px;"><span style="display:inline-block;transform:scale(0.955,1.08);transform-origin:right 10.26px">(150)</span></div>
<div class="t" style="left:1221px;width:117px;top:476.74px;height:14px;line-height:14px;font-size:9.4px;color:#00902e;text-align:right;padding-right:2px;"><span style="display:inline-block;transform:scale(0.955,1.08);transform-origin:right 10.26px">(305)</span></div>
<div class="t" style="left:1278px;width:117px;top:476.74px;height:14px;line-height:14px;font-size:9.4px;color:#00902e;text-align:right;padding-right:2px;"><span style="display:inline-block;transform:scale(0.955,1.08);transform-origin:right 10.26px">(455)</span></div>
<div class="t" style="left:1335px;width:117px;top:476.74px;height:14px;line-height:14px;font-size:9.4px;color:#00902e;text-align:right;padding-right:2px;"><span style="display:inline-block;transform:scale(0.955,1.08);transform-origin:right 10.26px">(610)</span></div>
<div class="t" style="left:84px;width:336px;top:490.74px;height:14px;line-height:14px;font-size:9.4px;"><span style="display:inline-block;transform:scale(0.955,1.08);transform-origin:left 10.26px">Bar &amp; café COGS</span></div>
<svg style="left:369px;top:491px" width="12" height="11" viewBox="0 0 12 11"><path d="M0.9 6.1 L2.3 4.6 L5.0 6.8 L9.3 1.0 Q10.2 0.3 11.0 1.5 L5.5 9.7 Q5.0 10.2 4.5 9.7 Z" fill="#1f9d4e"/></svg>
<div class="t" style="left:393px;width:34px;top:489.94px;height:14px;line-height:14px;font-size:9.4px;text-align:center;"><span style="display:inline-block;transform:scale(0.955,1.08);transform-origin:center 10.26px">USD</span></div>
<div class="t" style="left:376px;width:131px;top:490.74px;height:14px;line-height:14px;font-size:9.4px;text-align:right;padding-right:2px;"><span style="display:inline-block;transform:scale(0.955,1.08);transform-origin:right 10.26px">(325 675)</span></div>
<div class="t" style="left:456px;width:131px;top:490.74px;height:14px;line-height:14px;font-size:9.4px;text-align:right;padding-right:2px;"><span style="display:inline-block;transform:scale(0.955,1.08);transform-origin:right 10.26px">(7 406)</span></div>
<div class="t" style="left:527px;width:131px;top:490.74px;height:14px;line-height:14px;font-size:9.4px;text-align:right;padding-right:2px;"><span style="display:inline-block;transform:scale(0.955,1.08);transform-origin:right 10.26px">(31 995)</span></div>
<div class="t" style="left:598px;width:131px;top:490.74px;height:14px;line-height:14px;font-size:9.4px;text-align:right;padding-right:2px;"><span style="display:inline-block;transform:scale(0.955,1.08);transform-origin:right 10.26px">(42 441)</span></div>
<div class="t" style="left:669px;width:131px;top:490.74px;height:14px;line-height:14px;font-size:9.4px;text-align:right;padding-right:2px;"><span style="display:inline-block;transform:scale(0.955,1.08);transform-origin:right 10.26px">(54 194)</span></div>
<div class="t" style="left:740px;width:131px;top:490.74px;height:14px;line-height:14px;font-size:9.4px;text-align:right;padding-right:2px;"><span style="display:inline-block;transform:scale(0.955,1.08);transform-origin:right 10.26px">(59 439)</span></div>
<div class="t" style="left:811px;width:131px;top:490.74px;height:14px;line-height:14px;font-size:9.4px;text-align:right;padding-right:2px;"><span style="display:inline-block;transform:scale(0.955,1.08);transform-origin:right 10.26px">(61 212)</span></div>
<div class="t" style="left:882px;width:131px;top:490.74px;height:14px;line-height:14px;font-size:9.4px;text-align:right;padding-right:2px;"><span style="display:inline-block;transform:scale(0.955,1.08);transform-origin:right 10.26px">(68 987)</span></div>
<div class="t" style="left:993px;width:117px;top:490.74px;height:14px;line-height:14px;font-size:9.4px;color:#00902e;text-align:right;padding-right:5px;"><span style="display:inline-block;transform:scale(0.955,1.08);transform-origin:right 10.26px">-</span></div>
<div class="t" style="left:1050px;width:117px;top:490.74px;height:14px;line-height:14px;font-size:9.4px;color:#00902e;text-align:right;padding-right:5px;"><span style="display:inline-block;transform:scale(0.955,1.08);transform-origin:right 10.26px">-</span></div>
<div class="t" style="left:1107px;width:117px;top:490.74px;height:14px;line-height:14px;font-size:9.4px;color:#00902e;text-align:right;padding-right:5px;"><span style="display:inline-block;transform:scale(0.955,1.08);transform-origin:right 10.26px">-</span></div>
<div class="t" style="left:1164px;width:117px;top:490.74px;height:14px;line-height:14px;font-size:9.4px;color:#00902e;text-align:right;padding-right:2px;"><span style="display:inline-block;transform:scale(0.955,1.08);transform-origin:right 10.26px">(157)</span></div>
<div class="t" style="left:1221px;width:117px;top:490.74px;height:14px;line-height:14px;font-size:9.4px;color:#00902e;text-align:right;padding-right:2px;"><span style="display:inline-block;transform:scale(0.955,1.08);transform-origin:right 10.26px">(320)</span></div>
<div class="t" style="left:1278px;width:117px;top:490.74px;height:14px;line-height:14px;font-size:9.4px;color:#00902e;text-align:right;padding-right:2px;"><span style="display:inline-block;transform:scale(0.955,1.08);transform-origin:right 10.26px">(478)</span></div>
<div class="t" style="left:1335px;width:117px;top:490.74px;height:14px;line-height:14px;font-size:9.4px;color:#00902e;text-align:right;padding-right:2px;"><span style="display:inline-block;transform:scale(0.955,1.08);transform-origin:right 10.26px">(640)</span></div>
<div class="t" style="left:84px;width:336px;top:518.74px;height:14px;line-height:14px;font-size:9.4px;font-weight:700;"><span style="display:inline-block;transform:scale(0.9,1.08);transform-origin:left 10.26px">Gross profit</span></div>
<svg style="left:369px;top:519px" width="12" height="11" viewBox="0 0 12 11"><path d="M0.9 6.1 L2.3 4.6 L5.0 6.8 L9.3 1.0 Q10.2 0.3 11.0 1.5 L5.5 9.7 Q5.0 10.2 4.5 9.7 Z" fill="#1f9d4e"/></svg>
<div class="t" style="left:393px;width:34px;top:517.94px;height:14px;line-height:14px;font-size:9.4px;font-weight:700;text-align:center;"><span style="display:inline-block;transform:scale(0.9,1.08);transform-origin:center 10.26px">USD</span></div>
<div class="t" style="left:376px;width:131px;top:518.74px;height:14px;line-height:14px;font-size:9.4px;font-weight:700;text-align:right;padding-right:5px;"><span style="display:inline-block;transform:scale(0.9,1.08);transform-origin:right 10.26px">6 523 449</span></div>
<div class="t" style="left:456px;width:131px;top:518.74px;height:14px;line-height:14px;font-size:9.4px;font-weight:700;text-align:right;padding-right:5px;"><span style="display:inline-block;transform:scale(0.9,1.08);transform-origin:right 10.26px">79 308</span></div>
<div class="t" style="left:527px;width:131px;top:518.74px;height:14px;line-height:14px;font-size:9.4px;font-weight:700;text-align:right;padding-right:5px;"><span style="display:inline-block;transform:scale(0.9,1.08);transform-origin:right 10.26px">669 837</span></div>
<div class="t" style="left:598px;width:131px;top:518.74px;height:14px;line-height:14px;font-size:9.4px;font-weight:700;text-align:right;padding-right:5px;"><span style="display:inline-block;transform:scale(0.9,1.08);transform-origin:right 10.26px">942 709</span></div>
<div class="t" style="left:669px;width:131px;top:518.74px;height:14px;line-height:14px;font-size:9.4px;font-weight:700;text-align:right;padding-right:5px;"><span style="display:inline-block;transform:scale(0.9,1.08);transform-origin:right 10.26px">1 093 276</span></div>
<div class="t" style="left:740px;width:131px;top:518.74px;height:14px;line-height:14px;font-size:9.4px;font-weight:700;text-align:right;padding-right:5px;"><span style="display:inline-block;transform:scale(0.9,1.08);transform-origin:right 10.26px">1 163 239</span></div>
<div class="t" style="left:811px;width:131px;top:518.74px;height:14px;line-height:14px;font-size:9.4px;font-weight:700;text-align:right;padding-right:5px;"><span style="display:inline-block;transform:scale(0.9,1.08);transform-origin:right 10.26px">1 263 184</span></div>
<div class="t" style="left:882px;width:131px;top:518.74px;height:14px;line-height:14px;font-size:9.4px;font-weight:700;text-align:right;padding-right:5px;"><span style="display:inline-block;transform:scale(0.9,1.08);transform-origin:right 10.26px">1 311 897</span></div>
<div class="t" style="left:993px;width:117px;top:518.74px;height:14px;line-height:14px;font-size:9.4px;font-weight:700;text-align:right;padding-right:5px;"><span style="display:inline-block;transform:scale(0.9,1.08);transform-origin:right 10.26px">-</span></div>
<div class="t" style="left:1050px;width:117px;top:518.74px;height:14px;line-height:14px;font-size:9.4px;font-weight:700;text-align:right;padding-right:5px;"><span style="display:inline-block;transform:scale(0.9,1.08);transform-origin:right 10.26px">-</span></div>
<div class="t" style="left:1107px;width:117px;top:518.74px;height:14px;line-height:14px;font-size:9.4px;font-weight:700;text-align:right;padding-right:5px;"><span style="display:inline-block;transform:scale(0.9,1.08);transform-origin:right 10.26px">-</span></div>
<div class="t" style="left:1164px;width:117px;top:518.74px;height:14px;line-height:14px;font-size:9.4px;font-weight:700;text-align:right;padding-right:2px;"><span style="display:inline-block;transform:scale(0.9,1.08);transform-origin:right 10.26px">(14 075)</span></div>
<div class="t" style="left:1221px;width:117px;top:518.74px;height:14px;line-height:14px;font-size:9.4px;font-weight:700;text-align:right;padding-right:2px;"><span style="display:inline-block;transform:scale(0.9,1.08);transform-origin:right 10.26px">(8 405)</span></div>
<div class="t" style="left:1278px;width:117px;top:518.74px;height:14px;line-height:14px;font-size:9.4px;font-weight:700;text-align:right;padding-right:2px;"><span style="display:inline-block;transform:scale(0.9,1.08);transform-origin:right 10.26px">(2 562)</span></div>
<div class="t" style="left:1335px;width:117px;top:518.74px;height:14px;line-height:14px;font-size:9.4px;font-weight:700;text-align:right;padding-right:5px;"><span style="display:inline-block;transform:scale(0.9,1.08);transform-origin:right 10.26px">2 890</span></div>
<div class="t" style="left:92px;width:328px;top:532.74px;height:14px;line-height:14px;font-size:9.4px;font-style:italic;"><span style="display:inline-block;transform:scale(0.955,1.08);transform-origin:left 10.26px">Gross profit margin</span></div>
<div class="t" style="left:393px;width:34px;top:532.74px;height:14px;line-height:14px;font-size:9.4px;text-align:center;font-style:italic;"><span style="display:inline-block;transform:scale(0.955,1.08);transform-origin:center 10.26px">%</span></div>
<svg style="left:494px;top:536px" width="10" height="4" viewBox="0 0 10 4"><path d="M0.3 2.6 Q1.5 0.6 2.6 2 T5 2 T7.4 2 T9.7 1.4" stroke="#000" stroke-width="1.05" fill="none"/></svg>
<div class="t" style="left:456px;width:131px;top:532.74px;height:14px;line-height:14px;font-size:9.4px;text-align:right;font-style:italic;padding-right:4px;"><span style="display:inline-block;transform:scale(0.955,1.08);transform-origin:right 10.26px">27%</span></div>
<div class="t" style="left:527px;width:131px;top:532.74px;height:14px;line-height:14px;font-size:9.4px;text-align:right;font-style:italic;padding-right:4px;"><span style="display:inline-block;transform:scale(0.955,1.08);transform-origin:right 10.26px">64%</span></div>
<div class="t" style="left:598px;width:131px;top:532.74px;height:14px;line-height:14px;font-size:9.4px;text-align:right;font-style:italic;padding-right:4px;"><span style="display:inline-block;transform:scale(0.955,1.08);transform-origin:right 10.26px">68%</span></div>
<div class="t" style="left:669px;width:131px;top:532.74px;height:14px;line-height:14px;font-size:9.4px;text-align:right;font-style:italic;padding-right:4px;"><span style="display:inline-block;transform:scale(0.955,1.08);transform-origin:right 10.26px">69%</span></div>
<div class="t" style="left:740px;width:131px;top:532.74px;height:14px;line-height:14px;font-size:9.4px;text-align:right;font-style:italic;padding-right:4px;"><span style="display:inline-block;transform:scale(0.955,1.08);transform-origin:right 10.26px">69%</span></div>
<div class="t" style="left:811px;width:131px;top:532.74px;height:14px;line-height:14px;font-size:9.4px;text-align:right;font-style:italic;padding-right:4px;"><span style="display:inline-block;transform:scale(0.955,1.08);transform-origin:right 10.26px">69%</span></div>
<div class="t" style="left:882px;width:131px;top:532.74px;height:14px;line-height:14px;font-size:9.4px;text-align:right;font-style:italic;padding-right:4px;"><span style="display:inline-block;transform:scale(0.955,1.08);transform-origin:right 10.26px">69%</span></div>
<div class="t" style="left:993px;width:117px;top:532.74px;height:14px;line-height:14px;font-size:9.4px;text-align:right;padding-right:5px;"><span style="display:inline-block;transform:scale(0.955,1.08);transform-origin:right 10.26px">-</span></div>
<div class="t" style="left:1050px;width:117px;top:532.74px;height:14px;line-height:14px;font-size:9.4px;text-align:right;padding-right:5px;"><span style="display:inline-block;transform:scale(0.955,1.08);transform-origin:right 10.26px">-</span></div>
<div class="t" style="left:1107px;width:117px;top:532.74px;height:14px;line-height:14px;font-size:9.4px;text-align:right;padding-right:5px;"><span style="display:inline-block;transform:scale(0.955,1.08);transform-origin:right 10.26px">-</span></div>
<div class="t" style="left:1164px;width:117px;top:532.74px;height:14px;line-height:14px;font-size:9.4px;text-align:right;font-style:italic;padding-right:4px;"><span style="display:inline-block;transform:scale(0.955,1.08);transform-origin:right 10.26px">-207%</span></div>
<div class="t" style="left:1221px;width:117px;top:532.74px;height:14px;line-height:14px;font-size:9.4px;text-align:right;font-style:italic;padding-right:4px;"><span style="display:inline-block;transform:scale(0.955,1.08);transform-origin:right 10.26px">-63%</span></div>
<div class="t" style="left:1278px;width:117px;top:532.74px;height:14px;line-height:14px;font-size:9.4px;text-align:right;font-style:italic;padding-right:4px;"><span style="display:inline-block;transform:scale(0.955,1.08);transform-origin:right 10.26px">-13%</span></div>
<div class="t" style="left:1335px;width:117px;top:532.74px;height:14px;line-height:14px;font-size:9.4px;text-align:right;font-style:italic;padding-right:4px;"><span style="display:inline-block;transform:scale(0.955,1.08);transform-origin:right 10.26px">11%</span></div>
<div class="t" style="left:84px;width:336px;top:560.74px;height:14px;line-height:14px;font-size:9.4px;font-weight:700;"><span style="display:inline-block;transform:scale(0.9,1.08);transform-origin:left 10.26px">Sales, general and administrative expenses</span></div>
<svg style="left:369px;top:561px" width="12" height="11" viewBox="0 0 12 11"><path d="M0.9 6.1 L2.3 4.6 L5.0 6.8 L9.3 1.0 Q10.2 0.3 11.0 1.5 L5.5 9.7 Q5.0 10.2 4.5 9.7 Z" fill="#1f9d4e"/></svg>
<div class="t" style="left:393px;width:34px;top:559.94px;height:14px;line-height:14px;font-size:9.4px;font-weight:700;text-align:center;"><span style="display:inline-block;transform:scale(0.9,1.08);transform-origin:center 10.26px">USD</span></div>
<div class="t" style="left:376px;width:131px;top:560.74px;height:14px;line-height:14px;font-size:9.4px;font-weight:700;text-align:right;padding-right:2px;"><span style="display:inline-block;transform:scale(0.9,1.08);transform-origin:right 10.26px">(6 044 824)</span></div>
<div class="t" style="left:456px;width:131px;top:560.74px;height:14px;line-height:14px;font-size:9.4px;font-weight:700;text-align:right;padding-right:2px;"><span style="display:inline-block;transform:scale(0.9,1.08);transform-origin:right 10.26px">(607 156)</span></div>
<div class="t" style="left:527px;width:131px;top:560.74px;height:14px;line-height:14px;font-size:9.4px;font-weight:700;text-align:right;padding-right:2px;"><span style="display:inline-block;transform:scale(0.9,1.08);transform-origin:right 10.26px">(846 624)</span></div>
<div class="t" style="left:598px;width:131px;top:560.74px;height:14px;line-height:14px;font-size:9.4px;font-weight:700;text-align:right;padding-right:2px;"><span style="display:inline-block;transform:scale(0.9,1.08);transform-origin:right 10.26px">(873 928)</span></div>
<div class="t" style="left:669px;width:131px;top:560.74px;height:14px;line-height:14px;font-size:9.4px;font-weight:700;text-align:right;padding-right:2px;"><span style="display:inline-block;transform:scale(0.9,1.08);transform-origin:right 10.26px">(897 721)</span></div>
<div class="t" style="left:740px;width:131px;top:560.74px;height:14px;line-height:14px;font-size:9.4px;font-weight:700;text-align:right;padding-right:2px;"><span style="display:inline-block;transform:scale(0.9,1.08);transform-origin:right 10.26px">(918 017)</span></div>
<div class="t" style="left:811px;width:131px;top:560.74px;height:14px;line-height:14px;font-size:9.4px;font-weight:700;text-align:right;padding-right:2px;"><span style="display:inline-block;transform:scale(0.9,1.08);transform-origin:right 10.26px">(940 098)</span></div>
<div class="t" style="left:882px;width:131px;top:560.74px;height:14px;line-height:14px;font-size:9.4px;font-weight:700;text-align:right;padding-right:2px;"><span style="display:inline-block;transform:scale(0.9,1.08);transform-origin:right 10.26px">(961 280)</span></div>
<div class="t" style="left:993px;width:117px;top:560.74px;height:14px;line-height:14px;font-size:9.4px;font-weight:700;text-align:right;padding-right:5px;"><span style="display:inline-block;transform:scale(0.9,1.08);transform-origin:right 10.26px">-</span></div>
<div class="t" style="left:1050px;width:117px;top:560.74px;height:14px;line-height:14px;font-size:9.4px;font-weight:700;text-align:right;padding-right:5px;"><span style="display:inline-block;transform:scale(0.9,1.08);transform-origin:right 10.26px">-</span></div>
<div class="t" style="left:1107px;width:117px;top:560.74px;height:14px;line-height:14px;font-size:9.4px;font-weight:700;text-align:right;padding-right:5px;"><span style="display:inline-block;transform:scale(0.9,1.08);transform-origin:right 10.26px">-</span></div>
<div class="t" style="left:1164px;width:117px;top:560.74px;height:14px;line-height:14px;font-size:9.4px;font-weight:700;text-align:right;padding-right:2px;"><span style="display:inline-block;transform:scale(0.9,1.08);transform-origin:right 10.26px">(66 067)</span></div>
<div class="t" style="left:1221px;width:117px;top:560.74px;height:14px;line-height:14px;font-size:9.4px;font-weight:700;text-align:right;padding-right:2px;"><span style="display:inline-block;transform:scale(0.9,1.08);transform-origin:right 10.26px">(66 366)</span></div>
<div class="t" style="left:1278px;width:117px;top:560.74px;height:14px;line-height:14px;font-size:9.4px;font-weight:700;text-align:right;padding-right:2px;"><span style="display:inline-block;transform:scale(0.9,1.08);transform-origin:right 10.26px">(66 692)</span></div>
<div class="t" style="left:1335px;width:117px;top:560.74px;height:14px;line-height:14px;font-size:9.4px;font-weight:700;text-align:right;padding-right:2px;"><span style="display:inline-block;transform:scale(0.9,1.08);transform-origin:right 10.26px">(67 030)</span></div>
<div class="t" style="left:92px;width:328px;top:574.74px;height:14px;line-height:14px;font-size:9.4px;"><span style="display:inline-block;transform:scale(0.955,1.08);transform-origin:left 10.26px">Operating expenses</span></div>
<svg style="left:369px;top:575px" width="12" height="11" viewBox="0 0 12 11"><path d="M0.9 6.1 L2.3 4.6 L5.0 6.8 L9.3 1.0 Q10.2 0.3 11.0 1.5 L5.5 9.7 Q5.0 10.2 4.5 9.7 Z" fill="#1f9d4e"/></svg>
<div class="t" style="left:393px;width:34px;top:573.94px;height:14px;line-height:14px;font-size:9.4px;text-align:center;"><span style="display:inline-block;transform:scale(0.955,1.08);transform-origin:center 10.26px">USD</span></div>
<div class="t" style="left:376px;width:131px;top:574.74px;height:14px;line-height:14px;font-size:9.4px;text-align:right;padding-right:2px;"><span style="display:inline-block;transform:scale(0.955,1.08);transform-origin:right 10.26px">(3 111 831)</span></div>
<div class="t" style="left:456px;width:131px;top:574.74px;height:14px;line-height:14px;font-size:9.4px;text-align:right;padding-right:2px;"><span style="display:inline-block;transform:scale(0.955,1.08);transform-origin:right 10.26px">(301 179)</span></div>
<div class="t" style="left:527px;width:131px;top:574.74px;height:14px;line-height:14px;font-size:9.4px;text-align:right;padding-right:2px;"><span style="display:inline-block;transform:scale(0.955,1.08);transform-origin:right 10.26px">(430 174)</span></div>
<div class="t" style="left:598px;width:131px;top:574.74px;height:14px;line-height:14px;font-size:9.4px;text-align:right;padding-right:2px;"><span style="display:inline-block;transform:scale(0.955,1.08);transform-origin:right 10.26px">(449 149)</span></div>
<div class="t" style="left:669px;width:131px;top:574.74px;height:14px;line-height:14px;font-size:9.4px;text-align:right;padding-right:2px;"><span style="display:inline-block;transform:scale(0.955,1.08);transform-origin:right 10.26px">(464 447)</span></div>
<div class="t" style="left:740px;width:131px;top:574.74px;height:14px;line-height:14px;font-size:9.4px;text-align:right;padding-right:2px;"><span style="display:inline-block;transform:scale(0.955,1.08);transform-origin:right 10.26px">(476 077)</span></div>
<div class="t" style="left:811px;width:131px;top:574.74px;height:14px;line-height:14px;font-size:9.4px;text-align:right;padding-right:2px;"><span style="display:inline-block;transform:scale(0.955,1.08);transform-origin:right 10.26px">(489 320)</span></div>
<div class="t" style="left:882px;width:131px;top:574.74px;height:14px;line-height:14px;font-size:9.4px;text-align:right;padding-right:2px;"><span style="display:inline-block;transform:scale(0.955,1.08);transform-origin:right 10.26px">(501 486)</span></div>
<div class="t" style="left:993px;width:117px;top:574.74px;height:14px;line-height:14px;font-size:9.4px;color:#00902e;text-align:right;padding-right:5px;"><span style="display:inline-block;transform:scale(0.955,1.08);transform-origin:right 10.26px">-</span></div>
<div class="t" style="left:1050px;width:117px;top:574.74px;height:14px;line-height:14px;font-size:9.4px;color:#00902e;text-align:right;padding-right:5px;"><span style="display:inline-block;transform:scale(0.955,1.08);transform-origin:right 10.26px">-</span></div>
<div class="t" style="left:1107px;width:117px;top:574.74px;height:14px;line-height:14px;font-size:9.4px;color:#00902e;text-align:right;padding-right:5px;"><span style="display:inline-block;transform:scale(0.955,1.08);transform-origin:right 10.26px">-</span></div>
<div class="t" style="left:1164px;width:117px;top:574.74px;height:14px;line-height:14px;font-size:9.4px;color:#00902e;text-align:right;padding-right:2px;"><span style="display:inline-block;transform:scale(0.955,1.08);transform-origin:right 10.26px">(32 404)</span></div>
<div class="t" style="left:1221px;width:117px;top:574.74px;height:14px;line-height:14px;font-size:9.4px;color:#00902e;text-align:right;padding-right:2px;"><span style="display:inline-block;transform:scale(0.955,1.08);transform-origin:right 10.26px">(32 620)</span></div>
<div class="t" style="left:1278px;width:117px;top:574.74px;height:14px;line-height:14px;font-size:9.4px;color:#00902e;text-align:right;padding-right:2px;"><span style="display:inline-block;transform:scale(0.955,1.08);transform-origin:right 10.26px">(32 862)</span></div>
<div class="t" style="left:1335px;width:117px;top:574.74px;height:14px;line-height:14px;font-size:9.4px;color:#00902e;text-align:right;padding-right:2px;"><span style="display:inline-block;transform:scale(0.955,1.08);transform-origin:right 10.26px">(33 120)</span></div>
<div class="t" style="left:92px;width:328px;top:588.74px;height:14px;line-height:14px;font-size:9.4px;"><span style="display:inline-block;transform:scale(0.955,1.08);transform-origin:left 10.26px">Support labor</span></div>
<svg style="left:369px;top:589px" width="12" height="11" viewBox="0 0 12 11"><path d="M0.9 6.1 L2.3 4.6 L5.0 6.8 L9.3 1.0 Q10.2 0.3 11.0 1.5 L5.5 9.7 Q5.0 10.2 4.5 9.7 Z" fill="#1f9d4e"/></svg>
<div class="t" style="left:393px;width:34px;top:587.94px;height:14px;line-height:14px;font-size:9.4px;text-align:center;"><span style="display:inline-block;transform:scale(0.955,1.08);transform-origin:center 10.26px">USD</span></div>
<div class="t" style="left:376px;width:131px;top:588.74px;height:14px;line-height:14px;font-size:9.4px;text-align:right;padding-right:2px;"><span style="display:inline-block;transform:scale(0.955,1.08);transform-origin:right 10.26px">(2 932 992)</span></div>
<div class="t" style="left:456px;width:131px;top:588.74px;height:14px;line-height:14px;font-size:9.4px;text-align:right;padding-right:2px;"><span style="display:inline-block;transform:scale(0.955,1.08);transform-origin:right 10.26px">(305 977)</span></div>
<div class="t" style="left:527px;width:131px;top:588.74px;height:14px;line-height:14px;font-size:9.4px;text-align:right;padding-right:2px;"><span style="display:inline-block;transform:scale(0.955,1.08);transform-origin:right 10.26px">(416 450)</span></div>
<div class="t" style="left:598px;width:131px;top:588.74px;height:14px;line-height:14px;font-size:9.4px;text-align:right;padding-right:2px;"><span style="display:inline-block;transform:scale(0.955,1.08);transform-origin:right 10.26px">(424 779)</span></div>
<div class="t" style="left:669px;width:131px;top:588.74px;height:14px;line-height:14px;font-size:9.4px;text-align:right;padding-right:2px;"><span style="display:inline-block;transform:scale(0.955,1.08);transform-origin:right 10.26px">(433 274)</span></div>
<div class="t" style="left:740px;width:131px;top:588.74px;height:14px;line-height:14px;font-size:9.4px;text-align:right;padding-right:2px;"><span style="display:inline-block;transform:scale(0.955,1.08);transform-origin:right 10.26px">(441 940)</span></div>
<div class="t" style="left:811px;width:131px;top:588.74px;height:14px;line-height:14px;font-size:9.4px;text-align:right;padding-right:2px;"><span style="display:inline-block;transform:scale(0.955,1.08);transform-origin:right 10.26px">(450 779)</span></div>
<div class="t" style="left:882px;width:131px;top:588.74px;height:14px;line-height:14px;font-size:9.4px;text-align:right;padding-right:2px;"><span style="display:inline-block;transform:scale(0.955,1.08);transform-origin:right 10.26px">(459 794)</span></div>
<div class="t" style="left:993px;width:117px;top:588.74px;height:14px;line-height:14px;font-size:9.4px;color:#00902e;text-align:right;padding-right:5px;"><span style="display:inline-block;transform:scale(0.955,1.08);transform-origin:right 10.26px">-</span></div>
<div class="t" style="left:1050px;width:117px;top:588.74px;height:14px;line-height:14px;font-size:9.4px;color:#00902e;text-align:right;padding-right:5px;"><span style="display:inline-block;transform:scale(0.955,1.08);transform-origin:right 10.26px">-</span></div>
<div class="t" style="left:1107px;width:117px;top:588.74px;height:14px;line-height:14px;font-size:9.4px;color:#00902e;text-align:right;padding-right:5px;"><span style="display:inline-block;transform:scale(0.955,1.08);transform-origin:right 10.26px">-</span></div>
<div class="t" style="left:1164px;width:117px;top:588.74px;height:14px;line-height:14px;font-size:9.4px;color:#00902e;text-align:right;padding-right:2px;"><span style="display:inline-block;transform:scale(0.955,1.08);transform-origin:right 10.26px">(33 663)</span></div>
<div class="t" style="left:1221px;width:117px;top:588.74px;height:14px;line-height:14px;font-size:9.4px;color:#00902e;text-align:right;padding-right:2px;"><span style="display:inline-block;transform:scale(0.955,1.08);transform-origin:right 10.26px">(33 746)</span></div>
<div class="t" style="left:1278px;width:117px;top:588.74px;height:14px;line-height:14px;font-size:9.4px;color:#00902e;text-align:right;padding-right:2px;"><span style="display:inline-block;transform:scale(0.955,1.08);transform-origin:right 10.26px">(33 830)</span></div>
<div class="t" style="left:1335px;width:117px;top:588.74px;height:14px;line-height:14px;font-size:9.4px;color:#00902e;text-align:right;padding-right:2px;"><span style="display:inline-block;transform:scale(0.955,1.08);transform-origin:right 10.26px">(33 910)</span></div>
<div class="t" style="left:84px;width:336px;top:616.74px;height:14px;line-height:14px;font-size:9.4px;font-weight:700;"><span style="display:inline-block;transform:scale(0.9,1.08);transform-origin:left 10.26px">EBITDA</span></div>
<svg style="left:369px;top:617px" width="12" height="11" viewBox="0 0 12 11"><path d="M0.9 6.1 L2.3 4.6 L5.0 6.8 L9.3 1.0 Q10.2 0.3 11.0 1.5 L5.5 9.7 Q5.0 10.2 4.5 9.7 Z" fill="#1f9d4e"/></svg>
<div class="t" style="left:393px;width:34px;top:615.94px;height:14px;line-height:14px;font-size:9.4px;font-weight:700;text-align:center;"><span style="display:inline-block;transform:scale(0.9,1.08);transform-origin:center 10.26px">USD</span></div>
<div class="t" style="left:376px;width:131px;top:616.74px;height:14px;line-height:14px;font-size:9.4px;font-weight:700;text-align:right;padding-right:5px;"><span style="display:inline-block;transform:scale(0.9,1.08);transform-origin:right 10.26px">478 625</span></div>
<div class="t" style="left:456px;width:131px;top:616.74px;height:14px;line-height:14px;font-size:9.4px;font-weight:700;text-align:right;padding-right:2px;"><span style="display:inline-block;transform:scale(0.9,1.08);transform-origin:right 10.26px">(527 848)</span></div>
<div class="t" style="left:527px;width:131px;top:616.74px;height:14px;line-height:14px;font-size:9.4px;font-weight:700;text-align:right;padding-right:2px;"><span style="display:inline-block;transform:scale(0.9,1.08);transform-origin:right 10.26px">(176 787)</span></div>
<div class="t" style="left:598px;width:131px;top:616.74px;height:14px;line-height:14px;font-size:9.4px;font-weight:700;text-align:right;padding-right:5px;"><span style="display:inline-block;transform:scale(0.9,1.08);transform-origin:right 10.26px">68 781</span></div>
<div class="t" style="left:669px;width:131px;top:616.74px;height:14px;line-height:14px;font-size:9.4px;font-weight:700;text-align:right;padding-right:5px;"><span style="display:inline-block;transform:scale(0.9,1.08);transform-origin:right 10.26px">195 554</span></div>
<div class="t" style="left:740px;width:131px;top:616.74px;height:14px;line-height:14px;font-size:9.4px;font-weight:700;text-align:right;padding-right:5px;"><span style="display:inline-block;transform:scale(0.9,1.08);transform-origin:right 10.26px">245 222</span></div>
<div class="t" style="left:811px;width:131px;top:616.74px;height:14px;line-height:14px;font-size:9.4px;font-weight:700;text-align:right;padding-right:5px;"><span style="display:inline-block;transform:scale(0.9,1.08);transform-origin:right 10.26px">323 086</span></div>
<div class="t" style="left:882px;width:131px;top:616.74px;height:14px;line-height:14px;font-size:9.4px;font-weight:700;text-align:right;padding-right:5px;"><span style="display:inline-block;transform:scale(0.9,1.08);transform-origin:right 10.26px">350 617</span></div>
<div class="t" style="left:993px;width:117px;top:616.74px;height:14px;line-height:14px;font-size:9.4px;font-weight:700;text-align:right;padding-right:5px;"><span style="display:inline-block;transform:scale(0.9,1.08);transform-origin:right 10.26px">-</span></div>
<div class="t" style="left:1050px;width:117px;top:616.74px;height:14px;line-height:14px;font-size:9.4px;font-weight:700;text-align:right;padding-right:5px;"><span style="display:inline-block;transform:scale(0.9,1.08);transform-origin:right 10.26px">-</span></div>
<div class="t" style="left:1107px;width:117px;top:616.74px;height:14px;line-height:14px;font-size:9.4px;font-weight:700;text-align:right;padding-right:5px;"><span style="display:inline-block;transform:scale(0.9,1.08);transform-origin:right 10.26px">-</span></div>
<div class="t" style="left:1164px;width:117px;top:616.74px;height:14px;line-height:14px;font-size:9.4px;font-weight:700;text-align:right;padding-right:2px;"><span style="display:inline-block;transform:scale(0.9,1.08);transform-origin:right 10.26px">(80 142)</span></div>
<div class="t" style="left:1221px;width:117px;top:616.74px;height:14px;line-height:14px;font-size:9.4px;font-weight:700;text-align:right;padding-right:2px;"><span style="display:inline-block;transform:scale(0.9,1.08);transform-origin:right 10.26px">(74 771)</span></div>
<div class="t" style="left:1278px;width:117px;top:616.74px;height:14px;line-height:14px;font-size:9.4px;font-weight:700;text-align:right;padding-right:2px;"><span style="display:inline-block;transform:scale(0.9,1.08);transform-origin:right 10.26px">(69 254)</span></div>
<div class="t" style="left:1335px;width:117px;top:616.74px;height:14px;line-height:14px;font-size:9.4px;font-weight:700;text-align:right;padding-right:2px;"><span style="display:inline-block;transform:scale(0.9,1.08);transform-origin:right 10.26px">(64 130)</span></div>
<div class="t" style="left:92px;width:328px;top:630.74px;height:14px;line-height:14px;font-size:9.4px;font-style:italic;"><span style="display:inline-block;transform:scale(0.955,1.08);transform-origin:left 10.26px">EBITDA margin</span></div>
<div class="t" style="left:393px;width:34px;top:630.74px;height:14px;line-height:14px;font-size:9.4px;text-align:center;font-style:italic;"><span style="display:inline-block;transform:scale(0.955,1.08);transform-origin:center 10.26px">%</span></div>
<svg style="left:494px;top:634px" width="10" height="4" viewBox="0 0 10 4"><path d="M0.3 2.6 Q1.5 0.6 2.6 2 T5 2 T7.4 2 T9.7 1.4" stroke="#000" stroke-width="1.05" fill="none"/></svg>
<div class="t" style="left:456px;width:131px;top:630.74px;height:14px;line-height:14px;font-size:9.4px;text-align:right;font-style:italic;padding-right:4px;"><span style="display:inline-block;transform:scale(0.955,1.08);transform-origin:right 10.26px">-179%</span></div>
<div class="t" style="left:527px;width:131px;top:630.74px;height:14px;line-height:14px;font-size:9.4px;text-align:right;font-style:italic;padding-right:4px;"><span style="display:inline-block;transform:scale(0.955,1.08);transform-origin:right 10.26px">-17%</span></div>
<div class="t" style="left:598px;width:131px;top:630.74px;height:14px;line-height:14px;font-size:9.4px;text-align:right;font-style:italic;padding-right:4px;"><span style="display:inline-block;transform:scale(0.955,1.08);transform-origin:right 10.26px">5%</span></div>
<div class="t" style="left:669px;width:131px;top:630.74px;height:14px;line-height:14px;font-size:9.4px;text-align:right;font-style:italic;padding-right:4px;"><span style="display:inline-block;transform:scale(0.955,1.08);transform-origin:right 10.26px">12%</span></div>
<div class="t" style="left:740px;width:131px;top:630.74px;height:14px;line-height:14px;font-size:9.4px;text-align:right;font-style:italic;padding-right:4px;"><span style="display:inline-block;transform:scale(0.955,1.08);transform-origin:right 10.26px">15%</span></div>
<div class="t" style="left:811px;width:131px;top:630.74px;height:14px;line-height:14px;font-size:9.4px;text-align:right;font-style:italic;padding-right:4px;"><span style="display:inline-block;transform:scale(0.955,1.08);transform-origin:right 10.26px">18%</span></div>
<div class="t" style="left:882px;width:131px;top:630.74px;height:14px;line-height:14px;font-size:9.4px;text-align:right;font-style:italic;padding-right:4px;"><span style="display:inline-block;transform:scale(0.955,1.08);transform-origin:right 10.26px">18%</span></div>
<div class="t" style="left:993px;width:117px;top:630.74px;height:14px;line-height:14px;font-size:9.4px;text-align:right;padding-right:5px;"><span style="display:inline-block;transform:scale(0.955,1.08);transform-origin:right 10.26px">-</span></div>
<div class="t" style="left:1050px;width:117px;top:630.74px;height:14px;line-height:14px;font-size:9.4px;text-align:right;padding-right:5px;"><span style="display:inline-block;transform:scale(0.955,1.08);transform-origin:right 10.26px">-</span></div>
<div class="t" style="left:1107px;width:117px;top:630.74px;height:14px;line-height:14px;font-size:9.4px;text-align:right;padding-right:5px;"><span style="display:inline-block;transform:scale(0.955,1.08);transform-origin:right 10.26px">-</span></div>
<div class="t" style="left:1164px;width:117px;top:630.74px;height:14px;line-height:14px;font-size:9.4px;text-align:right;font-style:italic;padding-right:4px;"><span style="display:inline-block;transform:scale(0.955,1.08);transform-origin:right 10.26px">-1177%</span></div>
<div class="t" style="left:1221px;width:117px;top:630.74px;height:14px;line-height:14px;font-size:9.4px;text-align:right;font-style:italic;padding-right:4px;"><span style="display:inline-block;transform:scale(0.955,1.08);transform-origin:right 10.26px">-565%</span></div>
<div class="t" style="left:1278px;width:117px;top:630.74px;height:14px;line-height:14px;font-size:9.4px;text-align:right;font-style:italic;padding-right:4px;"><span style="display:inline-block;transform:scale(0.955,1.08);transform-origin:right 10.26px">-349%</span></div>
<div class="t" style="left:1335px;width:117px;top:630.74px;height:14px;line-height:14px;font-size:9.4px;text-align:right;font-style:italic;padding-right:4px;"><span style="display:inline-block;transform:scale(0.955,1.08);transform-origin:right 10.26px">-246%</span></div>
<div class="t" style="left:92px;width:328px;top:658.74px;height:14px;line-height:14px;font-size:9.4px;"><span style="display:inline-block;transform:scale(0.955,1.08);transform-origin:left 10.26px">Depreciation</span></div>
<svg style="left:369px;top:659px" width="12" height="11" viewBox="0 0 12 11"><path d="M0.9 6.1 L2.3 4.6 L5.0 6.8 L9.3 1.0 Q10.2 0.3 11.0 1.5 L5.5 9.7 Q5.0 10.2 4.5 9.7 Z" fill="#1f9d4e"/></svg>
<div class="t" style="left:393px;width:34px;top:657.94px;height:14px;line-height:14px;font-size:9.4px;text-align:center;"><span style="display:inline-block;transform:scale(0.955,1.08);transform-origin:center 10.26px">USD</span></div>
<div class="t" style="left:376px;width:131px;top:658.74px;height:14px;line-height:14px;font-size:9.4px;text-align:right;padding-right:2px;"><span style="display:inline-block;transform:scale(0.955,1.08);transform-origin:right 10.26px">(65 175)</span></div>
<div class="t" style="left:456px;width:131px;top:658.74px;height:14px;line-height:14px;font-size:9.4px;text-align:right;padding-right:2px;"><span style="display:inline-block;transform:scale(0.955,1.08);transform-origin:right 10.26px">(9 120)</span></div>
<div class="t" style="left:527px;width:131px;top:658.74px;height:14px;line-height:14px;font-size:9.4px;text-align:right;padding-right:2px;"><span style="display:inline-block;transform:scale(0.955,1.08);transform-origin:right 10.26px">(12 160)</span></div>
<div class="t" style="left:598px;width:131px;top:658.74px;height:14px;line-height:14px;font-size:9.4px;text-align:right;padding-right:2px;"><span style="display:inline-block;transform:scale(0.955,1.08);transform-origin:right 10.26px">(12 160)</span></div>
<div class="t" style="left:669px;width:131px;top:658.74px;height:14px;line-height:14px;font-size:9.4px;text-align:right;padding-right:2px;"><span style="display:inline-block;transform:scale(0.955,1.08);transform-origin:right 10.26px">(12 160)</span></div>
<div class="t" style="left:740px;width:131px;top:658.74px;height:14px;line-height:14px;font-size:9.4px;text-align:right;padding-right:2px;"><span style="display:inline-block;transform:scale(0.955,1.08);transform-origin:right 10.26px">(12 160)</span></div>
<div class="t" style="left:811px;width:131px;top:658.74px;height:14px;line-height:14px;font-size:9.4px;text-align:right;padding-right:2px;"><span style="display:inline-block;transform:scale(0.955,1.08);transform-origin:right 10.26px">(4 915)</span></div>
<div class="t" style="left:882px;width:131px;top:658.74px;height:14px;line-height:14px;font-size:9.4px;text-align:right;padding-right:2px;"><span style="display:inline-block;transform:scale(0.955,1.08);transform-origin:right 10.26px">(2 500)</span></div>
<div class="t" style="left:993px;width:117px;top:658.74px;height:14px;line-height:14px;font-size:9.4px;color:#00902e;text-align:right;padding-right:5px;"><span style="display:inline-block;transform:scale(0.955,1.08);transform-origin:right 10.26px">-</span></div>
<div class="t" style="left:1050px;width:117px;top:658.74px;height:14px;line-height:14px;font-size:9.4px;color:#00902e;text-align:right;padding-right:5px;"><span style="display:inline-block;transform:scale(0.955,1.08);transform-origin:right 10.26px">-</span></div>
<div class="t" style="left:1107px;width:117px;top:658.74px;height:14px;line-height:14px;font-size:9.4px;color:#00902e;text-align:right;padding-right:5px;"><span style="display:inline-block;transform:scale(0.955,1.08);transform-origin:right 10.26px">-</span></div>
<div class="t" style="left:1164px;width:117px;top:658.74px;height:14px;line-height:14px;font-size:9.4px;color:#00902e;text-align:right;padding-right:2px;"><span style="display:inline-block;transform:scale(0.955,1.08);transform-origin:right 10.26px">(1 013)</span></div>
<div class="t" style="left:1221px;width:117px;top:658.74px;height:14px;line-height:14px;font-size:9.4px;color:#00902e;text-align:right;padding-right:2px;"><span style="display:inline-block;transform:scale(0.955,1.08);transform-origin:right 10.26px">(1 013)</span></div>
<div class="t" style="left:1278px;width:117px;top:658.74px;height:14px;line-height:14px;font-size:9.4px;color:#00902e;text-align:right;padding-right:2px;"><span style="display:inline-block;transform:scale(0.955,1.08);transform-origin:right 10.26px">(1 013)</span></div>
<div class="t" style="left:1335px;width:117px;top:658.74px;height:14px;line-height:14px;font-size:9.4px;color:#00902e;text-align:right;padding-right:2px;"><span style="display:inline-block;transform:scale(0.955,1.08);transform-origin:right 10.26px">(1 013)</span></div>
<div class="t" style="left:84px;width:336px;top:672.74px;height:14px;line-height:14px;font-size:9.4px;font-weight:700;"><span style="display:inline-block;transform:scale(0.9,1.08);transform-origin:left 10.26px">EBIT</span></div>
<svg style="left:369px;top:673px" width="12" height="11" viewBox="0 0 12 11"><path d="M0.9 6.1 L2.3 4.6 L5.0 6.8 L9.3 1.0 Q10.2 0.3 11.0 1.5 L5.5 9.7 Q5.0 10.2 4.5 9.7 Z" fill="#1f9d4e"/></svg>
<div class="t" style="left:393px;width:34px;top:671.94px;height:14px;line-height:14px;font-size:9.4px;font-weight:700;text-align:center;"><span style="display:inline-block;transform:scale(0.9,1.08);transform-origin:center 10.26px">USD</span></div>
<div class="t" style="left:376px;width:131px;top:672.74px;height:14px;line-height:14px;font-size:9.4px;font-weight:700;text-align:right;padding-right:5px;"><span style="display:inline-block;transform:scale(0.9,1.08);transform-origin:right 10.26px">413 450</span></div>
<div class="t" style="left:456px;width:131px;top:672.74px;height:14px;line-height:14px;font-size:9.4px;font-weight:700;text-align:right;padding-right:2px;"><span style="display:inline-block;transform:scale(0.9,1.08);transform-origin:right 10.26px">(536 968)</span></div>
<div class="t" style="left:527px;width:131px;top:672.74px;height:14px;line-height:14px;font-size:9.4px;font-weight:700;text-align:right;padding-right:2px;"><span style="display:inline-block;transform:scale(0.9,1.08);transform-origin:right 10.26px">(188 947)</span></div>
<div class="t" style="left:598px;width:131px;top:672.74px;height:14px;line-height:14px;font-size:9.4px;font-weight:700;text-align:right;padding-right:5px;"><span style="display:inline-block;transform:scale(0.9,1.08);transform-origin:right 10.26px">56 621</span></div>
<div class="t" style="left:669px;width:131px;top:672.74px;height:14px;line-height:14px;font-size:9.4px;font-weight:700;text-align:right;padding-right:5px;"><span style="display:inline-block;transform:scale(0.9,1.08);transform-origin:right 10.26px">183 394</span></div>
<div class="t" style="left:740px;width:131px;top:672.74px;height:14px;line-height:14px;font-size:9.4px;font-weight:700;text-align:right;padding-right:5px;"><span style="display:inline-block;transform:scale(0.9,1.08);transform-origin:right 10.26px">233 062</span></div>
<div class="t" style="left:811px;width:131px;top:672.74px;height:14px;line-height:14px;font-size:9.4px;font-weight:700;text-align:right;padding-right:5px;"><span style="display:inline-block;transform:scale(0.9,1.08);transform-origin:right 10.26px">318 171</span></div>
<div class="t" style="left:882px;width:131px;top:672.74px;height:14px;line-height:14px;font-size:9.4px;font-weight:700;text-align:right;padding-right:5px;"><span style="display:inline-block;transform:scale(0.9,1.08);transform-origin:right 10.26px">348 117</span></div>
<div class="t" style="left:993px;width:117px;top:672.74px;height:14px;line-height:14px;font-size:9.4px;font-weight:700;text-align:right;padding-right:5px;"><span style="display:inline-block;transform:scale(0.9,1.08);transform-origin:right 10.26px">-</span></div>
<div class="t" style="left:1050px;width:117px;top:672.74px;height:14px;line-height:14px;font-size:9.4px;font-weight:700;text-align:right;padding-right:5px;"><span style="display:inline-block;transform:scale(0.9,1.08);transform-origin:right 10.26px">-</span></div>
<div class="t" style="left:1107px;width:117px;top:672.74px;height:14px;line-height:14px;font-size:9.4px;font-weight:700;text-align:right;padding-right:5px;"><span style="display:inline-block;transform:scale(0.9,1.08);transform-origin:right 10.26px">-</span></div>
<div class="t" style="left:1164px;width:117px;top:672.74px;height:14px;line-height:14px;font-size:9.4px;font-weight:700;text-align:right;padding-right:2px;"><span style="display:inline-block;transform:scale(0.9,1.08);transform-origin:right 10.26px">(81 156)</span></div>
<div class="t" style="left:1221px;width:117px;top:672.74px;height:14px;line-height:14px;font-size:9.4px;font-weight:700;text-align:right;padding-right:2px;"><span style="display:inline-block;transform:scale(0.9,1.08);transform-origin:right 10.26px">(75 785)</span></div>
<div class="t" style="left:1278px;width:117px;top:672.74px;height:14px;line-height:14px;font-size:9.4px;font-weight:700;text-align:right;padding-right:2px;"><span style="display:inline-block;transform:scale(0.9,1.08);transform-origin:right 10.26px">(70 268)</span></div>
<div class="t" style="left:1335px;width:117px;top:672.74px;height:14px;line-height:14px;font-size:9.4px;font-weight:700;text-align:right;padding-right:2px;"><span style="display:inline-block;transform:scale(0.9,1.08);transform-origin:right 10.26px">(65 150)</span></div>
<div class="t" style="left:92px;width:328px;top:686.74px;height:14px;line-height:14px;font-size:9.4px;font-style:italic;"><span style="display:inline-block;transform:scale(0.955,1.08);transform-origin:left 10.26px">EBIT margin</span></div>
<div class="t" style="left:393px;width:34px;top:686.74px;height:14px;line-height:14px;font-size:9.4px;text-align:center;font-style:italic;"><span style="display:inline-block;transform:scale(0.955,1.08);transform-origin:center 10.26px">%</span></div>
<svg style="left:494px;top:690px" width="10" height="4" viewBox="0 0 10 4"><path d="M0.3 2.6 Q1.5 0.6 2.6 2 T5 2 T7.4 2 T9.7 1.4" stroke="#000" stroke-width="1.05" fill="none"/></svg>
<div class="t" style="left:456px;width:131px;top:686.74px;height:14px;line-height:14px;font-size:9.4px;text-align:right;font-style:italic;padding-right:4px;"><span style="display:inline-block;transform:scale(0.955,1.08);transform-origin:right 10.26px">-182%</span></div>
<div class="t" style="left:527px;width:131px;top:686.74px;height:14px;line-height:14px;font-size:9.4px;text-align:right;font-style:italic;padding-right:4px;"><span style="display:inline-block;transform:scale(0.955,1.08);transform-origin:right 10.26px">-18%</span></div>
<div class="t" style="left:598px;width:131px;top:686.74px;height:14px;line-height:14px;font-size:9.4px;text-align:right;font-style:italic;padding-right:4px;"><span style="display:inline-block;transform:scale(0.955,1.08);transform-origin:right 10.26px">4%</span></div>
<div class="t" style="left:669px;width:131px;top:686.74px;height:14px;line-height:14px;font-size:9.4px;text-align:right;font-style:italic;padding-right:4px;"><span style="display:inline-block;transform:scale(0.955,1.08);transform-origin:right 10.26px">12%</span></div>
<div class="t" style="left:740px;width:131px;top:686.74px;height:14px;line-height:14px;font-size:9.4px;text-align:right;font-style:italic;padding-right:4px;"><span style="display:inline-block;transform:scale(0.955,1.08);transform-origin:right 10.26px">14%</span></div>
<div class="t" style="left:811px;width:131px;top:686.74px;height:14px;line-height:14px;font-size:9.4px;text-align:right;font-style:italic;padding-right:4px;"><span style="display:inline-block;transform:scale(0.955,1.08);transform-origin:right 10.26px">18%</span></div>
<div class="t" style="left:882px;width:131px;top:686.74px;height:14px;line-height:14px;font-size:9.4px;text-align:right;font-style:italic;padding-right:4px;"><span style="display:inline-block;transform:scale(0.955,1.08);transform-origin:right 10.26px">18%</span></div>
<div class="t" style="left:993px;width:117px;top:686.74px;height:14px;line-height:14px;font-size:9.4px;text-align:right;padding-right:5px;"><span style="display:inline-block;transform:scale(0.955,1.08);transform-origin:right 10.26px">-</span></div>
<div class="t" style="left:1050px;width:117px;top:686.74px;height:14px;line-height:14px;font-size:9.4px;text-align:right;padding-right:5px;"><span style="display:inline-block;transform:scale(0.955,1.08);transform-origin:right 10.26px">-</span></div>
<div class="t" style="left:1107px;width:117px;top:686.74px;height:14px;line-height:14px;font-size:9.4px;text-align:right;padding-right:5px;"><span style="display:inline-block;transform:scale(0.955,1.08);transform-origin:right 10.26px">-</span></div>
<div class="t" style="left:1164px;width:117px;top:686.74px;height:14px;line-height:14px;font-size:9.4px;text-align:right;font-style:italic;padding-right:4px;"><span style="display:inline-block;transform:scale(0.955,1.08);transform-origin:right 10.26px">-1192%</span></div>
<div class="t" style="left:1221px;width:117px;top:686.74px;height:14px;line-height:14px;font-size:9.4px;text-align:right;font-style:italic;padding-right:4px;"><span style="display:inline-block;transform:scale(0.955,1.08);transform-origin:right 10.26px">-572%</span></div>
<div class="t" style="left:1278px;width:117px;top:686.74px;height:14px;line-height:14px;font-size:9.4px;text-align:right;font-style:italic;padding-right:4px;"><span style="display:inline-block;transform:scale(0.955,1.08);transform-origin:right 10.26px">-354%</span></div>
<div class="t" style="left:1335px;width:117px;top:686.74px;height:14px;line-height:14px;font-size:9.4px;text-align:right;font-style:italic;padding-right:4px;"><span style="display:inline-block;transform:scale(0.955,1.08);transform-origin:right 10.26px">-250%</span></div>
<div class="t" style="left:92px;width:328px;top:714.74px;height:14px;line-height:14px;font-size:9.4px;"><span style="display:inline-block;transform:scale(0.955,1.08);transform-origin:left 10.26px">Interest expense</span></div>
<svg style="left:369px;top:715px" width="12" height="11" viewBox="0 0 12 11"><path d="M0.9 6.1 L2.3 4.6 L5.0 6.8 L9.3 1.0 Q10.2 0.3 11.0 1.5 L5.5 9.7 Q5.0 10.2 4.5 9.7 Z" fill="#1f9d4e"/></svg>
<div class="t" style="left:393px;width:34px;top:713.94px;height:14px;line-height:14px;font-size:9.4px;text-align:center;"><span style="display:inline-block;transform:scale(0.955,1.08);transform-origin:center 10.26px">USD</span></div>
<div class="t" style="left:376px;width:131px;top:714.74px;height:14px;line-height:14px;font-size:9.4px;text-align:right;padding-right:2px;"><span style="display:inline-block;transform:scale(0.955,1.08);transform-origin:right 10.26px">(24 190)</span></div>
<div class="t" style="left:456px;width:131px;top:714.74px;height:14px;line-height:14px;font-size:9.4px;text-align:right;padding-right:2px;"><span style="display:inline-block;transform:scale(0.955,1.08);transform-origin:right 10.26px">(3 087)</span></div>
<div class="t" style="left:527px;width:131px;top:714.74px;height:14px;line-height:14px;font-size:9.4px;text-align:right;padding-right:2px;"><span style="display:inline-block;transform:scale(0.955,1.08);transform-origin:right 10.26px">(3 915)</span></div>
<div class="t" style="left:598px;width:131px;top:714.74px;height:14px;line-height:14px;font-size:9.4px;text-align:right;padding-right:2px;"><span style="display:inline-block;transform:scale(0.955,1.08);transform-origin:right 10.26px">(3 756)</span></div>
<div class="t" style="left:669px;width:131px;top:714.74px;height:14px;line-height:14px;font-size:9.4px;text-align:right;padding-right:2px;"><span style="display:inline-block;transform:scale(0.955,1.08);transform-origin:right 10.26px">(3 597)</span></div>
<div class="t" style="left:740px;width:131px;top:714.74px;height:14px;line-height:14px;font-size:9.4px;text-align:right;padding-right:2px;"><span style="display:inline-block;transform:scale(0.955,1.08);transform-origin:right 10.26px">(3 438)</span></div>
<div class="t" style="left:811px;width:131px;top:714.74px;height:14px;line-height:14px;font-size:9.4px;text-align:right;padding-right:2px;"><span style="display:inline-block;transform:scale(0.955,1.08);transform-origin:right 10.26px">(3 279)</span></div>
<div class="t" style="left:882px;width:131px;top:714.74px;height:14px;line-height:14px;font-size:9.4px;text-align:right;padding-right:2px;"><span style="display:inline-block;transform:scale(0.955,1.08);transform-origin:right 10.26px">(3 120)</span></div>
<div class="t" style="left:993px;width:117px;top:714.74px;height:14px;line-height:14px;font-size:9.4px;color:#00902e;text-align:right;padding-right:5px;"><span style="display:inline-block;transform:scale(0.955,1.08);transform-origin:right 10.26px">-</span></div>
<div class="t" style="left:1050px;width:117px;top:714.74px;height:14px;line-height:14px;font-size:9.4px;color:#00902e;text-align:right;padding-right:2px;"><span style="display:inline-block;transform:scale(0.955,1.08);transform-origin:right 10.26px">(146)</span></div>
<div class="t" style="left:1107px;width:117px;top:714.74px;height:14px;line-height:14px;font-size:9.4px;color:#00902e;text-align:right;padding-right:2px;"><span style="display:inline-block;transform:scale(0.955,1.08);transform-origin:right 10.26px">(146)</span></div>
<div class="t" style="left:1164px;width:117px;top:714.74px;height:14px;line-height:14px;font-size:9.4px;color:#00902e;text-align:right;padding-right:2px;"><span style="display:inline-block;transform:scale(0.955,1.08);transform-origin:right 10.26px">(146)</span></div>
<div class="t" style="left:1221px;width:117px;top:714.74px;height:14px;line-height:14px;font-size:9.4px;color:#00902e;text-align:right;padding-right:2px;"><span style="display:inline-block;transform:scale(0.955,1.08);transform-origin:right 10.26px">(331)</span></div>
<div class="t" style="left:1278px;width:117px;top:714.74px;height:14px;line-height:14px;font-size:9.4px;color:#00902e;text-align:right;padding-right:2px;"><span style="display:inline-block;transform:scale(0.955,1.08);transform-origin:right 10.26px">(331)</span></div>
<div class="t" style="left:1335px;width:117px;top:714.74px;height:14px;line-height:14px;font-size:9.4px;color:#00902e;text-align:right;padding-right:2px;"><span style="display:inline-block;transform:scale(0.955,1.08);transform-origin:right 10.26px">(331)</span></div>
<div class="t" style="left:92px;width:328px;top:728.74px;height:14px;line-height:14px;font-size:9.4px;"><span style="display:inline-block;transform:scale(0.955,1.08);transform-origin:left 10.26px">Financing fees</span></div>
<svg style="left:369px;top:729px" width="12" height="11" viewBox="0 0 12 11"><path d="M0.9 6.1 L2.3 4.6 L5.0 6.8 L9.3 1.0 Q10.2 0.3 11.0 1.5 L5.5 9.7 Q5.0 10.2 4.5 9.7 Z" fill="#1f9d4e"/></svg>
<div class="t" style="left:393px;width:34px;top:727.94px;height:14px;line-height:14px;font-size:9.4px;text-align:center;"><span style="display:inline-block;transform:scale(0.955,1.08);transform-origin:center 10.26px">USD</span></div>
<div class="t" style="left:376px;width:131px;top:728.74px;height:14px;line-height:14px;font-size:9.4px;text-align:right;padding-right:2px;"><span style="display:inline-block;transform:scale(0.955,1.08);transform-origin:right 10.26px">(397)</span></div>
<div class="t" style="left:456px;width:131px;top:728.74px;height:14px;line-height:14px;font-size:9.4px;text-align:right;padding-right:2px;"><span style="display:inline-block;transform:scale(0.955,1.08);transform-origin:right 10.26px">(397)</span></div>
<div class="t" style="left:527px;width:131px;top:728.74px;height:14px;line-height:14px;font-size:9.4px;text-align:right;padding-right:5px;"><span style="display:inline-block;transform:scale(0.955,1.08);transform-origin:right 10.26px">-</span></div>
<div class="t" style="left:598px;width:131px;top:728.74px;height:14px;line-height:14px;font-size:9.4px;text-align:right;padding-right:5px;"><span style="display:inline-block;transform:scale(0.955,1.08);transform-origin:right 10.26px">-</span></div>
<div class="t" style="left:669px;width:131px;top:728.74px;height:14px;line-height:14px;font-size:9.4px;text-align:right;padding-right:5px;"><span style="display:inline-block;transform:scale(0.955,1.08);transform-origin:right 10.26px">-</span></div>
<div class="t" style="left:740px;width:131px;top:728.74px;height:14px;line-height:14px;font-size:9.4px;text-align:right;padding-right:5px;"><span style="display:inline-block;transform:scale(0.955,1.08);transform-origin:right 10.26px">-</span></div>
<div class="t" style="left:811px;width:131px;top:728.74px;height:14px;line-height:14px;font-size:9.4px;text-align:right;padding-right:5px;"><span style="display:inline-block;transform:scale(0.955,1.08);transform-origin:right 10.26px">-</span></div>
<div class="t" style="left:882px;width:131px;top:728.74px;height:14px;line-height:14px;font-size:9.4px;text-align:right;padding-right:5px;"><span style="display:inline-block;transform:scale(0.955,1.08);transform-origin:right 10.26px">-</span></div>
<div class="t" style="left:993px;width:117px;top:728.74px;height:14px;line-height:14px;font-size:9.4px;color:#00902e;text-align:right;padding-right:2px;"><span style="display:inline-block;transform:scale(0.955,1.08);transform-origin:right 10.26px">(397)</span></div>
<div class="t" style="left:1050px;width:117px;top:728.74px;height:14px;line-height:14px;font-size:9.4px;color:#00902e;text-align:right;padding-right:5px;"><span style="display:inline-block;transform:scale(0.955,1.08);transform-origin:right 10.26px">-</span></div>
<div class="t" style="left:1107px;width:117px;top:728.74px;height:14px;line-height:14px;font-size:9.4px;color:#00902e;text-align:right;padding-right:5px;"><span style="display:inline-block;transform:scale(0.955,1.08);transform-origin:right 10.26px">-</span></div>
<div class="t" style="left:1164px;width:117px;top:728.74px;height:14px;line-height:14px;font-size:9.4px;color:#00902e;text-align:right;padding-right:5px;"><span style="display:inline-block;transform:scale(0.955,1.08);transform-origin:right 10.26px">-</span></div>
<div class="t" style="left:1221px;width:117px;top:728.74px;height:14px;line-height:14px;font-size:9.4px;color:#00902e;text-align:right;padding-right:5px;"><span style="display:inline-block;transform:scale(0.955,1.08);transform-origin:right 10.26px">-</span></div>
<div class="t" style="left:1278px;width:117px;top:728.74px;height:14px;line-height:14px;font-size:9.4px;color:#00902e;text-align:right;padding-right:5px;"><span style="display:inline-block;transform:scale(0.955,1.08);transform-origin:right 10.26px">-</span></div>
<div class="t" style="left:1335px;width:117px;top:728.74px;height:14px;line-height:14px;font-size:9.4px;color:#00902e;text-align:right;padding-right:5px;"><span style="display:inline-block;transform:scale(0.955,1.08);transform-origin:right 10.26px">-</span></div>
<div class="t" style="left:84px;width:336px;top:742.74px;height:14px;line-height:14px;font-size:9.4px;font-weight:700;"><span style="display:inline-block;transform:scale(0.9,1.08);transform-origin:left 10.26px">Net profit before tax</span></div>
<svg style="left:369px;top:743px" width="12" height="11" viewBox="0 0 12 11"><path d="M0.9 6.1 L2.3 4.6 L5.0 6.8 L9.3 1.0 Q10.2 0.3 11.0 1.5 L5.5 9.7 Q5.0 10.2 4.5 9.7 Z" fill="#1f9d4e"/></svg>
<div class="t" style="left:393px;width:34px;top:741.94px;height:14px;line-height:14px;font-size:9.4px;text-align:center;"><span style="display:inline-block;transform:scale(0.955,1.08);transform-origin:center 10.26px">USD</span></div>
<div class="t" style="left:376px;width:131px;top:742.74px;height:14px;line-height:14px;font-size:9.4px;font-weight:700;text-align:right;padding-right:5px;"><span style="display:inline-block;transform:scale(0.9,1.08);transform-origin:right 10.26px">388 863</span></div>
<div class="t" style="left:456px;width:131px;top:742.74px;height:14px;line-height:14px;font-size:9.4px;font-weight:700;text-align:right;padding-right:2px;"><span style="display:inline-block;transform:scale(0.9,1.08);transform-origin:right 10.26px">(540 452)</span></div>
<div class="t" style="left:527px;width:131px;top:742.74px;height:14px;line-height:14px;font-size:9.4px;font-weight:700;text-align:right;padding-right:2px;"><span style="display:inline-block;transform:scale(0.9,1.08);transform-origin:right 10.26px">(192 862)</span></div>
<div class="t" style="left:598px;width:131px;top:742.74px;height:14px;line-height:14px;font-size:9.4px;font-weight:700;text-align:right;padding-right:5px;"><span style="display:inline-block;transform:scale(0.9,1.08);transform-origin:right 10.26px">52 865</span></div>
<div class="t" style="left:669px;width:131px;top:742.74px;height:14px;line-height:14px;font-size:9.4px;font-weight:700;text-align:right;padding-right:5px;"><span style="display:inline-block;transform:scale(0.9,1.08);transform-origin:right 10.26px">179 798</span></div>
<div class="t" style="left:740px;width:131px;top:742.74px;height:14px;line-height:14px;font-size:9.4px;font-weight:700;text-align:right;padding-right:5px;"><span style="display:inline-block;transform:scale(0.9,1.08);transform-origin:right 10.26px">229 624</span></div>
<div class="t" style="left:811px;width:131px;top:742.74px;height:14px;line-height:14px;font-size:9.4px;font-weight:700;text-align:right;padding-right:5px;"><span style="display:inline-block;transform:scale(0.9,1.08);transform-origin:right 10.26px">314 892</span></div>
<div class="t" style="left:882px;width:131px;top:742.74px;height:14px;line-height:14px;font-size:9.4px;font-weight:700;text-align:right;padding-right:5px;"><span style="display:inline-block;transform:scale(0.9,1.08);transform-origin:right 10.26px">344 997</span></div>
<div class="t" style="left:993px;width:117px;top:742.74px;height:14px;line-height:14px;font-size:9.4px;font-weight:700;text-align:right;padding-right:2px;"><span style="display:inline-block;transform:scale(0.9,1.08);transform-origin:right 10.26px">(397)</span></div>
<div class="t" style="left:1050px;width:117px;top:742.74px;height:14px;line-height:14px;font-size:9.4px;font-weight:700;text-align:right;padding-right:2px;"><span style="display:inline-block;transform:scale(0.9,1.08);transform-origin:right 10.26px">(146)</span></div>
<div class="t" style="left:1107px;width:117px;top:742.74px;height:14px;line-height:14px;font-size:9.4px;font-weight:700;text-align:right;padding-right:2px;"><span style="display:inline-block;transform:scale(0.9,1.08);transform-origin:right 10.26px">(146)</span></div>
<div class="t" style="left:1164px;width:117px;top:742.74px;height:14px;line-height:14px;font-size:9.4px;font-weight:700;text-align:right;padding-right:2px;"><span style="display:inline-block;transform:scale(0.9,1.08);transform-origin:right 10.26px">(81 301)</span></div>
<div class="t" style="left:1221px;width:117px;top:742.74px;height:14px;line-height:14px;font-size:9.4px;font-weight:700;text-align:right;padding-right:2px;"><span style="display:inline-block;transform:scale(0.9,1.08);transform-origin:right 10.26px">(76 116)</span></div>
<div class="t" style="left:1278px;width:117px;top:742.74px;height:14px;line-height:14px;font-size:9.4px;font-weight:700;text-align:right;padding-right:2px;"><span style="display:inline-block;transform:scale(0.9,1.08);transform-origin:right 10.26px">(70 599)</span></div>
<div class="t" style="left:1335px;width:117px;top:742.74px;height:14px;line-height:14px;font-size:9.4px;font-weight:700;text-align:right;padding-right:2px;"><span style="display:inline-block;transform:scale(0.9,1.08);transform-origin:right 10.26px">(65 480)</span></div>
<div style="left:435px;top:208px;width:2px;height:545px;background:#173d7b;"></div>
<div style="left:506px;top:208px;width:2px;height:545px;background:#173d7b;"></div>
<div style="left:435px;top:208px;width:73px;height:2px;background:#173d7b;"></div>
<svg style="left:437px;top:742px" width="6" height="6"><path d="M0 0 L5 0 L0 5 Z" fill="#1c8f3a"/></svg>
<svg style="left:517px;top:742px" width="6" height="6"><path d="M0 0 L5 0 L0 5 Z" fill="#1c8f3a"/></svg>
<svg style="left:588px;top:742px" width="6" height="6"><path d="M0 0 L5 0 L0 5 Z" fill="#1c8f3a"/></svg>
<svg style="left:659px;top:742px" width="6" height="6"><path d="M0 0 L5 0 L0 5 Z" fill="#1c8f3a"/></svg>
<svg style="left:730px;top:742px" width="6" height="6"><path d="M0 0 L5 0 L0 5 Z" fill="#1c8f3a"/></svg>
<svg style="left:801px;top:742px" width="6" height="6"><path d="M0 0 L5 0 L0 5 Z" fill="#1c8f3a"/></svg>
<svg style="left:872px;top:742px" width="6" height="6"><path d="M0 0 L5 0 L0 5 Z" fill="#1c8f3a"/></svg>
<svg style="left:943px;top:742px" width="6" height="6"><path d="M0 0 L5 0 L0 5 Z" fill="#1c8f3a"/></svg>
<div style="left:33px;top:4px;width:11px;height:11px;box-sizing:border-box;border:0.5px solid #d8d8d8;border-radius:1.5px;background:linear-gradient(#f6f6f6,#ececec);box-shadow:0 0.5px 0.5px rgba(0,0,0,0.08)"></div>
<div class="t" style="left:33px;width:11px;top:2.71px;height:14px;line-height:14px;font-size:9.5px;color:#4a4a4a;text-align:center;">1</div>
<div style="left:33px;top:16px;width:11px;height:11px;box-sizing:border-box;border:0.5px solid #d8d8d8;border-radius:1.5px;background:linear-gradient(#f6f6f6,#ececec);box-shadow:0 0.5px 0.5px rgba(0,0,0,0.08)"></div>
<div class="t" style="left:33px;width:11px;top:14.71px;height:14px;line-height:14px;font-size:9.5px;color:#4a4a4a;text-align:center;">2</div>
<div style="left:2px;top:34px;width:11px;height:11px;box-sizing:border-box;border:0.5px solid #d8d8d8;border-radius:1.5px;background:linear-gradient(#f6f6f6,#ececec);box-shadow:0 0.5px 0.5px rgba(0,0,0,0.08)"></div>
<div class="t" style="left:2px;width:11px;top:32.71px;height:14px;line-height:14px;font-size:9.5px;color:#4a4a4a;text-align:center;">1</div>
<div style="left:14px;top:34px;width:11px;height:11px;box-sizing:border-box;border:0.5px solid #d8d8d8;border-radius:1.5px;background:linear-gradient(#f6f6f6,#ececec);box-shadow:0 0.5px 0.5px rgba(0,0,0,0.08)"></div>
<div class="t" style="left:14px;width:11px;top:32.71px;height:14px;line-height:14px;font-size:9.5px;color:#4a4a4a;text-align:center;">2</div>
<svg style="left:29px;top:31px" width="19" height="18"><path d="M17 4.5 V15.5 H5.5 Z" fill="#dedede"/></svg>
<div style="left:466px;top:4px;width:12px;height:12px;box-sizing:border-box;border:1px solid #8f8f8f;border-radius:2.5px;background:#fff"></div>
<div style="left:469px;top:9px;width:6px;height:2px;background:#7a7a7a;"></div>
<div style="left:478px;top:7px;width:535px;height:2px;background:#8a8a8a;"></div>
<div style="left:1011px;top:7px;width:2px;height:6px;background:#8a8a8a;"></div>
<div style="left:511px;top:19px;width:2px;height:2px;background:#9a9a9a;"></div>
<div style="left:551px;top:19px;width:2px;height:2px;background:#9a9a9a;"></div>
<div style="left:622px;top:19px;width:2px;height:2px;background:#9a9a9a;"></div>
<div style="left:693px;top:19px;width:2px;height:2px;background:#9a9a9a;"></div>
<div style="left:764px;top:19px;width:2px;height:2px;background:#9a9a9a;"></div>
<div style="left:835px;top:19px;width:2px;height:2px;background:#9a9a9a;"></div>
<div style="left:906px;top:19px;width:2px;height:2px;background:#9a9a9a;"></div>
<div style="left:977px;top:19px;width:2px;height:2px;background:#9a9a9a;"></div>
<div style="left:2px;top:211px;width:12px;height:12px;box-sizing:border-box;border:1px solid #8f8f8f;border-radius:2.5px;background:#fff"></div>
<div style="left:5px;top:216px;width:6px;height:2px;background:#7a7a7a;"></div>
<div style="left:2px;top:281px;width:12px;height:12px;box-sizing:border-box;border:1px solid #8f8f8f;border-radius:2.5px;background:#fff"></div>
<div style="left:5px;top:286px;width:6px;height:2px;background:#7a7a7a;"></div>
<div style="left:5px;top:223px;width:2px;height:56px;background:#8e8e8e;"></div>
<div style="left:5px;top:277px;width:6px;height:2px;background:#8e8e8e;"></div>
<div style="left:5px;top:293px;width:2px;height:460px;background:#8e8e8e;"></div>
<div style="left:17px;top:230px;width:2px;height:2px;background:#9a9a9a;"></div>
<div style="left:17px;top:244px;width:2px;height:2px;background:#9a9a9a;"></div>
<div style="left:17px;top:258px;width:2px;height:2px;background:#9a9a9a;"></div>
<div style="left:17px;top:272px;width:2px;height:2px;background:#9a9a9a;"></div>
<div style="left:17px;top:300px;width:2px;height:2px;background:#9a9a9a;"></div>
<div style="left:17px;top:314px;width:2px;height:2px;background:#9a9a9a;"></div>
<div style="left:17px;top:328px;width:2px;height:2px;background:#9a9a9a;"></div>
<div style="left:17px;top:342px;width:2px;height:2px;background:#9a9a9a;"></div>
<div style="left:17px;top:356px;width:2px;height:2px;background:#9a9a9a;"></div>
<div style="left:17px;top:370px;width:2px;height:2px;background:#9a9a9a;"></div>
<div style="left:17px;top:384px;width:2px;height:2px;background:#9a9a9a;"></div>
<div style="left:17px;top:398px;width:2px;height:2px;background:#9a9a9a;"></div>
<div style="left:17px;top:412px;width:2px;height:2px;background:#9a9a9a;"></div>
<div style="left:17px;top:426px;width:2px;height:2px;background:#9a9a9a;"></div>
<div style="left:17px;top:440px;width:2px;height:2px;background:#9a9a9a;"></div>
<div style="left:17px;top:454px;width:2px;height:2px;background:#9a9a9a;"></div>
<div style="left:17px;top:468px;width:2px;height:2px;background:#9a9a9a;"></div>
<div style="left:17px;top:482px;width:2px;height:2px;background:#9a9a9a;"></div>
<div style="left:17px;top:496px;width:2px;height:2px;background:#9a9a9a;"></div>
<div style="left:17px;top:510px;width:2px;height:2px;background:#9a9a9a;"></div>
<div style="left:17px;top:524px;width:2px;height:2px;background:#9a9a9a;"></div>
<div style="left:17px;top:538px;width:2px;height:2px;background:#9a9a9a;"></div>
<div style="left:17px;top:552px;width:2px;height:2px;background:#9a9a9a;"></div>
<div style="left:17px;top:566px;width:2px;height:2px;background:#9a9a9a;"></div>
<div style="left:17px;top:580px;width:2px;height:2px;background:#9a9a9a;"></div>
<div style="left:17px;top:594px;width:2px;height:2px;background:#9a9a9a;"></div>
<div style="left:17px;top:608px;width:2px;height:2px;background:#9a9a9a;"></div>
<div style="left:17px;top:622px;width:2px;height:2px;background:#9a9a9a;"></div>
<div style="left:17px;top:636px;width:2px;height:2px;background:#9a9a9a;"></div>
<div style="left:17px;top:650px;width:2px;height:2px;background:#9a9a9a;"></div>
<div style="left:17px;top:664px;width:2px;height:2px;background:#9a9a9a;"></div>
<div style="left:17px;top:678px;width:2px;height:2px;background:#9a9a9a;"></div>
<div style="left:17px;top:692px;width:2px;height:2px;background:#9a9a9a;"></div>
<div style="left:17px;top:706px;width:2px;height:2px;background:#9a9a9a;"></div>
<div style="left:17px;top:720px;width:2px;height:2px;background:#9a9a9a;"></div>
<div style="left:17px;top:734px;width:2px;height:2px;background:#9a9a9a;"></div>
<div style="left:17px;top:748px;width:2px;height:2px;background:#9a9a9a;"></div>
<div style="left:0px;top:209px;width:1440px;height:1px;background:#969696;"></div>
<div style="left:516px;top:2px;width:1px;height:751px;background:#969696;"></div>
<div style="left:0px;top:753px;width:1440px;height:26px;background:#efefef;"></div>
<div style="left:0px;top:753px;width:1440px;height:1px;background:#d6d6d6;"></div>
<div style="left:0px;top:779px;width:1440px;height:1px;background:#b0b0b0;"></div>
<div style="left:0;top:780px;width:1440px;height:22px;background:linear-gradient(#e4e4e4,#d6d6d6)"></div>
<svg style="left:13px;top:760px" width="40" height="13"><path d="M9.5 1 L2 6.3 L9.5 11.6 Z" fill="#555"/><path d="M25 1 L32.5 6.3 L25 11.6 Z" fill="#555"/></svg>
<div style="left:60px;top:755px;width:1px;height:19px;background:#d2d2d2;"></div>
<div class="t" style="left:60px;width:79px;top:758px;height:16px;line-height:16px;font-size:12px;text-align:center;color:#595959;-webkit-mask-image:linear-gradient(90deg,rgba(0,0,0,0.45) 35%,#000 60%)">Checks</div>
<div style="left:139px;top:755px;width:1px;height:19px;background:#d2d2d2;"></div>
<div class="t" style="left:139px;width:87px;top:758.84px;height:14px;line-height:14px;font-size:12px;color:#666666;text-align:center;">Summary</div>
<div style="left:226px;top:755px;width:1px;height:19px;background:#d2d2d2;"></div>
<div class="t" style="left:226px;width:79px;top:758.84px;height:14px;line-height:14px;font-size:12px;color:#666666;text-align:center;">KPI</div>
<div style="left:305px;top:755px;width:1px;height:19px;background:#d2d2d2;"></div>
<div class="t" style="left:305px;width:79px;top:758.84px;height:14px;line-height:14px;font-size:12px;color:#666666;text-align:center;">Inputs</div>
<div style="left:384px;top:755px;width:1px;height:19px;background:#d2d2d2;"></div>
<div class="t" style="left:384px;width:79px;top:758.84px;height:14px;line-height:14px;font-size:12px;color:#666666;text-align:center;">Capex_i</div>
<div style="left:463px;top:755px;width:1px;height:19px;background:#d2d2d2;"></div>
<div class="t" style="left:463px;width:98px;top:758.84px;height:14px;line-height:14px;font-size:12px;color:#666666;text-align:center;">Revenues_i</div>
<div style="left:561px;top:755px;width:1px;height:19px;background:#d2d2d2;"></div>
<div class="t" style="left:561px;width:96px;top:758.84px;height:14px;line-height:14px;font-size:12px;color:#666666;text-align:center;">Economics</div>
<div style="left:657px;top:755px;width:1px;height:19px;background:#d2d2d2;"></div>
<div class="t" style="left:657px;width:83px;top:758.84px;height:14px;line-height:14px;font-size:12px;color:#666666;text-align:center;">Capex_c</div>
<div style="left:740px;top:755px;width:1px;height:19px;background:#d2d2d2;"></div>
<div class="t" style="left:740px;width:102px;top:758.84px;height:14px;line-height:14px;font-size:12px;color:#666666;text-align:center;">Revenues_c</div>
<div style="left:842px;top:755px;width:1px;height:19px;background:#d2d2d2;"></div>
<div class="t" style="left:842px;width:78px;top:758.84px;height:14px;line-height:14px;font-size:12px;color:#666666;text-align:center;">Opex</div>
<div style="left:920px;top:755px;width:1px;height:19px;background:#d2d2d2;"></div>
<div class="t" style="left:920px;width:79px;top:758.84px;height:14px;line-height:14px;font-size:12px;color:#666666;text-align:center;">Payroll</div>
<div style="left:999px;top:755px;width:1px;height:19px;background:#d2d2d2;"></div>
<div class="t" style="left:999px;width:79px;top:758.84px;height:14px;line-height:14px;font-size:12px;color:#666666;text-align:center;">WC</div>
<div style="left:1078px;top:755px;width:1px;height:19px;background:#d2d2d2;"></div>
<div class="t" style="left:1078px;width:79px;top:758.84px;height:14px;line-height:14px;font-size:12px;color:#666666;text-align:center;">Debt</div>
<div style="left:1157px;top:755px;width:1px;height:19px;background:#d2d2d2;"></div>
<div class="t" style="left:1157px;width:80px;top:758.84px;height:14px;line-height:14px;font-size:12px;color:#666666;text-align:center;">WACC</div>
<div style="left:1237px;top:752px;width:78px;height:23px;background:#fff;border-radius:0 0 3px 3px;box-shadow:0 1px 1.5px rgba(0,0,0,0.28)"></div>
<div class="t" style="left:1237px;width:78px;top:758.84px;height:14px;line-height:14px;font-size:12px;font-weight:700;color:#1a8a45;text-align:center;">FS</div>
<div style="left:1315px;top:755px;width:1px;height:19px;background:#d2d2d2;"></div>
<div class="t" style="left:1334px;width:37px;top:758px;height:16px;line-height:16px;font-size:12px;overflow:hidden;color:#8c8c8c;-webkit-mask-image:linear-gradient(90deg,#000 55%,transparent)">Return</div>
<div style="left:1372px;top:755px;width:1px;height:19px;background:#d2d2d2;"></div>
<div style="left:1409px;top:755px;width:1px;height:19px;background:#d2d2d2;"></div>
<div style="left:1386px;top:765px;width:11px;height:2px;background:#4a4a4a;"></div>
<div style="left:1390.5px;top:760.5px;width:2px;height:11px;background:#4a4a4a;"></div>
<div class="t" style="left:24px;width:96px;top:783.84px;height:14px;line-height:14px;font-size:12px;color:#595959;">Ready</div>
<svg style="left:76px;top:780px" width="22" height="20" viewBox="0 0 22 20"><circle cx="6.4" cy="5.4" r="2.5" fill="#5a5a5a"/><path d="M7.4 9 V14.4" stroke="#5a5a5a" stroke-width="0.9"/><path d="M4.1 14.2 H11.6 L12.4 16.8 H5.6 Q4.1 16.8 4.1 14.2 Z" fill="#5a5a5a"/><path d="M11.5 16.2 Q15.3 16.2 15.3 13 V5" stroke="#5a5a5a" stroke-width="1.1" fill="none"/><path d="M10.3 4 H17.3 Q18.9 4 18.9 7 H15.9 V5.1 H10.3 Z" fill="#5a5a5a"/></svg>
<svg style="left:110px;top:780px" width="20" height="20" viewBox="0 0 20 20"><circle cx="8.4" cy="5.3" r="1.9" fill="none" stroke="#5a5a5a" stroke-width="0.9"/><path d="M6.3 6.6 Q4 6.3 3 6.2 Q1.6 6.4 2.3 7.8 Q3.2 8.6 5 9.3 Q5.6 11.5 5 13.6 Q3.8 16.5 4.6 17.5 Q5.6 18.2 6.7 15.8 Q7.4 14.1 8.2 13.3 Q9 14 9.6 15" stroke="#5a5a5a" stroke-width="0.9" fill="none"/><path d="M10.5 6.6 Q13 6.3 14.2 6.2 Q15.6 6.5 15 8 Q14.4 8.9 12.6 9.6" stroke="#5a5a5a" stroke-width="0.9" fill="none"/><path d="M10 11.3 L16.5 17.8 M16.6 10.8 L10.3 17.8" stroke="#5a5a5a" stroke-width="0.85"/></svg>
<div class="t" style="left:131px;width:269px;top:783.84px;height:14px;line-height:14px;font-size:12px;color:#595959;"><span style="display:inline-block;transform:scaleX(1.05);transform-origin:left 11.16px">Accessibility: Investigate</span></div>
<div style="left:1125px;top:780px;width:37px;height:22px;background:#acacac;"></div>
<svg style="left:1137px;top:784px" width="13" height="13"><rect x="0" y="0" width="13" height="13" fill="#fff"/><rect x="1" y="1" width="3" height="3" fill="#9a9a9a"/><rect x="1" y="5" width="3" height="3" fill="#9a9a9a"/><rect x="1" y="9" width="3" height="3" fill="#9a9a9a"/><rect x="5" y="1" width="3" height="3" fill="#9a9a9a"/><rect x="5" y="5" width="3" height="3" fill="#9a9a9a"/><rect x="5" y="9" width="3" height="3" fill="#9a9a9a"/><rect x="9" y="1" width="3" height="3" fill="#9a9a9a"/><rect x="9" y="5" width="3" height="3" fill="#9a9a9a"/><rect x="9" y="9" width="3" height="3" fill="#9a9a9a"/></svg>
<svg style="left:1172px;top:784px" width="14" height="13"><path d="M0.75 0.75 H13.25 V12.25 H0.75 Z" stroke="#5a5a5a" stroke-width="1.3" fill="none"/><path d="M3.6 3.0 H10.4 V10.0 H3.6 Z" stroke="#5a5a5a" stroke-width="1.1" fill="none"/><path d="M5.2 5 H8.8 M5.2 6.6 H8.8 M5.2 8.2 H8.8" stroke="#5a5a5a" stroke-width="0.9"/></svg>
<svg style="left:1208px;top:784px" width="14" height="13"><path d="M0.75 0.75 H13.25 V12.25 H0.75 Z" stroke="#5a5a5a" stroke-width="1.3" fill="none"/><path d="M0.75 7 H8.2 V0.75 M4.5 0.75 V7" stroke="#5a5a5a" stroke-width="1.2" fill="none"/></svg>
<div style="left:1241px;top:790px;width:8px;height:2px;background:#555;"></div>
<div style="left:1256px;top:790px;width:100px;height:2px;border-radius:1px;background:#9d9d9d"></div>
<div style="left:1290px;top:781px;width:18px;height:18px;border-radius:50%;background:#fbfbfb;box-sizing:border-box;border:1px solid #cacaca;box-shadow:0 0.5px 1px rgba(0,0,0,0.2)"></div>
<div style="left:1362px;top:790px;width:9px;height:2px;background:#555;"></div>
<div style="left:1365.5px;top:786.5px;width:2px;height:9px;background:#555;"></div>
<div class="t" style="left:1388px;width:48px;top:783.67px;height:14px;line-height:14px;font-size:12.5px;color:#595959;">85%</div>
</body></html>
